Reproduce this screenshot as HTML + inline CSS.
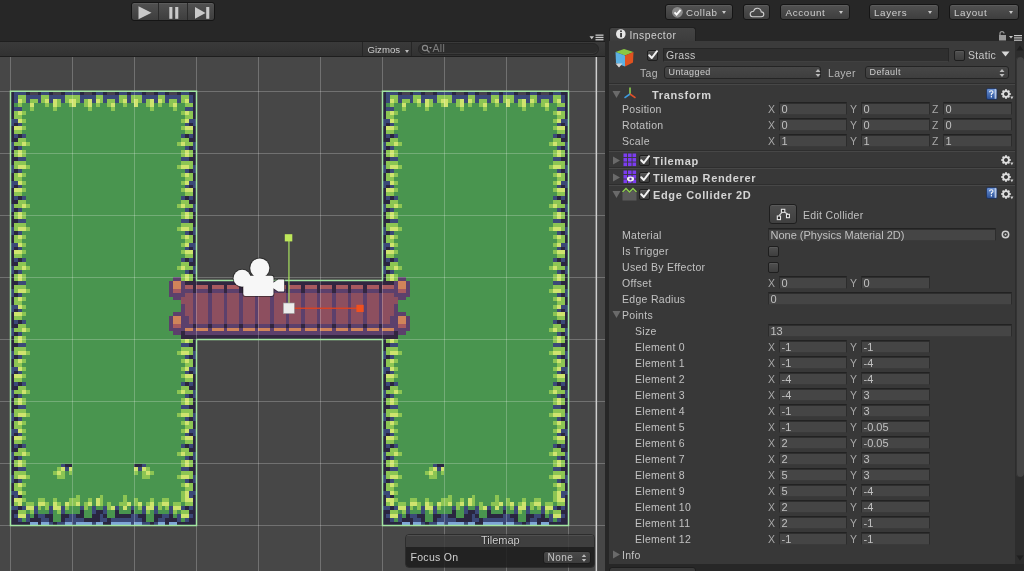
<!DOCTYPE html>
<html><head><meta charset="utf-8">
<style>
*{margin:0;padding:0;box-sizing:border-box}
html,body{-webkit-font-smoothing:antialiased;width:1024px;height:571px;overflow:hidden;background:#272727;font-family:"Liberation Sans",sans-serif;font-size:11px;color:#b4b4b4;position:relative}
.a{position:absolute}
.btn{position:absolute;height:16px;border-radius:3px;background:linear-gradient(#515151,#3e3e3e);border:1px solid #151515;box-shadow:inset 0 1px 0 #5c5c5c}
.btn span{position:absolute;top:1px;font-size:9.8px;letter-spacing:0.65px;line-height:13px;color:#cfcfcf;white-space:nowrap}
.dd{position:absolute;width:0;height:0;border-left:2.5px solid transparent;border-right:2.5px solid transparent;border-top:3px solid #c8c8c8}
.l{position:absolute;font-size:10.5px;letter-spacing:0.3px;color:#c2c2c2;white-space:nowrap;line-height:13px}
.f{position:absolute;height:13px;background:#454545;border-top:1px solid #222;border-left:1px solid #2c2c2c;border-right:1px solid #2c2c2c;border-bottom:1px solid #3a3a3a;box-shadow:inset 0 1px 0 #2e2e2e}
.f span{position:absolute;left:1.5px;top:-0.4px;font-size:11px;color:#c0c0c0;line-height:13px}
.sep{position:absolute;left:609px;width:406px;height:2px;border-top:1px solid #2b2b2b;border-bottom:1px solid #474747}
.h{position:absolute;font-weight:bold;font-size:11px;color:#d4d4d4;letter-spacing:0.65px;line-height:13px;white-space:nowrap}
.cb{position:absolute;width:11px;height:11px;border-radius:2px;background:linear-gradient(#505050,#3e3e3e);border:1px solid #1e1e1e;box-shadow:inset 0 1px 0 #5a5a5a}
.tri{position:absolute;width:0;height:0}
</style></head><body><div id="root" style="position:absolute;left:0;top:0;width:1024px;height:571px;will-change:transform">

<!-- ============ scene svg ============ -->
<svg class="a" style="left:0;top:0" width="1024" height="571" viewBox="0 0 1024 571" shape-rendering="crispEdges">
<defs><filter id="bl" x="-2%" y="-2%" width="104%" height="104%"><feGaussianBlur stdDeviation="0.7"/></filter></defs>
<rect x="0" y="57" width="605" height="514" fill="#474747"/>
<g filter="url(#bl)"><rect x="10.40" y="91.5" width="186" height="434" fill="#4a9550"/>
<rect x="382.40" y="91.5" width="186" height="434" fill="#4a9550"/>
<rect x="10.40" y="91.50" width="3.90" height="3.90" fill="#2b2540"/>
<rect x="14.28" y="91.50" width="11.64" height="3.90" fill="#3a4a78"/>
<rect x="25.90" y="91.50" width="3.90" height="3.90" fill="#2b2540"/>
<rect x="29.77" y="91.50" width="7.77" height="3.90" fill="#47434f"/>
<rect x="37.52" y="91.50" width="3.90" height="3.90" fill="#2b2540"/>
<rect x="41.40" y="91.50" width="7.77" height="3.90" fill="#3a4a78"/>
<rect x="49.15" y="91.50" width="3.90" height="3.90" fill="#2b2540"/>
<rect x="53.02" y="91.50" width="7.77" height="3.90" fill="#47434f"/>
<rect x="60.77" y="91.50" width="3.90" height="3.90" fill="#2b2540"/>
<rect x="64.65" y="91.50" width="15.52" height="3.90" fill="#3a4a78"/>
<rect x="80.15" y="91.50" width="3.90" height="3.90" fill="#2b2540"/>
<rect x="84.03" y="91.50" width="7.77" height="3.90" fill="#47434f"/>
<rect x="91.78" y="91.50" width="3.90" height="3.90" fill="#2b2540"/>
<rect x="95.65" y="91.50" width="7.77" height="3.90" fill="#3a4a78"/>
<rect x="103.40" y="91.50" width="3.90" height="3.90" fill="#2b2540"/>
<rect x="107.28" y="91.50" width="7.77" height="3.90" fill="#47434f"/>
<rect x="115.03" y="91.50" width="3.90" height="3.90" fill="#2b2540"/>
<rect x="118.90" y="91.50" width="7.77" height="3.90" fill="#3a4a78"/>
<rect x="126.65" y="91.50" width="3.90" height="3.90" fill="#2b2540"/>
<rect x="130.53" y="91.50" width="11.64" height="3.90" fill="#3a4a78"/>
<rect x="142.15" y="91.50" width="3.90" height="3.90" fill="#2b2540"/>
<rect x="146.03" y="91.50" width="7.77" height="3.90" fill="#47434f"/>
<rect x="153.78" y="91.50" width="3.90" height="3.90" fill="#2b2540"/>
<rect x="157.65" y="91.50" width="7.77" height="3.90" fill="#3a4a78"/>
<rect x="165.40" y="91.50" width="3.90" height="3.90" fill="#2b2540"/>
<rect x="169.28" y="91.50" width="7.77" height="3.90" fill="#47434f"/>
<rect x="177.03" y="91.50" width="3.90" height="3.90" fill="#2b2540"/>
<rect x="180.90" y="91.50" width="7.77" height="3.90" fill="#3a4a78"/>
<rect x="188.65" y="91.50" width="7.77" height="3.90" fill="#2b2540"/>
<rect x="10.40" y="95.38" width="3.90" height="3.90" fill="#2b2540"/>
<rect x="14.28" y="95.38" width="3.90" height="3.90" fill="#3a4a78"/>
<rect x="18.15" y="95.38" width="7.77" height="3.90" fill="#8cc552"/>
<rect x="25.90" y="95.38" width="15.52" height="3.90" fill="#3a4a78"/>
<rect x="41.40" y="95.38" width="7.77" height="3.90" fill="#8cc552"/>
<rect x="49.15" y="95.38" width="15.52" height="3.90" fill="#3a4a78"/>
<rect x="64.65" y="95.38" width="15.52" height="3.90" fill="#8cc552"/>
<rect x="80.15" y="95.38" width="15.52" height="3.90" fill="#3a4a78"/>
<rect x="95.65" y="95.38" width="7.77" height="3.90" fill="#8cc552"/>
<rect x="103.40" y="95.38" width="15.52" height="3.90" fill="#3a4a78"/>
<rect x="118.90" y="95.38" width="7.77" height="3.90" fill="#8cc552"/>
<rect x="126.65" y="95.38" width="3.90" height="3.90" fill="#3a4a78"/>
<rect x="130.53" y="95.38" width="11.64" height="3.90" fill="#8cc552"/>
<rect x="142.15" y="95.38" width="15.52" height="3.90" fill="#3a4a78"/>
<rect x="157.65" y="95.38" width="7.77" height="3.90" fill="#8cc552"/>
<rect x="165.40" y="95.38" width="15.52" height="3.90" fill="#3a4a78"/>
<rect x="180.90" y="95.38" width="7.77" height="3.90" fill="#8cc552"/>
<rect x="188.65" y="95.38" width="3.90" height="3.90" fill="#3a4a78"/>
<rect x="192.53" y="95.38" width="3.90" height="3.90" fill="#2b2540"/>
<rect x="10.40" y="99.25" width="3.90" height="3.90" fill="#2b2540"/>
<rect x="14.28" y="99.25" width="3.90" height="3.90" fill="#3a4a78"/>
<rect x="18.15" y="99.25" width="3.90" height="3.90" fill="#cfe46e"/>
<rect x="22.02" y="99.25" width="3.90" height="3.90" fill="#8cc552"/>
<rect x="25.90" y="99.25" width="3.90" height="3.90" fill="#3a4a78"/>
<rect x="29.77" y="99.25" width="7.77" height="3.90" fill="#8cc552"/>
<rect x="37.52" y="99.25" width="3.90" height="3.90" fill="#3a4a78"/>
<rect x="41.40" y="99.25" width="3.90" height="3.90" fill="#8cc552"/>
<rect x="45.27" y="99.25" width="3.90" height="3.90" fill="#cfe46e"/>
<rect x="49.15" y="99.25" width="3.90" height="3.90" fill="#3a4a78"/>
<rect x="53.02" y="99.25" width="3.90" height="3.90" fill="#cfe46e"/>
<rect x="56.90" y="99.25" width="3.90" height="3.90" fill="#8cc552"/>
<rect x="60.77" y="99.25" width="3.90" height="3.90" fill="#3a4a78"/>
<rect x="64.65" y="99.25" width="3.90" height="3.90" fill="#8cc552"/>
<rect x="68.53" y="99.25" width="7.77" height="3.90" fill="#cfe46e"/>
<rect x="76.28" y="99.25" width="3.90" height="3.90" fill="#8cc552"/>
<rect x="80.15" y="99.25" width="3.90" height="3.90" fill="#3a4a78"/>
<rect x="84.03" y="99.25" width="3.90" height="3.90" fill="#8cc552"/>
<rect x="87.90" y="99.25" width="3.90" height="3.90" fill="#cfe46e"/>
<rect x="91.78" y="99.25" width="3.90" height="3.90" fill="#3a4a78"/>
<rect x="95.65" y="99.25" width="3.90" height="3.90" fill="#cfe46e"/>
<rect x="99.53" y="99.25" width="3.90" height="3.90" fill="#8cc552"/>
<rect x="103.40" y="99.25" width="3.90" height="3.90" fill="#3a4a78"/>
<rect x="107.28" y="99.25" width="7.77" height="3.90" fill="#8cc552"/>
<rect x="115.03" y="99.25" width="3.90" height="3.90" fill="#3a4a78"/>
<rect x="118.90" y="99.25" width="3.90" height="3.90" fill="#8cc552"/>
<rect x="122.78" y="99.25" width="3.90" height="3.90" fill="#cfe46e"/>
<rect x="126.65" y="99.25" width="3.90" height="3.90" fill="#3a4a78"/>
<rect x="130.53" y="99.25" width="3.90" height="3.90" fill="#8cc552"/>
<rect x="134.40" y="99.25" width="3.90" height="3.90" fill="#cfe46e"/>
<rect x="138.28" y="99.25" width="3.90" height="3.90" fill="#8cc552"/>
<rect x="142.15" y="99.25" width="3.90" height="3.90" fill="#3a4a78"/>
<rect x="146.03" y="99.25" width="3.90" height="3.90" fill="#8cc552"/>
<rect x="149.90" y="99.25" width="3.90" height="3.90" fill="#cfe46e"/>
<rect x="153.78" y="99.25" width="3.90" height="3.90" fill="#3a4a78"/>
<rect x="157.65" y="99.25" width="3.90" height="3.90" fill="#cfe46e"/>
<rect x="161.53" y="99.25" width="3.90" height="3.90" fill="#8cc552"/>
<rect x="165.40" y="99.25" width="3.90" height="3.90" fill="#3a4a78"/>
<rect x="169.28" y="99.25" width="7.77" height="3.90" fill="#8cc552"/>
<rect x="177.03" y="99.25" width="3.90" height="3.90" fill="#3a4a78"/>
<rect x="180.90" y="99.25" width="3.90" height="3.90" fill="#8cc552"/>
<rect x="184.78" y="99.25" width="3.90" height="3.90" fill="#cfe46e"/>
<rect x="188.65" y="99.25" width="3.90" height="3.90" fill="#3a4a78"/>
<rect x="192.53" y="99.25" width="3.90" height="3.90" fill="#2b2540"/>
<rect x="10.40" y="103.12" width="3.90" height="3.90" fill="#2b2540"/>
<rect x="18.15" y="103.12" width="3.90" height="3.90" fill="#8cc552"/>
<rect x="29.77" y="103.12" width="3.90" height="3.90" fill="#cfe46e"/>
<rect x="45.27" y="103.12" width="3.90" height="3.90" fill="#8cc552"/>
<rect x="53.02" y="103.12" width="3.90" height="3.90" fill="#cfe46e"/>
<rect x="56.90" y="103.12" width="3.90" height="3.90" fill="#8cc552"/>
<rect x="68.53" y="103.12" width="3.90" height="3.90" fill="#8cc552"/>
<rect x="72.40" y="103.12" width="3.90" height="3.90" fill="#cfe46e"/>
<rect x="84.03" y="103.12" width="3.90" height="3.90" fill="#8cc552"/>
<rect x="87.90" y="103.12" width="3.90" height="3.90" fill="#cfe46e"/>
<rect x="95.65" y="103.12" width="3.90" height="3.90" fill="#8cc552"/>
<rect x="107.28" y="103.12" width="3.90" height="3.90" fill="#8cc552"/>
<rect x="111.15" y="103.12" width="3.90" height="3.90" fill="#cfe46e"/>
<rect x="122.78" y="103.12" width="3.90" height="3.90" fill="#8cc552"/>
<rect x="134.40" y="103.12" width="3.90" height="3.90" fill="#cfe46e"/>
<rect x="146.03" y="103.12" width="3.90" height="3.90" fill="#8cc552"/>
<rect x="149.90" y="103.12" width="3.90" height="3.90" fill="#cfe46e"/>
<rect x="157.65" y="103.12" width="3.90" height="3.90" fill="#8cc552"/>
<rect x="169.28" y="103.12" width="3.90" height="3.90" fill="#8cc552"/>
<rect x="173.15" y="103.12" width="3.90" height="3.90" fill="#cfe46e"/>
<rect x="184.78" y="103.12" width="7.77" height="3.90" fill="#8cc552"/>
<rect x="192.53" y="103.12" width="3.90" height="3.90" fill="#2b2540"/>
<rect x="10.40" y="107.00" width="3.90" height="3.90" fill="#2b2540"/>
<rect x="14.28" y="107.00" width="7.77" height="3.90" fill="#3a4a78"/>
<rect x="29.77" y="107.00" width="3.90" height="3.90" fill="#8cc552"/>
<rect x="53.02" y="107.00" width="3.90" height="3.90" fill="#8cc552"/>
<rect x="87.90" y="107.00" width="3.90" height="3.90" fill="#8cc552"/>
<rect x="111.15" y="107.00" width="3.90" height="3.90" fill="#8cc552"/>
<rect x="149.90" y="107.00" width="3.90" height="3.90" fill="#8cc552"/>
<rect x="173.15" y="107.00" width="3.90" height="3.90" fill="#8cc552"/>
<rect x="184.78" y="107.00" width="7.77" height="3.90" fill="#3a4a78"/>
<rect x="192.53" y="107.00" width="3.90" height="3.90" fill="#2b2540"/>
<rect x="10.40" y="110.88" width="3.90" height="3.90" fill="#2b2540"/>
<rect x="14.28" y="110.88" width="3.90" height="3.90" fill="#8cc552"/>
<rect x="18.15" y="110.88" width="3.90" height="3.90" fill="#cfe46e"/>
<rect x="22.02" y="110.88" width="3.90" height="3.90" fill="#8cc552"/>
<rect x="180.90" y="110.88" width="3.90" height="3.90" fill="#8cc552"/>
<rect x="184.78" y="110.88" width="3.90" height="3.90" fill="#cfe46e"/>
<rect x="188.65" y="110.88" width="3.90" height="3.90" fill="#8cc552"/>
<rect x="192.53" y="110.88" width="3.90" height="3.90" fill="#2b2540"/>
<rect x="10.40" y="114.75" width="3.90" height="3.90" fill="#2b2540"/>
<rect x="14.28" y="114.75" width="7.77" height="3.90" fill="#8cc552"/>
<rect x="184.78" y="114.75" width="7.77" height="3.90" fill="#8cc552"/>
<rect x="192.53" y="114.75" width="3.90" height="3.90" fill="#2b2540"/>
<rect x="10.40" y="118.62" width="7.77" height="3.90" fill="#3a4a78"/>
<rect x="18.15" y="118.62" width="3.90" height="3.90" fill="#cfe46e"/>
<rect x="22.02" y="118.62" width="3.90" height="3.90" fill="#8cc552"/>
<rect x="180.90" y="118.62" width="3.90" height="3.90" fill="#8cc552"/>
<rect x="184.78" y="118.62" width="3.90" height="3.90" fill="#cfe46e"/>
<rect x="188.65" y="118.62" width="7.77" height="3.90" fill="#3a4a78"/>
<rect x="10.40" y="122.50" width="3.90" height="3.90" fill="#3a4a78"/>
<rect x="14.28" y="122.50" width="3.90" height="3.90" fill="#2b2540"/>
<rect x="18.15" y="122.50" width="3.90" height="3.90" fill="#3a4a78"/>
<rect x="184.78" y="122.50" width="3.90" height="3.90" fill="#3a4a78"/>
<rect x="188.65" y="122.50" width="3.90" height="3.90" fill="#2b2540"/>
<rect x="192.53" y="122.50" width="3.90" height="3.90" fill="#3a4a78"/>
<rect x="10.40" y="126.38" width="3.90" height="3.90" fill="#2b2540"/>
<rect x="14.28" y="126.38" width="7.77" height="3.90" fill="#cfe46e"/>
<rect x="22.02" y="126.38" width="3.90" height="3.90" fill="#8cc552"/>
<rect x="180.90" y="126.38" width="3.90" height="3.90" fill="#8cc552"/>
<rect x="184.78" y="126.38" width="7.77" height="3.90" fill="#cfe46e"/>
<rect x="192.53" y="126.38" width="3.90" height="3.90" fill="#2b2540"/>
<rect x="10.40" y="130.25" width="3.90" height="3.90" fill="#2b2540"/>
<rect x="14.28" y="130.25" width="7.77" height="3.90" fill="#8cc552"/>
<rect x="184.78" y="130.25" width="7.77" height="3.90" fill="#8cc552"/>
<rect x="192.53" y="130.25" width="3.90" height="3.90" fill="#2b2540"/>
<rect x="10.40" y="134.12" width="3.90" height="3.90" fill="#2b2540"/>
<rect x="14.28" y="134.12" width="3.90" height="3.90" fill="#3a4a78"/>
<rect x="18.15" y="134.12" width="3.90" height="3.90" fill="#2b2540"/>
<rect x="22.02" y="134.12" width="3.90" height="3.90" fill="#3a4a78"/>
<rect x="180.90" y="134.12" width="3.90" height="3.90" fill="#3a4a78"/>
<rect x="184.78" y="134.12" width="3.90" height="3.90" fill="#2b2540"/>
<rect x="188.65" y="134.12" width="3.90" height="3.90" fill="#3a4a78"/>
<rect x="192.53" y="134.12" width="3.90" height="3.90" fill="#2b2540"/>
<rect x="10.40" y="138.00" width="7.77" height="3.90" fill="#2b2540"/>
<rect x="18.15" y="138.00" width="7.77" height="3.90" fill="#8cc552"/>
<rect x="180.90" y="138.00" width="7.77" height="3.90" fill="#8cc552"/>
<rect x="188.65" y="138.00" width="7.77" height="3.90" fill="#2b2540"/>
<rect x="10.40" y="141.88" width="3.90" height="3.90" fill="#3a4a78"/>
<rect x="14.28" y="141.88" width="7.77" height="3.90" fill="#8cc552"/>
<rect x="22.02" y="141.88" width="3.90" height="3.90" fill="#cfe46e"/>
<rect x="25.90" y="141.88" width="3.90" height="3.90" fill="#8cc552"/>
<rect x="177.03" y="141.88" width="3.90" height="3.90" fill="#8cc552"/>
<rect x="180.90" y="141.88" width="3.90" height="3.90" fill="#cfe46e"/>
<rect x="184.78" y="141.88" width="7.77" height="3.90" fill="#8cc552"/>
<rect x="192.53" y="141.88" width="3.90" height="3.90" fill="#3a4a78"/>
<rect x="10.40" y="145.75" width="3.90" height="3.90" fill="#3a4a78"/>
<rect x="14.28" y="145.75" width="3.90" height="3.90" fill="#2b2540"/>
<rect x="18.15" y="145.75" width="3.90" height="3.90" fill="#3a4a78"/>
<rect x="184.78" y="145.75" width="3.90" height="3.90" fill="#3a4a78"/>
<rect x="188.65" y="145.75" width="3.90" height="3.90" fill="#2b2540"/>
<rect x="192.53" y="145.75" width="3.90" height="3.90" fill="#3a4a78"/>
<rect x="10.40" y="149.62" width="3.90" height="3.90" fill="#2b2540"/>
<rect x="14.28" y="149.62" width="3.90" height="3.90" fill="#8cc552"/>
<rect x="18.15" y="149.62" width="3.90" height="3.90" fill="#cfe46e"/>
<rect x="22.02" y="149.62" width="3.90" height="3.90" fill="#8cc552"/>
<rect x="180.90" y="149.62" width="3.90" height="3.90" fill="#8cc552"/>
<rect x="184.78" y="149.62" width="3.90" height="3.90" fill="#cfe46e"/>
<rect x="188.65" y="149.62" width="3.90" height="3.90" fill="#8cc552"/>
<rect x="192.53" y="149.62" width="3.90" height="3.90" fill="#2b2540"/>
<rect x="10.40" y="153.50" width="3.90" height="3.90" fill="#2b2540"/>
<rect x="14.28" y="153.50" width="3.90" height="3.90" fill="#8cc552"/>
<rect x="18.15" y="153.50" width="3.90" height="3.90" fill="#cfe46e"/>
<rect x="22.02" y="153.50" width="3.90" height="3.90" fill="#8cc552"/>
<rect x="180.90" y="153.50" width="3.90" height="3.90" fill="#8cc552"/>
<rect x="184.78" y="153.50" width="3.90" height="3.90" fill="#cfe46e"/>
<rect x="188.65" y="153.50" width="3.90" height="3.90" fill="#8cc552"/>
<rect x="192.53" y="153.50" width="3.90" height="3.90" fill="#2b2540"/>
<rect x="10.40" y="157.38" width="7.77" height="3.90" fill="#2b2540"/>
<rect x="18.15" y="157.38" width="7.77" height="3.90" fill="#3a4a78"/>
<rect x="180.90" y="157.38" width="7.77" height="3.90" fill="#3a4a78"/>
<rect x="188.65" y="157.38" width="7.77" height="3.90" fill="#2b2540"/>
<rect x="10.40" y="161.25" width="3.90" height="3.90" fill="#2b2540"/>
<rect x="14.28" y="161.25" width="11.64" height="3.90" fill="#8cc552"/>
<rect x="180.90" y="161.25" width="11.64" height="3.90" fill="#8cc552"/>
<rect x="192.53" y="161.25" width="3.90" height="3.90" fill="#2b2540"/>
<rect x="10.40" y="165.12" width="3.90" height="3.90" fill="#3a4a78"/>
<rect x="14.28" y="165.12" width="3.90" height="3.90" fill="#8cc552"/>
<rect x="18.15" y="165.12" width="7.77" height="3.90" fill="#cfe46e"/>
<rect x="25.90" y="165.12" width="3.90" height="3.90" fill="#8cc552"/>
<rect x="177.03" y="165.12" width="3.90" height="3.90" fill="#8cc552"/>
<rect x="180.90" y="165.12" width="7.77" height="3.90" fill="#cfe46e"/>
<rect x="188.65" y="165.12" width="3.90" height="3.90" fill="#8cc552"/>
<rect x="192.53" y="165.12" width="3.90" height="3.90" fill="#3a4a78"/>
<rect x="10.40" y="169.00" width="3.90" height="3.90" fill="#3a4a78"/>
<rect x="14.28" y="169.00" width="3.90" height="3.90" fill="#2b2540"/>
<rect x="18.15" y="169.00" width="3.90" height="3.90" fill="#3a4a78"/>
<rect x="184.78" y="169.00" width="3.90" height="3.90" fill="#3a4a78"/>
<rect x="188.65" y="169.00" width="3.90" height="3.90" fill="#2b2540"/>
<rect x="192.53" y="169.00" width="3.90" height="3.90" fill="#3a4a78"/>
<rect x="10.40" y="172.88" width="3.90" height="3.90" fill="#2b2540"/>
<rect x="14.28" y="172.88" width="3.90" height="3.90" fill="#8cc552"/>
<rect x="18.15" y="172.88" width="3.90" height="3.90" fill="#cfe46e"/>
<rect x="22.02" y="172.88" width="3.90" height="3.90" fill="#8cc552"/>
<rect x="180.90" y="172.88" width="3.90" height="3.90" fill="#8cc552"/>
<rect x="184.78" y="172.88" width="3.90" height="3.90" fill="#cfe46e"/>
<rect x="188.65" y="172.88" width="3.90" height="3.90" fill="#8cc552"/>
<rect x="192.53" y="172.88" width="3.90" height="3.90" fill="#2b2540"/>
<rect x="10.40" y="176.75" width="3.90" height="3.90" fill="#2b2540"/>
<rect x="14.28" y="176.75" width="7.77" height="3.90" fill="#8cc552"/>
<rect x="184.78" y="176.75" width="7.77" height="3.90" fill="#8cc552"/>
<rect x="192.53" y="176.75" width="3.90" height="3.90" fill="#2b2540"/>
<rect x="10.40" y="180.62" width="7.77" height="3.90" fill="#3a4a78"/>
<rect x="18.15" y="180.62" width="3.90" height="3.90" fill="#cfe46e"/>
<rect x="22.02" y="180.62" width="3.90" height="3.90" fill="#8cc552"/>
<rect x="180.90" y="180.62" width="3.90" height="3.90" fill="#8cc552"/>
<rect x="184.78" y="180.62" width="3.90" height="3.90" fill="#cfe46e"/>
<rect x="188.65" y="180.62" width="7.77" height="3.90" fill="#3a4a78"/>
<rect x="10.40" y="184.50" width="3.90" height="3.90" fill="#3a4a78"/>
<rect x="14.28" y="184.50" width="3.90" height="3.90" fill="#2b2540"/>
<rect x="18.15" y="184.50" width="3.90" height="3.90" fill="#3a4a78"/>
<rect x="184.78" y="184.50" width="3.90" height="3.90" fill="#3a4a78"/>
<rect x="188.65" y="184.50" width="3.90" height="3.90" fill="#2b2540"/>
<rect x="192.53" y="184.50" width="3.90" height="3.90" fill="#3a4a78"/>
<rect x="10.40" y="188.38" width="3.90" height="3.90" fill="#2b2540"/>
<rect x="14.28" y="188.38" width="7.77" height="3.90" fill="#cfe46e"/>
<rect x="22.02" y="188.38" width="3.90" height="3.90" fill="#8cc552"/>
<rect x="180.90" y="188.38" width="3.90" height="3.90" fill="#8cc552"/>
<rect x="184.78" y="188.38" width="7.77" height="3.90" fill="#cfe46e"/>
<rect x="192.53" y="188.38" width="3.90" height="3.90" fill="#2b2540"/>
<rect x="10.40" y="192.25" width="3.90" height="3.90" fill="#2b2540"/>
<rect x="14.28" y="192.25" width="7.77" height="3.90" fill="#8cc552"/>
<rect x="184.78" y="192.25" width="7.77" height="3.90" fill="#8cc552"/>
<rect x="192.53" y="192.25" width="3.90" height="3.90" fill="#2b2540"/>
<rect x="10.40" y="196.12" width="3.90" height="3.90" fill="#2b2540"/>
<rect x="14.28" y="196.12" width="3.90" height="3.90" fill="#3a4a78"/>
<rect x="18.15" y="196.12" width="3.90" height="3.90" fill="#2b2540"/>
<rect x="22.02" y="196.12" width="3.90" height="3.90" fill="#3a4a78"/>
<rect x="180.90" y="196.12" width="3.90" height="3.90" fill="#3a4a78"/>
<rect x="184.78" y="196.12" width="3.90" height="3.90" fill="#2b2540"/>
<rect x="188.65" y="196.12" width="3.90" height="3.90" fill="#3a4a78"/>
<rect x="192.53" y="196.12" width="3.90" height="3.90" fill="#2b2540"/>
<rect x="10.40" y="200.00" width="7.77" height="3.90" fill="#2b2540"/>
<rect x="18.15" y="200.00" width="7.77" height="3.90" fill="#8cc552"/>
<rect x="180.90" y="200.00" width="7.77" height="3.90" fill="#8cc552"/>
<rect x="188.65" y="200.00" width="7.77" height="3.90" fill="#2b2540"/>
<rect x="10.40" y="203.88" width="3.90" height="3.90" fill="#3a4a78"/>
<rect x="14.28" y="203.88" width="7.77" height="3.90" fill="#8cc552"/>
<rect x="22.02" y="203.88" width="3.90" height="3.90" fill="#cfe46e"/>
<rect x="25.90" y="203.88" width="3.90" height="3.90" fill="#8cc552"/>
<rect x="177.03" y="203.88" width="3.90" height="3.90" fill="#8cc552"/>
<rect x="180.90" y="203.88" width="3.90" height="3.90" fill="#cfe46e"/>
<rect x="184.78" y="203.88" width="7.77" height="3.90" fill="#8cc552"/>
<rect x="192.53" y="203.88" width="3.90" height="3.90" fill="#3a4a78"/>
<rect x="10.40" y="207.75" width="3.90" height="3.90" fill="#3a4a78"/>
<rect x="14.28" y="207.75" width="3.90" height="3.90" fill="#2b2540"/>
<rect x="18.15" y="207.75" width="3.90" height="3.90" fill="#3a4a78"/>
<rect x="184.78" y="207.75" width="3.90" height="3.90" fill="#3a4a78"/>
<rect x="188.65" y="207.75" width="3.90" height="3.90" fill="#2b2540"/>
<rect x="192.53" y="207.75" width="3.90" height="3.90" fill="#3a4a78"/>
<rect x="10.40" y="211.62" width="3.90" height="3.90" fill="#2b2540"/>
<rect x="14.28" y="211.62" width="3.90" height="3.90" fill="#8cc552"/>
<rect x="18.15" y="211.62" width="3.90" height="3.90" fill="#cfe46e"/>
<rect x="22.02" y="211.62" width="3.90" height="3.90" fill="#8cc552"/>
<rect x="180.90" y="211.62" width="3.90" height="3.90" fill="#8cc552"/>
<rect x="184.78" y="211.62" width="3.90" height="3.90" fill="#cfe46e"/>
<rect x="188.65" y="211.62" width="3.90" height="3.90" fill="#8cc552"/>
<rect x="192.53" y="211.62" width="3.90" height="3.90" fill="#2b2540"/>
<rect x="10.40" y="215.50" width="3.90" height="3.90" fill="#2b2540"/>
<rect x="14.28" y="215.50" width="3.90" height="3.90" fill="#8cc552"/>
<rect x="18.15" y="215.50" width="3.90" height="3.90" fill="#cfe46e"/>
<rect x="22.02" y="215.50" width="3.90" height="3.90" fill="#8cc552"/>
<rect x="180.90" y="215.50" width="3.90" height="3.90" fill="#8cc552"/>
<rect x="184.78" y="215.50" width="3.90" height="3.90" fill="#cfe46e"/>
<rect x="188.65" y="215.50" width="3.90" height="3.90" fill="#8cc552"/>
<rect x="192.53" y="215.50" width="3.90" height="3.90" fill="#2b2540"/>
<rect x="10.40" y="219.38" width="7.77" height="3.90" fill="#2b2540"/>
<rect x="18.15" y="219.38" width="7.77" height="3.90" fill="#3a4a78"/>
<rect x="180.90" y="219.38" width="7.77" height="3.90" fill="#3a4a78"/>
<rect x="188.65" y="219.38" width="7.77" height="3.90" fill="#2b2540"/>
<rect x="10.40" y="223.25" width="3.90" height="3.90" fill="#2b2540"/>
<rect x="14.28" y="223.25" width="11.64" height="3.90" fill="#8cc552"/>
<rect x="180.90" y="223.25" width="11.64" height="3.90" fill="#8cc552"/>
<rect x="192.53" y="223.25" width="3.90" height="3.90" fill="#2b2540"/>
<rect x="10.40" y="227.12" width="3.90" height="3.90" fill="#3a4a78"/>
<rect x="14.28" y="227.12" width="3.90" height="3.90" fill="#8cc552"/>
<rect x="18.15" y="227.12" width="7.77" height="3.90" fill="#cfe46e"/>
<rect x="25.90" y="227.12" width="3.90" height="3.90" fill="#8cc552"/>
<rect x="177.03" y="227.12" width="3.90" height="3.90" fill="#8cc552"/>
<rect x="180.90" y="227.12" width="7.77" height="3.90" fill="#cfe46e"/>
<rect x="188.65" y="227.12" width="3.90" height="3.90" fill="#8cc552"/>
<rect x="192.53" y="227.12" width="3.90" height="3.90" fill="#3a4a78"/>
<rect x="10.40" y="231.00" width="3.90" height="3.90" fill="#3a4a78"/>
<rect x="14.28" y="231.00" width="3.90" height="3.90" fill="#2b2540"/>
<rect x="18.15" y="231.00" width="3.90" height="3.90" fill="#3a4a78"/>
<rect x="184.78" y="231.00" width="3.90" height="3.90" fill="#3a4a78"/>
<rect x="188.65" y="231.00" width="3.90" height="3.90" fill="#2b2540"/>
<rect x="192.53" y="231.00" width="3.90" height="3.90" fill="#3a4a78"/>
<rect x="10.40" y="234.88" width="3.90" height="3.90" fill="#2b2540"/>
<rect x="14.28" y="234.88" width="3.90" height="3.90" fill="#8cc552"/>
<rect x="18.15" y="234.88" width="3.90" height="3.90" fill="#cfe46e"/>
<rect x="22.02" y="234.88" width="3.90" height="3.90" fill="#8cc552"/>
<rect x="180.90" y="234.88" width="3.90" height="3.90" fill="#8cc552"/>
<rect x="184.78" y="234.88" width="3.90" height="3.90" fill="#cfe46e"/>
<rect x="188.65" y="234.88" width="3.90" height="3.90" fill="#8cc552"/>
<rect x="192.53" y="234.88" width="3.90" height="3.90" fill="#2b2540"/>
<rect x="10.40" y="238.75" width="3.90" height="3.90" fill="#2b2540"/>
<rect x="14.28" y="238.75" width="7.77" height="3.90" fill="#8cc552"/>
<rect x="184.78" y="238.75" width="7.77" height="3.90" fill="#8cc552"/>
<rect x="192.53" y="238.75" width="3.90" height="3.90" fill="#2b2540"/>
<rect x="10.40" y="242.62" width="7.77" height="3.90" fill="#3a4a78"/>
<rect x="18.15" y="242.62" width="3.90" height="3.90" fill="#cfe46e"/>
<rect x="22.02" y="242.62" width="3.90" height="3.90" fill="#8cc552"/>
<rect x="180.90" y="242.62" width="3.90" height="3.90" fill="#8cc552"/>
<rect x="184.78" y="242.62" width="3.90" height="3.90" fill="#cfe46e"/>
<rect x="188.65" y="242.62" width="7.77" height="3.90" fill="#3a4a78"/>
<rect x="10.40" y="246.50" width="3.90" height="3.90" fill="#3a4a78"/>
<rect x="14.28" y="246.50" width="3.90" height="3.90" fill="#2b2540"/>
<rect x="18.15" y="246.50" width="3.90" height="3.90" fill="#3a4a78"/>
<rect x="184.78" y="246.50" width="3.90" height="3.90" fill="#3a4a78"/>
<rect x="188.65" y="246.50" width="3.90" height="3.90" fill="#2b2540"/>
<rect x="192.53" y="246.50" width="3.90" height="3.90" fill="#3a4a78"/>
<rect x="10.40" y="250.38" width="3.90" height="3.90" fill="#2b2540"/>
<rect x="14.28" y="250.38" width="7.77" height="3.90" fill="#cfe46e"/>
<rect x="22.02" y="250.38" width="3.90" height="3.90" fill="#8cc552"/>
<rect x="180.90" y="250.38" width="3.90" height="3.90" fill="#8cc552"/>
<rect x="184.78" y="250.38" width="7.77" height="3.90" fill="#cfe46e"/>
<rect x="192.53" y="250.38" width="3.90" height="3.90" fill="#2b2540"/>
<rect x="10.40" y="254.25" width="3.90" height="3.90" fill="#2b2540"/>
<rect x="14.28" y="254.25" width="7.77" height="3.90" fill="#8cc552"/>
<rect x="184.78" y="254.25" width="7.77" height="3.90" fill="#8cc552"/>
<rect x="192.53" y="254.25" width="3.90" height="3.90" fill="#2b2540"/>
<rect x="10.40" y="258.12" width="3.90" height="3.90" fill="#2b2540"/>
<rect x="14.28" y="258.12" width="3.90" height="3.90" fill="#3a4a78"/>
<rect x="18.15" y="258.12" width="3.90" height="3.90" fill="#2b2540"/>
<rect x="22.02" y="258.12" width="3.90" height="3.90" fill="#3a4a78"/>
<rect x="180.90" y="258.12" width="3.90" height="3.90" fill="#3a4a78"/>
<rect x="184.78" y="258.12" width="3.90" height="3.90" fill="#2b2540"/>
<rect x="188.65" y="258.12" width="3.90" height="3.90" fill="#3a4a78"/>
<rect x="192.53" y="258.12" width="3.90" height="3.90" fill="#2b2540"/>
<rect x="10.40" y="262.00" width="7.77" height="3.90" fill="#2b2540"/>
<rect x="18.15" y="262.00" width="7.77" height="3.90" fill="#8cc552"/>
<rect x="180.90" y="262.00" width="7.77" height="3.90" fill="#8cc552"/>
<rect x="188.65" y="262.00" width="7.77" height="3.90" fill="#2b2540"/>
<rect x="10.40" y="265.88" width="3.90" height="3.90" fill="#3a4a78"/>
<rect x="14.28" y="265.88" width="7.77" height="3.90" fill="#8cc552"/>
<rect x="22.02" y="265.88" width="3.90" height="3.90" fill="#cfe46e"/>
<rect x="25.90" y="265.88" width="3.90" height="3.90" fill="#8cc552"/>
<rect x="177.03" y="265.88" width="3.90" height="3.90" fill="#8cc552"/>
<rect x="180.90" y="265.88" width="3.90" height="3.90" fill="#cfe46e"/>
<rect x="184.78" y="265.88" width="7.77" height="3.90" fill="#8cc552"/>
<rect x="192.53" y="265.88" width="3.90" height="3.90" fill="#3a4a78"/>
<rect x="10.40" y="269.75" width="3.90" height="3.90" fill="#3a4a78"/>
<rect x="14.28" y="269.75" width="3.90" height="3.90" fill="#2b2540"/>
<rect x="18.15" y="269.75" width="3.90" height="3.90" fill="#3a4a78"/>
<rect x="184.78" y="269.75" width="3.90" height="3.90" fill="#3a4a78"/>
<rect x="188.65" y="269.75" width="3.90" height="3.90" fill="#2b2540"/>
<rect x="192.53" y="269.75" width="3.90" height="3.90" fill="#3a4a78"/>
<rect x="10.40" y="273.62" width="3.90" height="3.90" fill="#2b2540"/>
<rect x="14.28" y="273.62" width="3.90" height="3.90" fill="#8cc552"/>
<rect x="18.15" y="273.62" width="3.90" height="3.90" fill="#cfe46e"/>
<rect x="22.02" y="273.62" width="3.90" height="3.90" fill="#8cc552"/>
<rect x="180.90" y="273.62" width="3.90" height="3.90" fill="#8cc552"/>
<rect x="184.78" y="273.62" width="3.90" height="3.90" fill="#cfe46e"/>
<rect x="188.65" y="273.62" width="3.90" height="3.90" fill="#8cc552"/>
<rect x="192.53" y="273.62" width="3.90" height="3.90" fill="#2b2540"/>
<rect x="10.40" y="277.50" width="3.90" height="3.90" fill="#2b2540"/>
<rect x="14.28" y="277.50" width="3.90" height="3.90" fill="#8cc552"/>
<rect x="18.15" y="277.50" width="3.90" height="3.90" fill="#cfe46e"/>
<rect x="22.02" y="277.50" width="3.90" height="3.90" fill="#8cc552"/>
<rect x="180.90" y="277.50" width="3.90" height="3.90" fill="#8cc552"/>
<rect x="184.78" y="277.50" width="3.90" height="3.90" fill="#cfe46e"/>
<rect x="188.65" y="277.50" width="3.90" height="3.90" fill="#8cc552"/>
<rect x="192.53" y="277.50" width="3.90" height="3.90" fill="#2b2540"/>
<rect x="10.40" y="281.38" width="7.77" height="3.90" fill="#2b2540"/>
<rect x="18.15" y="281.38" width="7.77" height="3.90" fill="#3a4a78"/>
<rect x="180.90" y="281.38" width="7.77" height="3.90" fill="#3a4a78"/>
<rect x="188.65" y="281.38" width="7.77" height="3.90" fill="#2b2540"/>
<rect x="10.40" y="285.25" width="3.90" height="3.90" fill="#2b2540"/>
<rect x="14.28" y="285.25" width="11.64" height="3.90" fill="#8cc552"/>
<rect x="180.90" y="285.25" width="11.64" height="3.90" fill="#8cc552"/>
<rect x="192.53" y="285.25" width="3.90" height="3.90" fill="#2b2540"/>
<rect x="10.40" y="289.12" width="3.90" height="3.90" fill="#3a4a78"/>
<rect x="14.28" y="289.12" width="3.90" height="3.90" fill="#8cc552"/>
<rect x="18.15" y="289.12" width="7.77" height="3.90" fill="#cfe46e"/>
<rect x="25.90" y="289.12" width="3.90" height="3.90" fill="#8cc552"/>
<rect x="177.03" y="289.12" width="3.90" height="3.90" fill="#8cc552"/>
<rect x="180.90" y="289.12" width="7.77" height="3.90" fill="#cfe46e"/>
<rect x="188.65" y="289.12" width="3.90" height="3.90" fill="#8cc552"/>
<rect x="192.53" y="289.12" width="3.90" height="3.90" fill="#3a4a78"/>
<rect x="10.40" y="293.00" width="3.90" height="3.90" fill="#3a4a78"/>
<rect x="14.28" y="293.00" width="3.90" height="3.90" fill="#2b2540"/>
<rect x="18.15" y="293.00" width="3.90" height="3.90" fill="#3a4a78"/>
<rect x="184.78" y="293.00" width="3.90" height="3.90" fill="#3a4a78"/>
<rect x="188.65" y="293.00" width="3.90" height="3.90" fill="#2b2540"/>
<rect x="192.53" y="293.00" width="3.90" height="3.90" fill="#3a4a78"/>
<rect x="10.40" y="296.88" width="3.90" height="3.90" fill="#2b2540"/>
<rect x="14.28" y="296.88" width="3.90" height="3.90" fill="#8cc552"/>
<rect x="18.15" y="296.88" width="3.90" height="3.90" fill="#cfe46e"/>
<rect x="22.02" y="296.88" width="3.90" height="3.90" fill="#8cc552"/>
<rect x="180.90" y="296.88" width="3.90" height="3.90" fill="#8cc552"/>
<rect x="184.78" y="296.88" width="3.90" height="3.90" fill="#cfe46e"/>
<rect x="188.65" y="296.88" width="3.90" height="3.90" fill="#8cc552"/>
<rect x="192.53" y="296.88" width="3.90" height="3.90" fill="#2b2540"/>
<rect x="10.40" y="300.75" width="3.90" height="3.90" fill="#2b2540"/>
<rect x="14.28" y="300.75" width="7.77" height="3.90" fill="#8cc552"/>
<rect x="184.78" y="300.75" width="7.77" height="3.90" fill="#8cc552"/>
<rect x="192.53" y="300.75" width="3.90" height="3.90" fill="#2b2540"/>
<rect x="10.40" y="304.62" width="7.77" height="3.90" fill="#3a4a78"/>
<rect x="18.15" y="304.62" width="3.90" height="3.90" fill="#cfe46e"/>
<rect x="22.02" y="304.62" width="3.90" height="3.90" fill="#8cc552"/>
<rect x="180.90" y="304.62" width="3.90" height="3.90" fill="#8cc552"/>
<rect x="184.78" y="304.62" width="3.90" height="3.90" fill="#cfe46e"/>
<rect x="188.65" y="304.62" width="7.77" height="3.90" fill="#3a4a78"/>
<rect x="10.40" y="308.50" width="3.90" height="3.90" fill="#3a4a78"/>
<rect x="14.28" y="308.50" width="3.90" height="3.90" fill="#2b2540"/>
<rect x="18.15" y="308.50" width="3.90" height="3.90" fill="#3a4a78"/>
<rect x="184.78" y="308.50" width="3.90" height="3.90" fill="#3a4a78"/>
<rect x="188.65" y="308.50" width="3.90" height="3.90" fill="#2b2540"/>
<rect x="192.53" y="308.50" width="3.90" height="3.90" fill="#3a4a78"/>
<rect x="10.40" y="312.38" width="3.90" height="3.90" fill="#2b2540"/>
<rect x="14.28" y="312.38" width="7.77" height="3.90" fill="#cfe46e"/>
<rect x="22.02" y="312.38" width="3.90" height="3.90" fill="#8cc552"/>
<rect x="180.90" y="312.38" width="3.90" height="3.90" fill="#8cc552"/>
<rect x="184.78" y="312.38" width="7.77" height="3.90" fill="#cfe46e"/>
<rect x="192.53" y="312.38" width="3.90" height="3.90" fill="#2b2540"/>
<rect x="10.40" y="316.25" width="3.90" height="3.90" fill="#2b2540"/>
<rect x="14.28" y="316.25" width="7.77" height="3.90" fill="#8cc552"/>
<rect x="184.78" y="316.25" width="7.77" height="3.90" fill="#8cc552"/>
<rect x="192.53" y="316.25" width="3.90" height="3.90" fill="#2b2540"/>
<rect x="10.40" y="320.12" width="3.90" height="3.90" fill="#2b2540"/>
<rect x="14.28" y="320.12" width="3.90" height="3.90" fill="#3a4a78"/>
<rect x="18.15" y="320.12" width="3.90" height="3.90" fill="#2b2540"/>
<rect x="22.02" y="320.12" width="3.90" height="3.90" fill="#3a4a78"/>
<rect x="180.90" y="320.12" width="3.90" height="3.90" fill="#3a4a78"/>
<rect x="184.78" y="320.12" width="3.90" height="3.90" fill="#2b2540"/>
<rect x="188.65" y="320.12" width="3.90" height="3.90" fill="#3a4a78"/>
<rect x="192.53" y="320.12" width="3.90" height="3.90" fill="#2b2540"/>
<rect x="10.40" y="324.00" width="7.77" height="3.90" fill="#2b2540"/>
<rect x="18.15" y="324.00" width="7.77" height="3.90" fill="#8cc552"/>
<rect x="180.90" y="324.00" width="7.77" height="3.90" fill="#8cc552"/>
<rect x="188.65" y="324.00" width="7.77" height="3.90" fill="#2b2540"/>
<rect x="10.40" y="327.88" width="3.90" height="3.90" fill="#3a4a78"/>
<rect x="14.28" y="327.88" width="7.77" height="3.90" fill="#8cc552"/>
<rect x="22.02" y="327.88" width="3.90" height="3.90" fill="#cfe46e"/>
<rect x="25.90" y="327.88" width="3.90" height="3.90" fill="#8cc552"/>
<rect x="177.03" y="327.88" width="3.90" height="3.90" fill="#8cc552"/>
<rect x="180.90" y="327.88" width="3.90" height="3.90" fill="#cfe46e"/>
<rect x="184.78" y="327.88" width="7.77" height="3.90" fill="#8cc552"/>
<rect x="192.53" y="327.88" width="3.90" height="3.90" fill="#3a4a78"/>
<rect x="10.40" y="331.75" width="3.90" height="3.90" fill="#3a4a78"/>
<rect x="14.28" y="331.75" width="3.90" height="3.90" fill="#2b2540"/>
<rect x="18.15" y="331.75" width="3.90" height="3.90" fill="#3a4a78"/>
<rect x="184.78" y="331.75" width="3.90" height="3.90" fill="#3a4a78"/>
<rect x="188.65" y="331.75" width="3.90" height="3.90" fill="#2b2540"/>
<rect x="192.53" y="331.75" width="3.90" height="3.90" fill="#3a4a78"/>
<rect x="10.40" y="335.62" width="3.90" height="3.90" fill="#2b2540"/>
<rect x="14.28" y="335.62" width="3.90" height="3.90" fill="#8cc552"/>
<rect x="18.15" y="335.62" width="3.90" height="3.90" fill="#cfe46e"/>
<rect x="22.02" y="335.62" width="3.90" height="3.90" fill="#8cc552"/>
<rect x="180.90" y="335.62" width="3.90" height="3.90" fill="#8cc552"/>
<rect x="184.78" y="335.62" width="3.90" height="3.90" fill="#cfe46e"/>
<rect x="188.65" y="335.62" width="3.90" height="3.90" fill="#8cc552"/>
<rect x="192.53" y="335.62" width="3.90" height="3.90" fill="#2b2540"/>
<rect x="10.40" y="339.50" width="3.90" height="3.90" fill="#2b2540"/>
<rect x="14.28" y="339.50" width="3.90" height="3.90" fill="#8cc552"/>
<rect x="18.15" y="339.50" width="3.90" height="3.90" fill="#cfe46e"/>
<rect x="22.02" y="339.50" width="3.90" height="3.90" fill="#8cc552"/>
<rect x="180.90" y="339.50" width="3.90" height="3.90" fill="#8cc552"/>
<rect x="184.78" y="339.50" width="3.90" height="3.90" fill="#cfe46e"/>
<rect x="188.65" y="339.50" width="3.90" height="3.90" fill="#8cc552"/>
<rect x="192.53" y="339.50" width="3.90" height="3.90" fill="#2b2540"/>
<rect x="10.40" y="343.38" width="7.77" height="3.90" fill="#2b2540"/>
<rect x="18.15" y="343.38" width="7.77" height="3.90" fill="#3a4a78"/>
<rect x="180.90" y="343.38" width="7.77" height="3.90" fill="#3a4a78"/>
<rect x="188.65" y="343.38" width="7.77" height="3.90" fill="#2b2540"/>
<rect x="10.40" y="347.25" width="3.90" height="3.90" fill="#2b2540"/>
<rect x="14.28" y="347.25" width="11.64" height="3.90" fill="#8cc552"/>
<rect x="180.90" y="347.25" width="11.64" height="3.90" fill="#8cc552"/>
<rect x="192.53" y="347.25" width="3.90" height="3.90" fill="#2b2540"/>
<rect x="10.40" y="351.12" width="3.90" height="3.90" fill="#3a4a78"/>
<rect x="14.28" y="351.12" width="3.90" height="3.90" fill="#8cc552"/>
<rect x="18.15" y="351.12" width="7.77" height="3.90" fill="#cfe46e"/>
<rect x="25.90" y="351.12" width="3.90" height="3.90" fill="#8cc552"/>
<rect x="177.03" y="351.12" width="3.90" height="3.90" fill="#8cc552"/>
<rect x="180.90" y="351.12" width="7.77" height="3.90" fill="#cfe46e"/>
<rect x="188.65" y="351.12" width="3.90" height="3.90" fill="#8cc552"/>
<rect x="192.53" y="351.12" width="3.90" height="3.90" fill="#3a4a78"/>
<rect x="10.40" y="355.00" width="3.90" height="3.90" fill="#3a4a78"/>
<rect x="14.28" y="355.00" width="3.90" height="3.90" fill="#2b2540"/>
<rect x="18.15" y="355.00" width="3.90" height="3.90" fill="#3a4a78"/>
<rect x="184.78" y="355.00" width="3.90" height="3.90" fill="#3a4a78"/>
<rect x="188.65" y="355.00" width="3.90" height="3.90" fill="#2b2540"/>
<rect x="192.53" y="355.00" width="3.90" height="3.90" fill="#3a4a78"/>
<rect x="10.40" y="358.88" width="3.90" height="3.90" fill="#2b2540"/>
<rect x="14.28" y="358.88" width="3.90" height="3.90" fill="#8cc552"/>
<rect x="18.15" y="358.88" width="3.90" height="3.90" fill="#cfe46e"/>
<rect x="22.02" y="358.88" width="3.90" height="3.90" fill="#8cc552"/>
<rect x="180.90" y="358.88" width="3.90" height="3.90" fill="#8cc552"/>
<rect x="184.78" y="358.88" width="3.90" height="3.90" fill="#cfe46e"/>
<rect x="188.65" y="358.88" width="3.90" height="3.90" fill="#8cc552"/>
<rect x="192.53" y="358.88" width="3.90" height="3.90" fill="#2b2540"/>
<rect x="10.40" y="362.75" width="3.90" height="3.90" fill="#2b2540"/>
<rect x="14.28" y="362.75" width="7.77" height="3.90" fill="#8cc552"/>
<rect x="184.78" y="362.75" width="7.77" height="3.90" fill="#8cc552"/>
<rect x="192.53" y="362.75" width="3.90" height="3.90" fill="#2b2540"/>
<rect x="10.40" y="366.62" width="7.77" height="3.90" fill="#3a4a78"/>
<rect x="18.15" y="366.62" width="3.90" height="3.90" fill="#cfe46e"/>
<rect x="22.02" y="366.62" width="3.90" height="3.90" fill="#8cc552"/>
<rect x="180.90" y="366.62" width="3.90" height="3.90" fill="#8cc552"/>
<rect x="184.78" y="366.62" width="3.90" height="3.90" fill="#cfe46e"/>
<rect x="188.65" y="366.62" width="7.77" height="3.90" fill="#3a4a78"/>
<rect x="10.40" y="370.50" width="3.90" height="3.90" fill="#3a4a78"/>
<rect x="14.28" y="370.50" width="3.90" height="3.90" fill="#2b2540"/>
<rect x="18.15" y="370.50" width="3.90" height="3.90" fill="#3a4a78"/>
<rect x="184.78" y="370.50" width="3.90" height="3.90" fill="#3a4a78"/>
<rect x="188.65" y="370.50" width="3.90" height="3.90" fill="#2b2540"/>
<rect x="192.53" y="370.50" width="3.90" height="3.90" fill="#3a4a78"/>
<rect x="10.40" y="374.38" width="3.90" height="3.90" fill="#2b2540"/>
<rect x="14.28" y="374.38" width="7.77" height="3.90" fill="#cfe46e"/>
<rect x="22.02" y="374.38" width="3.90" height="3.90" fill="#8cc552"/>
<rect x="180.90" y="374.38" width="3.90" height="3.90" fill="#8cc552"/>
<rect x="184.78" y="374.38" width="7.77" height="3.90" fill="#cfe46e"/>
<rect x="192.53" y="374.38" width="3.90" height="3.90" fill="#2b2540"/>
<rect x="10.40" y="378.25" width="3.90" height="3.90" fill="#2b2540"/>
<rect x="14.28" y="378.25" width="7.77" height="3.90" fill="#8cc552"/>
<rect x="184.78" y="378.25" width="7.77" height="3.90" fill="#8cc552"/>
<rect x="192.53" y="378.25" width="3.90" height="3.90" fill="#2b2540"/>
<rect x="10.40" y="382.12" width="3.90" height="3.90" fill="#2b2540"/>
<rect x="14.28" y="382.12" width="3.90" height="3.90" fill="#3a4a78"/>
<rect x="18.15" y="382.12" width="3.90" height="3.90" fill="#2b2540"/>
<rect x="22.02" y="382.12" width="3.90" height="3.90" fill="#3a4a78"/>
<rect x="180.90" y="382.12" width="3.90" height="3.90" fill="#3a4a78"/>
<rect x="184.78" y="382.12" width="3.90" height="3.90" fill="#2b2540"/>
<rect x="188.65" y="382.12" width="3.90" height="3.90" fill="#3a4a78"/>
<rect x="192.53" y="382.12" width="3.90" height="3.90" fill="#2b2540"/>
<rect x="10.40" y="386.00" width="7.77" height="3.90" fill="#2b2540"/>
<rect x="18.15" y="386.00" width="7.77" height="3.90" fill="#8cc552"/>
<rect x="180.90" y="386.00" width="7.77" height="3.90" fill="#8cc552"/>
<rect x="188.65" y="386.00" width="7.77" height="3.90" fill="#2b2540"/>
<rect x="10.40" y="389.88" width="3.90" height="3.90" fill="#3a4a78"/>
<rect x="14.28" y="389.88" width="7.77" height="3.90" fill="#8cc552"/>
<rect x="22.02" y="389.88" width="3.90" height="3.90" fill="#cfe46e"/>
<rect x="25.90" y="389.88" width="3.90" height="3.90" fill="#8cc552"/>
<rect x="177.03" y="389.88" width="3.90" height="3.90" fill="#8cc552"/>
<rect x="180.90" y="389.88" width="3.90" height="3.90" fill="#cfe46e"/>
<rect x="184.78" y="389.88" width="7.77" height="3.90" fill="#8cc552"/>
<rect x="192.53" y="389.88" width="3.90" height="3.90" fill="#3a4a78"/>
<rect x="10.40" y="393.75" width="3.90" height="3.90" fill="#3a4a78"/>
<rect x="14.28" y="393.75" width="3.90" height="3.90" fill="#2b2540"/>
<rect x="18.15" y="393.75" width="3.90" height="3.90" fill="#3a4a78"/>
<rect x="184.78" y="393.75" width="3.90" height="3.90" fill="#3a4a78"/>
<rect x="188.65" y="393.75" width="3.90" height="3.90" fill="#2b2540"/>
<rect x="192.53" y="393.75" width="3.90" height="3.90" fill="#3a4a78"/>
<rect x="10.40" y="397.62" width="3.90" height="3.90" fill="#2b2540"/>
<rect x="14.28" y="397.62" width="3.90" height="3.90" fill="#8cc552"/>
<rect x="18.15" y="397.62" width="3.90" height="3.90" fill="#cfe46e"/>
<rect x="22.02" y="397.62" width="3.90" height="3.90" fill="#8cc552"/>
<rect x="180.90" y="397.62" width="3.90" height="3.90" fill="#8cc552"/>
<rect x="184.78" y="397.62" width="3.90" height="3.90" fill="#cfe46e"/>
<rect x="188.65" y="397.62" width="3.90" height="3.90" fill="#8cc552"/>
<rect x="192.53" y="397.62" width="3.90" height="3.90" fill="#2b2540"/>
<rect x="10.40" y="401.50" width="3.90" height="3.90" fill="#2b2540"/>
<rect x="14.28" y="401.50" width="3.90" height="3.90" fill="#8cc552"/>
<rect x="18.15" y="401.50" width="3.90" height="3.90" fill="#cfe46e"/>
<rect x="22.02" y="401.50" width="3.90" height="3.90" fill="#8cc552"/>
<rect x="180.90" y="401.50" width="3.90" height="3.90" fill="#8cc552"/>
<rect x="184.78" y="401.50" width="3.90" height="3.90" fill="#cfe46e"/>
<rect x="188.65" y="401.50" width="3.90" height="3.90" fill="#8cc552"/>
<rect x="192.53" y="401.50" width="3.90" height="3.90" fill="#2b2540"/>
<rect x="10.40" y="405.38" width="7.77" height="3.90" fill="#2b2540"/>
<rect x="18.15" y="405.38" width="7.77" height="3.90" fill="#3a4a78"/>
<rect x="180.90" y="405.38" width="7.77" height="3.90" fill="#3a4a78"/>
<rect x="188.65" y="405.38" width="7.77" height="3.90" fill="#2b2540"/>
<rect x="10.40" y="409.25" width="3.90" height="3.90" fill="#2b2540"/>
<rect x="14.28" y="409.25" width="11.64" height="3.90" fill="#8cc552"/>
<rect x="180.90" y="409.25" width="11.64" height="3.90" fill="#8cc552"/>
<rect x="192.53" y="409.25" width="3.90" height="3.90" fill="#2b2540"/>
<rect x="10.40" y="413.12" width="3.90" height="3.90" fill="#3a4a78"/>
<rect x="14.28" y="413.12" width="3.90" height="3.90" fill="#8cc552"/>
<rect x="18.15" y="413.12" width="7.77" height="3.90" fill="#cfe46e"/>
<rect x="25.90" y="413.12" width="3.90" height="3.90" fill="#8cc552"/>
<rect x="177.03" y="413.12" width="3.90" height="3.90" fill="#8cc552"/>
<rect x="180.90" y="413.12" width="7.77" height="3.90" fill="#cfe46e"/>
<rect x="188.65" y="413.12" width="3.90" height="3.90" fill="#8cc552"/>
<rect x="192.53" y="413.12" width="3.90" height="3.90" fill="#3a4a78"/>
<rect x="10.40" y="417.00" width="3.90" height="3.90" fill="#3a4a78"/>
<rect x="14.28" y="417.00" width="3.90" height="3.90" fill="#2b2540"/>
<rect x="18.15" y="417.00" width="3.90" height="3.90" fill="#3a4a78"/>
<rect x="184.78" y="417.00" width="3.90" height="3.90" fill="#3a4a78"/>
<rect x="188.65" y="417.00" width="3.90" height="3.90" fill="#2b2540"/>
<rect x="192.53" y="417.00" width="3.90" height="3.90" fill="#3a4a78"/>
<rect x="10.40" y="420.88" width="3.90" height="3.90" fill="#2b2540"/>
<rect x="14.28" y="420.88" width="3.90" height="3.90" fill="#8cc552"/>
<rect x="18.15" y="420.88" width="3.90" height="3.90" fill="#cfe46e"/>
<rect x="22.02" y="420.88" width="3.90" height="3.90" fill="#8cc552"/>
<rect x="180.90" y="420.88" width="3.90" height="3.90" fill="#8cc552"/>
<rect x="184.78" y="420.88" width="3.90" height="3.90" fill="#cfe46e"/>
<rect x="188.65" y="420.88" width="3.90" height="3.90" fill="#8cc552"/>
<rect x="192.53" y="420.88" width="3.90" height="3.90" fill="#2b2540"/>
<rect x="10.40" y="424.75" width="3.90" height="3.90" fill="#2b2540"/>
<rect x="14.28" y="424.75" width="7.77" height="3.90" fill="#8cc552"/>
<rect x="184.78" y="424.75" width="7.77" height="3.90" fill="#8cc552"/>
<rect x="192.53" y="424.75" width="3.90" height="3.90" fill="#2b2540"/>
<rect x="10.40" y="428.62" width="7.77" height="3.90" fill="#3a4a78"/>
<rect x="18.15" y="428.62" width="3.90" height="3.90" fill="#cfe46e"/>
<rect x="22.02" y="428.62" width="3.90" height="3.90" fill="#8cc552"/>
<rect x="180.90" y="428.62" width="3.90" height="3.90" fill="#8cc552"/>
<rect x="184.78" y="428.62" width="3.90" height="3.90" fill="#cfe46e"/>
<rect x="188.65" y="428.62" width="7.77" height="3.90" fill="#3a4a78"/>
<rect x="10.40" y="432.50" width="3.90" height="3.90" fill="#3a4a78"/>
<rect x="14.28" y="432.50" width="3.90" height="3.90" fill="#2b2540"/>
<rect x="18.15" y="432.50" width="3.90" height="3.90" fill="#3a4a78"/>
<rect x="184.78" y="432.50" width="3.90" height="3.90" fill="#3a4a78"/>
<rect x="188.65" y="432.50" width="3.90" height="3.90" fill="#2b2540"/>
<rect x="192.53" y="432.50" width="3.90" height="3.90" fill="#3a4a78"/>
<rect x="10.40" y="436.38" width="3.90" height="3.90" fill="#2b2540"/>
<rect x="14.28" y="436.38" width="7.77" height="3.90" fill="#cfe46e"/>
<rect x="22.02" y="436.38" width="3.90" height="3.90" fill="#8cc552"/>
<rect x="180.90" y="436.38" width="3.90" height="3.90" fill="#8cc552"/>
<rect x="184.78" y="436.38" width="7.77" height="3.90" fill="#cfe46e"/>
<rect x="192.53" y="436.38" width="3.90" height="3.90" fill="#2b2540"/>
<rect x="10.40" y="440.25" width="3.90" height="3.90" fill="#2b2540"/>
<rect x="14.28" y="440.25" width="7.77" height="3.90" fill="#8cc552"/>
<rect x="184.78" y="440.25" width="7.77" height="3.90" fill="#8cc552"/>
<rect x="192.53" y="440.25" width="3.90" height="3.90" fill="#2b2540"/>
<rect x="10.40" y="444.12" width="3.90" height="3.90" fill="#2b2540"/>
<rect x="14.28" y="444.12" width="3.90" height="3.90" fill="#3a4a78"/>
<rect x="18.15" y="444.12" width="3.90" height="3.90" fill="#2b2540"/>
<rect x="22.02" y="444.12" width="3.90" height="3.90" fill="#3a4a78"/>
<rect x="180.90" y="444.12" width="3.90" height="3.90" fill="#3a4a78"/>
<rect x="184.78" y="444.12" width="3.90" height="3.90" fill="#2b2540"/>
<rect x="188.65" y="444.12" width="3.90" height="3.90" fill="#3a4a78"/>
<rect x="192.53" y="444.12" width="3.90" height="3.90" fill="#2b2540"/>
<rect x="10.40" y="448.00" width="7.77" height="3.90" fill="#2b2540"/>
<rect x="18.15" y="448.00" width="7.77" height="3.90" fill="#8cc552"/>
<rect x="180.90" y="448.00" width="7.77" height="3.90" fill="#8cc552"/>
<rect x="188.65" y="448.00" width="7.77" height="3.90" fill="#2b2540"/>
<rect x="10.40" y="451.88" width="3.90" height="3.90" fill="#3a4a78"/>
<rect x="14.28" y="451.88" width="7.77" height="3.90" fill="#8cc552"/>
<rect x="22.02" y="451.88" width="3.90" height="3.90" fill="#cfe46e"/>
<rect x="25.90" y="451.88" width="3.90" height="3.90" fill="#8cc552"/>
<rect x="177.03" y="451.88" width="3.90" height="3.90" fill="#8cc552"/>
<rect x="180.90" y="451.88" width="3.90" height="3.90" fill="#cfe46e"/>
<rect x="184.78" y="451.88" width="7.77" height="3.90" fill="#8cc552"/>
<rect x="192.53" y="451.88" width="3.90" height="3.90" fill="#3a4a78"/>
<rect x="10.40" y="455.75" width="3.90" height="3.90" fill="#3a4a78"/>
<rect x="14.28" y="455.75" width="3.90" height="3.90" fill="#2b2540"/>
<rect x="18.15" y="455.75" width="3.90" height="3.90" fill="#3a4a78"/>
<rect x="184.78" y="455.75" width="3.90" height="3.90" fill="#3a4a78"/>
<rect x="188.65" y="455.75" width="3.90" height="3.90" fill="#2b2540"/>
<rect x="192.53" y="455.75" width="3.90" height="3.90" fill="#3a4a78"/>
<rect x="10.40" y="459.62" width="3.90" height="3.90" fill="#2b2540"/>
<rect x="14.28" y="459.62" width="3.90" height="3.90" fill="#8cc552"/>
<rect x="18.15" y="459.62" width="3.90" height="3.90" fill="#cfe46e"/>
<rect x="22.02" y="459.62" width="3.90" height="3.90" fill="#8cc552"/>
<rect x="180.90" y="459.62" width="3.90" height="3.90" fill="#8cc552"/>
<rect x="184.78" y="459.62" width="3.90" height="3.90" fill="#cfe46e"/>
<rect x="188.65" y="459.62" width="3.90" height="3.90" fill="#8cc552"/>
<rect x="192.53" y="459.62" width="3.90" height="3.90" fill="#2b2540"/>
<rect x="10.40" y="463.50" width="3.90" height="3.90" fill="#2b2540"/>
<rect x="14.28" y="463.50" width="3.90" height="3.90" fill="#8cc552"/>
<rect x="18.15" y="463.50" width="3.90" height="3.90" fill="#cfe46e"/>
<rect x="22.02" y="463.50" width="3.90" height="3.90" fill="#8cc552"/>
<rect x="60.77" y="463.50" width="3.90" height="3.90" fill="#3a4a78"/>
<rect x="64.65" y="463.50" width="7.77" height="3.90" fill="#2b2540"/>
<rect x="134.40" y="463.50" width="7.77" height="3.90" fill="#2b2540"/>
<rect x="142.15" y="463.50" width="3.90" height="3.90" fill="#3a4a78"/>
<rect x="180.90" y="463.50" width="3.90" height="3.90" fill="#8cc552"/>
<rect x="184.78" y="463.50" width="3.90" height="3.90" fill="#cfe46e"/>
<rect x="188.65" y="463.50" width="3.90" height="3.90" fill="#8cc552"/>
<rect x="192.53" y="463.50" width="3.90" height="3.90" fill="#2b2540"/>
<rect x="10.40" y="467.38" width="7.77" height="3.90" fill="#2b2540"/>
<rect x="18.15" y="467.38" width="7.77" height="3.90" fill="#3a4a78"/>
<rect x="56.90" y="467.38" width="3.90" height="3.90" fill="#8cc552"/>
<rect x="60.77" y="467.38" width="3.90" height="3.90" fill="#cfe46e"/>
<rect x="64.65" y="467.38" width="3.90" height="3.90" fill="#3a4a78"/>
<rect x="68.53" y="467.38" width="3.90" height="3.90" fill="#cfe46e"/>
<rect x="134.40" y="467.38" width="3.90" height="3.90" fill="#cfe46e"/>
<rect x="138.28" y="467.38" width="3.90" height="3.90" fill="#3a4a78"/>
<rect x="142.15" y="467.38" width="3.90" height="3.90" fill="#cfe46e"/>
<rect x="146.03" y="467.38" width="3.90" height="3.90" fill="#8cc552"/>
<rect x="180.90" y="467.38" width="7.77" height="3.90" fill="#3a4a78"/>
<rect x="188.65" y="467.38" width="7.77" height="3.90" fill="#2b2540"/>
<rect x="10.40" y="471.25" width="3.90" height="3.90" fill="#2b2540"/>
<rect x="14.28" y="471.25" width="11.64" height="3.90" fill="#8cc552"/>
<rect x="53.02" y="471.25" width="3.90" height="3.90" fill="#8cc552"/>
<rect x="56.90" y="471.25" width="3.90" height="3.90" fill="#cfe46e"/>
<rect x="60.77" y="471.25" width="3.90" height="3.90" fill="#8cc552"/>
<rect x="68.53" y="471.25" width="3.90" height="3.90" fill="#8cc552"/>
<rect x="134.40" y="471.25" width="3.90" height="3.90" fill="#8cc552"/>
<rect x="142.15" y="471.25" width="3.90" height="3.90" fill="#8cc552"/>
<rect x="146.03" y="471.25" width="3.90" height="3.90" fill="#cfe46e"/>
<rect x="149.90" y="471.25" width="3.90" height="3.90" fill="#8cc552"/>
<rect x="180.90" y="471.25" width="11.64" height="3.90" fill="#8cc552"/>
<rect x="192.53" y="471.25" width="3.90" height="3.90" fill="#2b2540"/>
<rect x="10.40" y="475.12" width="3.90" height="3.90" fill="#3a4a78"/>
<rect x="14.28" y="475.12" width="3.90" height="3.90" fill="#8cc552"/>
<rect x="18.15" y="475.12" width="7.77" height="3.90" fill="#cfe46e"/>
<rect x="25.90" y="475.12" width="3.90" height="3.90" fill="#8cc552"/>
<rect x="56.90" y="475.12" width="7.77" height="3.90" fill="#8cc552"/>
<rect x="142.15" y="475.12" width="7.77" height="3.90" fill="#8cc552"/>
<rect x="177.03" y="475.12" width="3.90" height="3.90" fill="#8cc552"/>
<rect x="180.90" y="475.12" width="7.77" height="3.90" fill="#cfe46e"/>
<rect x="188.65" y="475.12" width="3.90" height="3.90" fill="#8cc552"/>
<rect x="192.53" y="475.12" width="3.90" height="3.90" fill="#3a4a78"/>
<rect x="10.40" y="479.00" width="3.90" height="3.90" fill="#3a4a78"/>
<rect x="14.28" y="479.00" width="3.90" height="3.90" fill="#2b2540"/>
<rect x="18.15" y="479.00" width="3.90" height="3.90" fill="#3a4a78"/>
<rect x="184.78" y="479.00" width="3.90" height="3.90" fill="#3a4a78"/>
<rect x="188.65" y="479.00" width="3.90" height="3.90" fill="#2b2540"/>
<rect x="192.53" y="479.00" width="3.90" height="3.90" fill="#3a4a78"/>
<rect x="10.40" y="482.88" width="3.90" height="3.90" fill="#2b2540"/>
<rect x="14.28" y="482.88" width="3.90" height="3.90" fill="#8cc552"/>
<rect x="18.15" y="482.88" width="3.90" height="3.90" fill="#cfe46e"/>
<rect x="22.02" y="482.88" width="3.90" height="3.90" fill="#8cc552"/>
<rect x="180.90" y="482.88" width="3.90" height="3.90" fill="#8cc552"/>
<rect x="184.78" y="482.88" width="3.90" height="3.90" fill="#cfe46e"/>
<rect x="188.65" y="482.88" width="3.90" height="3.90" fill="#8cc552"/>
<rect x="192.53" y="482.88" width="3.90" height="3.90" fill="#2b2540"/>
<rect x="10.40" y="486.75" width="3.90" height="3.90" fill="#2b2540"/>
<rect x="14.28" y="486.75" width="7.77" height="3.90" fill="#8cc552"/>
<rect x="184.78" y="486.75" width="7.77" height="3.90" fill="#8cc552"/>
<rect x="192.53" y="486.75" width="3.90" height="3.90" fill="#2b2540"/>
<rect x="10.40" y="490.62" width="7.77" height="3.90" fill="#3a4a78"/>
<rect x="18.15" y="490.62" width="3.90" height="3.90" fill="#cfe46e"/>
<rect x="22.02" y="490.62" width="3.90" height="3.90" fill="#8cc552"/>
<rect x="180.90" y="490.62" width="3.90" height="3.90" fill="#8cc552"/>
<rect x="184.78" y="490.62" width="3.90" height="3.90" fill="#cfe46e"/>
<rect x="188.65" y="490.62" width="7.77" height="3.90" fill="#3a4a78"/>
<rect x="10.40" y="494.50" width="3.90" height="3.90" fill="#2b2540"/>
<rect x="14.28" y="494.50" width="3.90" height="3.90" fill="#3a4a78"/>
<rect x="18.15" y="494.50" width="3.90" height="3.90" fill="#2b2540"/>
<rect x="76.28" y="494.50" width="3.90" height="3.90" fill="#8cc552"/>
<rect x="99.53" y="494.50" width="3.90" height="3.90" fill="#8cc552"/>
<rect x="122.78" y="494.50" width="3.90" height="3.90" fill="#8cc552"/>
<rect x="180.90" y="494.50" width="3.90" height="3.90" fill="#8cc552"/>
<rect x="184.78" y="494.50" width="3.90" height="3.90" fill="#cfe46e"/>
<rect x="188.65" y="494.50" width="3.90" height="3.90" fill="#3a4a78"/>
<rect x="192.53" y="494.50" width="3.90" height="3.90" fill="#2b2540"/>
<rect x="10.40" y="498.38" width="3.90" height="3.90" fill="#2b2540"/>
<rect x="14.28" y="498.38" width="7.77" height="3.90" fill="#cfe46e"/>
<rect x="22.02" y="498.38" width="3.90" height="3.90" fill="#8cc552"/>
<rect x="37.52" y="498.38" width="7.77" height="3.90" fill="#8cc552"/>
<rect x="53.02" y="498.38" width="3.90" height="3.90" fill="#8cc552"/>
<rect x="68.53" y="498.38" width="11.64" height="3.90" fill="#8cc552"/>
<rect x="87.90" y="498.38" width="3.90" height="3.90" fill="#8cc552"/>
<rect x="95.65" y="498.38" width="3.90" height="3.90" fill="#cfe46e"/>
<rect x="99.53" y="498.38" width="3.90" height="3.90" fill="#8cc552"/>
<rect x="122.78" y="498.38" width="3.90" height="3.90" fill="#8cc552"/>
<rect x="134.40" y="498.38" width="3.90" height="3.90" fill="#8cc552"/>
<rect x="149.90" y="498.38" width="3.90" height="3.90" fill="#8cc552"/>
<rect x="161.53" y="498.38" width="7.77" height="3.90" fill="#8cc552"/>
<rect x="180.90" y="498.38" width="3.90" height="3.90" fill="#8cc552"/>
<rect x="184.78" y="498.38" width="7.77" height="3.90" fill="#cfe46e"/>
<rect x="192.53" y="498.38" width="3.90" height="3.90" fill="#2b2540"/>
<rect x="10.40" y="502.25" width="3.90" height="3.90" fill="#2b2540"/>
<rect x="14.28" y="502.25" width="3.90" height="3.90" fill="#8cc552"/>
<rect x="18.15" y="502.25" width="3.90" height="3.90" fill="#cfe46e"/>
<rect x="25.90" y="502.25" width="7.77" height="3.90" fill="#8cc552"/>
<rect x="37.52" y="502.25" width="7.77" height="3.90" fill="#cfe46e"/>
<rect x="45.27" y="502.25" width="3.90" height="3.90" fill="#8cc552"/>
<rect x="53.02" y="502.25" width="3.90" height="3.90" fill="#cfe46e"/>
<rect x="56.90" y="502.25" width="3.90" height="3.90" fill="#8cc552"/>
<rect x="64.65" y="502.25" width="3.90" height="3.90" fill="#cfe46e"/>
<rect x="68.53" y="502.25" width="7.77" height="3.90" fill="#8cc552"/>
<rect x="76.28" y="502.25" width="3.90" height="3.90" fill="#cfe46e"/>
<rect x="84.03" y="502.25" width="3.90" height="3.90" fill="#8cc552"/>
<rect x="87.90" y="502.25" width="3.90" height="3.90" fill="#cfe46e"/>
<rect x="95.65" y="502.25" width="3.90" height="3.90" fill="#cfe46e"/>
<rect x="99.53" y="502.25" width="3.90" height="3.90" fill="#8cc552"/>
<rect x="107.28" y="502.25" width="3.90" height="3.90" fill="#8cc552"/>
<rect x="118.90" y="502.25" width="7.77" height="3.90" fill="#8cc552"/>
<rect x="126.65" y="502.25" width="3.90" height="3.90" fill="#cfe46e"/>
<rect x="134.40" y="502.25" width="3.90" height="3.90" fill="#8cc552"/>
<rect x="138.28" y="502.25" width="3.90" height="3.90" fill="#cfe46e"/>
<rect x="146.03" y="502.25" width="3.90" height="3.90" fill="#8cc552"/>
<rect x="149.90" y="502.25" width="3.90" height="3.90" fill="#cfe46e"/>
<rect x="157.65" y="502.25" width="3.90" height="3.90" fill="#8cc552"/>
<rect x="161.53" y="502.25" width="7.77" height="3.90" fill="#cfe46e"/>
<rect x="173.15" y="502.25" width="7.77" height="3.90" fill="#8cc552"/>
<rect x="184.78" y="502.25" width="7.77" height="3.90" fill="#8cc552"/>
<rect x="192.53" y="502.25" width="3.90" height="3.90" fill="#2b2540"/>
<rect x="10.40" y="506.12" width="7.77" height="3.90" fill="#3a4a78"/>
<rect x="18.15" y="506.12" width="3.90" height="3.90" fill="#2b2540"/>
<rect x="22.02" y="506.12" width="3.90" height="3.90" fill="#3a4a78"/>
<rect x="25.90" y="506.12" width="7.77" height="3.90" fill="#cfe46e"/>
<rect x="33.65" y="506.12" width="3.90" height="3.90" fill="#3a4a78"/>
<rect x="37.52" y="506.12" width="3.90" height="3.90" fill="#8cc552"/>
<rect x="45.27" y="506.12" width="3.90" height="3.90" fill="#8cc552"/>
<rect x="49.15" y="506.12" width="3.90" height="3.90" fill="#3a4a78"/>
<rect x="53.02" y="506.12" width="7.77" height="3.90" fill="#cfe46e"/>
<rect x="60.77" y="506.12" width="3.90" height="3.90" fill="#3a4a78"/>
<rect x="64.65" y="506.12" width="3.90" height="3.90" fill="#8cc552"/>
<rect x="80.15" y="506.12" width="3.90" height="3.90" fill="#3a4a78"/>
<rect x="84.03" y="506.12" width="3.90" height="3.90" fill="#8cc552"/>
<rect x="91.78" y="506.12" width="3.90" height="3.90" fill="#3a4a78"/>
<rect x="103.40" y="506.12" width="3.90" height="3.90" fill="#3a4a78"/>
<rect x="107.28" y="506.12" width="3.90" height="3.90" fill="#8cc552"/>
<rect x="111.15" y="506.12" width="3.90" height="3.90" fill="#cfe46e"/>
<rect x="115.03" y="506.12" width="3.90" height="3.90" fill="#3a4a78"/>
<rect x="122.78" y="506.12" width="3.90" height="3.90" fill="#cfe46e"/>
<rect x="130.53" y="506.12" width="3.90" height="3.90" fill="#3a4a78"/>
<rect x="138.28" y="506.12" width="3.90" height="3.90" fill="#8cc552"/>
<rect x="142.15" y="506.12" width="3.90" height="3.90" fill="#3a4a78"/>
<rect x="146.03" y="506.12" width="7.77" height="3.90" fill="#cfe46e"/>
<rect x="153.78" y="506.12" width="3.90" height="3.90" fill="#3a4a78"/>
<rect x="157.65" y="506.12" width="3.90" height="3.90" fill="#8cc552"/>
<rect x="165.40" y="506.12" width="3.90" height="3.90" fill="#8cc552"/>
<rect x="169.28" y="506.12" width="3.90" height="3.90" fill="#3a4a78"/>
<rect x="173.15" y="506.12" width="7.77" height="3.90" fill="#cfe46e"/>
<rect x="180.90" y="506.12" width="3.90" height="3.90" fill="#3a4a78"/>
<rect x="184.78" y="506.12" width="3.90" height="3.90" fill="#2b2540"/>
<rect x="188.65" y="506.12" width="3.90" height="3.90" fill="#3a4a78"/>
<rect x="192.53" y="506.12" width="3.90" height="3.90" fill="#2b2540"/>
<rect x="10.40" y="510.00" width="7.77" height="3.90" fill="#2b2540"/>
<rect x="18.15" y="510.00" width="7.77" height="3.90" fill="#8cc552"/>
<rect x="29.77" y="510.00" width="3.90" height="3.90" fill="#8cc552"/>
<rect x="33.65" y="510.00" width="3.90" height="3.90" fill="#3a4a78"/>
<rect x="49.15" y="510.00" width="3.90" height="3.90" fill="#3a4a78"/>
<rect x="56.90" y="510.00" width="3.90" height="3.90" fill="#8cc552"/>
<rect x="60.77" y="510.00" width="3.90" height="3.90" fill="#3a4a78"/>
<rect x="80.15" y="510.00" width="3.90" height="3.90" fill="#2b2540"/>
<rect x="91.78" y="510.00" width="3.90" height="3.90" fill="#3a4a78"/>
<rect x="95.65" y="510.00" width="7.77" height="3.90" fill="#2b2540"/>
<rect x="103.40" y="510.00" width="3.90" height="3.90" fill="#3a4a78"/>
<rect x="115.03" y="510.00" width="3.90" height="3.90" fill="#2b2540"/>
<rect x="130.53" y="510.00" width="3.90" height="3.90" fill="#2b2540"/>
<rect x="142.15" y="510.00" width="3.90" height="3.90" fill="#3a4a78"/>
<rect x="146.03" y="510.00" width="3.90" height="3.90" fill="#8cc552"/>
<rect x="153.78" y="510.00" width="3.90" height="3.90" fill="#3a4a78"/>
<rect x="169.28" y="510.00" width="3.90" height="3.90" fill="#3a4a78"/>
<rect x="173.15" y="510.00" width="3.90" height="3.90" fill="#8cc552"/>
<rect x="180.90" y="510.00" width="7.77" height="3.90" fill="#8cc552"/>
<rect x="188.65" y="510.00" width="7.77" height="3.90" fill="#2b2540"/>
<rect x="10.40" y="513.88" width="3.90" height="3.90" fill="#2b2540"/>
<rect x="14.28" y="513.88" width="3.90" height="3.90" fill="#3a4a78"/>
<rect x="18.15" y="513.88" width="7.77" height="3.90" fill="#cfe46e"/>
<rect x="25.90" y="513.88" width="3.90" height="3.90" fill="#3a4a78"/>
<rect x="33.65" y="513.88" width="3.90" height="3.90" fill="#2b2540"/>
<rect x="37.52" y="513.88" width="7.77" height="3.90" fill="#3a4a78"/>
<rect x="45.27" y="513.88" width="7.77" height="3.90" fill="#2b2540"/>
<rect x="60.77" y="513.88" width="7.77" height="3.90" fill="#2b2540"/>
<rect x="68.53" y="513.88" width="7.77" height="3.90" fill="#3a4a78"/>
<rect x="76.28" y="513.88" width="7.77" height="3.90" fill="#2b2540"/>
<rect x="91.78" y="513.88" width="7.77" height="3.90" fill="#2b2540"/>
<rect x="99.53" y="513.88" width="3.90" height="3.90" fill="#3a4a78"/>
<rect x="103.40" y="513.88" width="3.90" height="3.90" fill="#2b2540"/>
<rect x="115.03" y="513.88" width="15.52" height="3.90" fill="#2b2540"/>
<rect x="130.53" y="513.88" width="7.77" height="3.90" fill="#3a4a78"/>
<rect x="138.28" y="513.88" width="7.77" height="3.90" fill="#2b2540"/>
<rect x="153.78" y="513.88" width="7.77" height="3.90" fill="#2b2540"/>
<rect x="161.53" y="513.88" width="7.77" height="3.90" fill="#3a4a78"/>
<rect x="169.28" y="513.88" width="3.90" height="3.90" fill="#2b2540"/>
<rect x="177.03" y="513.88" width="3.90" height="3.90" fill="#3a4a78"/>
<rect x="180.90" y="513.88" width="7.77" height="3.90" fill="#cfe46e"/>
<rect x="188.65" y="513.88" width="3.90" height="3.90" fill="#3a4a78"/>
<rect x="192.53" y="513.88" width="3.90" height="3.90" fill="#2b2540"/>
<rect x="10.40" y="517.75" width="7.77" height="3.90" fill="#2b2540"/>
<rect x="18.15" y="517.75" width="3.90" height="3.90" fill="#3a4a78"/>
<rect x="25.90" y="517.75" width="3.90" height="3.90" fill="#3a4a78"/>
<rect x="29.77" y="517.75" width="11.64" height="3.90" fill="#2b2540"/>
<rect x="41.40" y="517.75" width="7.77" height="3.90" fill="#3a4a78"/>
<rect x="49.15" y="517.75" width="3.90" height="3.90" fill="#2b2540"/>
<rect x="60.77" y="517.75" width="3.90" height="3.90" fill="#2b2540"/>
<rect x="64.65" y="517.75" width="19.39" height="3.90" fill="#3a4a78"/>
<rect x="84.03" y="517.75" width="15.52" height="3.90" fill="#2b2540"/>
<rect x="99.53" y="517.75" width="7.77" height="3.90" fill="#3a4a78"/>
<rect x="107.28" y="517.75" width="3.90" height="3.90" fill="#2b2540"/>
<rect x="111.15" y="517.75" width="31.02" height="3.90" fill="#3a4a78"/>
<rect x="142.15" y="517.75" width="3.90" height="3.90" fill="#2b2540"/>
<rect x="153.78" y="517.75" width="3.90" height="3.90" fill="#2b2540"/>
<rect x="157.65" y="517.75" width="7.77" height="3.90" fill="#3a4a78"/>
<rect x="165.40" y="517.75" width="11.64" height="3.90" fill="#2b2540"/>
<rect x="177.03" y="517.75" width="3.90" height="3.90" fill="#3a4a78"/>
<rect x="184.78" y="517.75" width="3.90" height="3.90" fill="#3a4a78"/>
<rect x="188.65" y="517.75" width="7.77" height="3.90" fill="#2b2540"/>
<rect x="10.40" y="521.62" width="19.39" height="3.90" fill="#2b2540"/>
<rect x="29.77" y="521.62" width="7.77" height="3.90" fill="#7ea6d6"/>
<rect x="37.52" y="521.62" width="3.90" height="3.90" fill="#2b2540"/>
<rect x="41.40" y="521.62" width="7.77" height="3.90" fill="#7ea6d6"/>
<rect x="49.15" y="521.62" width="3.90" height="3.90" fill="#3a4a78"/>
<rect x="53.02" y="521.62" width="3.90" height="3.90" fill="#2b2540"/>
<rect x="56.90" y="521.62" width="7.77" height="3.90" fill="#3a4a78"/>
<rect x="64.65" y="521.62" width="7.77" height="3.90" fill="#7ea6d6"/>
<rect x="72.40" y="521.62" width="3.90" height="3.90" fill="#3a4a78"/>
<rect x="76.28" y="521.62" width="15.52" height="3.90" fill="#7ea6d6"/>
<rect x="91.78" y="521.62" width="3.90" height="3.90" fill="#3a4a78"/>
<rect x="95.65" y="521.62" width="7.77" height="3.90" fill="#7ea6d6"/>
<rect x="103.40" y="521.62" width="7.77" height="3.90" fill="#2b2540"/>
<rect x="111.15" y="521.62" width="19.39" height="3.90" fill="#7ea6d6"/>
<rect x="130.53" y="521.62" width="3.90" height="3.90" fill="#3a4a78"/>
<rect x="134.40" y="521.62" width="7.77" height="3.90" fill="#7ea6d6"/>
<rect x="142.15" y="521.62" width="7.77" height="3.90" fill="#3a4a78"/>
<rect x="149.90" y="521.62" width="3.90" height="3.90" fill="#2b2540"/>
<rect x="153.78" y="521.62" width="3.90" height="3.90" fill="#3a4a78"/>
<rect x="157.65" y="521.62" width="7.77" height="3.90" fill="#7ea6d6"/>
<rect x="165.40" y="521.62" width="3.90" height="3.90" fill="#2b2540"/>
<rect x="169.28" y="521.62" width="7.77" height="3.90" fill="#7ea6d6"/>
<rect x="177.03" y="521.62" width="19.39" height="3.90" fill="#2b2540"/>
<rect x="382.40" y="91.50" width="3.90" height="3.90" fill="#2b2540"/>
<rect x="386.27" y="91.50" width="11.64" height="3.90" fill="#3a4a78"/>
<rect x="397.90" y="91.50" width="3.90" height="3.90" fill="#2b2540"/>
<rect x="401.77" y="91.50" width="7.77" height="3.90" fill="#47434f"/>
<rect x="409.52" y="91.50" width="3.90" height="3.90" fill="#2b2540"/>
<rect x="413.40" y="91.50" width="7.77" height="3.90" fill="#3a4a78"/>
<rect x="421.15" y="91.50" width="3.90" height="3.90" fill="#2b2540"/>
<rect x="425.02" y="91.50" width="7.77" height="3.90" fill="#47434f"/>
<rect x="432.77" y="91.50" width="3.90" height="3.90" fill="#2b2540"/>
<rect x="436.65" y="91.50" width="15.52" height="3.90" fill="#3a4a78"/>
<rect x="452.15" y="91.50" width="3.90" height="3.90" fill="#2b2540"/>
<rect x="456.02" y="91.50" width="7.77" height="3.90" fill="#47434f"/>
<rect x="463.77" y="91.50" width="3.90" height="3.90" fill="#2b2540"/>
<rect x="467.65" y="91.50" width="7.77" height="3.90" fill="#3a4a78"/>
<rect x="475.40" y="91.50" width="3.90" height="3.90" fill="#2b2540"/>
<rect x="479.27" y="91.50" width="7.77" height="3.90" fill="#47434f"/>
<rect x="487.02" y="91.50" width="3.90" height="3.90" fill="#2b2540"/>
<rect x="490.90" y="91.50" width="7.77" height="3.90" fill="#3a4a78"/>
<rect x="498.65" y="91.50" width="3.90" height="3.90" fill="#2b2540"/>
<rect x="502.52" y="91.50" width="11.64" height="3.90" fill="#3a4a78"/>
<rect x="514.15" y="91.50" width="3.90" height="3.90" fill="#2b2540"/>
<rect x="518.02" y="91.50" width="7.77" height="3.90" fill="#47434f"/>
<rect x="525.77" y="91.50" width="3.90" height="3.90" fill="#2b2540"/>
<rect x="529.65" y="91.50" width="7.77" height="3.90" fill="#3a4a78"/>
<rect x="537.40" y="91.50" width="3.90" height="3.90" fill="#2b2540"/>
<rect x="541.27" y="91.50" width="7.77" height="3.90" fill="#47434f"/>
<rect x="549.02" y="91.50" width="3.90" height="3.90" fill="#2b2540"/>
<rect x="552.90" y="91.50" width="7.77" height="3.90" fill="#3a4a78"/>
<rect x="560.65" y="91.50" width="7.77" height="3.90" fill="#2b2540"/>
<rect x="382.40" y="95.38" width="3.90" height="3.90" fill="#2b2540"/>
<rect x="386.27" y="95.38" width="3.90" height="3.90" fill="#3a4a78"/>
<rect x="390.15" y="95.38" width="7.77" height="3.90" fill="#8cc552"/>
<rect x="397.90" y="95.38" width="15.52" height="3.90" fill="#3a4a78"/>
<rect x="413.40" y="95.38" width="7.77" height="3.90" fill="#8cc552"/>
<rect x="421.15" y="95.38" width="15.52" height="3.90" fill="#3a4a78"/>
<rect x="436.65" y="95.38" width="15.52" height="3.90" fill="#8cc552"/>
<rect x="452.15" y="95.38" width="15.52" height="3.90" fill="#3a4a78"/>
<rect x="467.65" y="95.38" width="7.77" height="3.90" fill="#8cc552"/>
<rect x="475.40" y="95.38" width="15.52" height="3.90" fill="#3a4a78"/>
<rect x="490.90" y="95.38" width="7.77" height="3.90" fill="#8cc552"/>
<rect x="498.65" y="95.38" width="3.90" height="3.90" fill="#3a4a78"/>
<rect x="502.52" y="95.38" width="11.64" height="3.90" fill="#8cc552"/>
<rect x="514.15" y="95.38" width="15.52" height="3.90" fill="#3a4a78"/>
<rect x="529.65" y="95.38" width="7.77" height="3.90" fill="#8cc552"/>
<rect x="537.40" y="95.38" width="15.52" height="3.90" fill="#3a4a78"/>
<rect x="552.90" y="95.38" width="7.77" height="3.90" fill="#8cc552"/>
<rect x="560.65" y="95.38" width="3.90" height="3.90" fill="#3a4a78"/>
<rect x="564.52" y="95.38" width="3.90" height="3.90" fill="#2b2540"/>
<rect x="382.40" y="99.25" width="3.90" height="3.90" fill="#2b2540"/>
<rect x="386.27" y="99.25" width="3.90" height="3.90" fill="#3a4a78"/>
<rect x="390.15" y="99.25" width="3.90" height="3.90" fill="#cfe46e"/>
<rect x="394.02" y="99.25" width="3.90" height="3.90" fill="#8cc552"/>
<rect x="397.90" y="99.25" width="3.90" height="3.90" fill="#3a4a78"/>
<rect x="401.77" y="99.25" width="7.77" height="3.90" fill="#8cc552"/>
<rect x="409.52" y="99.25" width="3.90" height="3.90" fill="#3a4a78"/>
<rect x="413.40" y="99.25" width="3.90" height="3.90" fill="#8cc552"/>
<rect x="417.27" y="99.25" width="3.90" height="3.90" fill="#cfe46e"/>
<rect x="421.15" y="99.25" width="3.90" height="3.90" fill="#3a4a78"/>
<rect x="425.02" y="99.25" width="3.90" height="3.90" fill="#cfe46e"/>
<rect x="428.90" y="99.25" width="3.90" height="3.90" fill="#8cc552"/>
<rect x="432.77" y="99.25" width="3.90" height="3.90" fill="#3a4a78"/>
<rect x="436.65" y="99.25" width="3.90" height="3.90" fill="#8cc552"/>
<rect x="440.52" y="99.25" width="7.77" height="3.90" fill="#cfe46e"/>
<rect x="448.27" y="99.25" width="3.90" height="3.90" fill="#8cc552"/>
<rect x="452.15" y="99.25" width="3.90" height="3.90" fill="#3a4a78"/>
<rect x="456.02" y="99.25" width="3.90" height="3.90" fill="#8cc552"/>
<rect x="459.90" y="99.25" width="3.90" height="3.90" fill="#cfe46e"/>
<rect x="463.77" y="99.25" width="3.90" height="3.90" fill="#3a4a78"/>
<rect x="467.65" y="99.25" width="3.90" height="3.90" fill="#cfe46e"/>
<rect x="471.52" y="99.25" width="3.90" height="3.90" fill="#8cc552"/>
<rect x="475.40" y="99.25" width="3.90" height="3.90" fill="#3a4a78"/>
<rect x="479.27" y="99.25" width="7.77" height="3.90" fill="#8cc552"/>
<rect x="487.02" y="99.25" width="3.90" height="3.90" fill="#3a4a78"/>
<rect x="490.90" y="99.25" width="3.90" height="3.90" fill="#8cc552"/>
<rect x="494.77" y="99.25" width="3.90" height="3.90" fill="#cfe46e"/>
<rect x="498.65" y="99.25" width="3.90" height="3.90" fill="#3a4a78"/>
<rect x="502.52" y="99.25" width="3.90" height="3.90" fill="#8cc552"/>
<rect x="506.40" y="99.25" width="3.90" height="3.90" fill="#cfe46e"/>
<rect x="510.27" y="99.25" width="3.90" height="3.90" fill="#8cc552"/>
<rect x="514.15" y="99.25" width="3.90" height="3.90" fill="#3a4a78"/>
<rect x="518.02" y="99.25" width="3.90" height="3.90" fill="#8cc552"/>
<rect x="521.90" y="99.25" width="3.90" height="3.90" fill="#cfe46e"/>
<rect x="525.77" y="99.25" width="3.90" height="3.90" fill="#3a4a78"/>
<rect x="529.65" y="99.25" width="3.90" height="3.90" fill="#cfe46e"/>
<rect x="533.52" y="99.25" width="3.90" height="3.90" fill="#8cc552"/>
<rect x="537.40" y="99.25" width="3.90" height="3.90" fill="#3a4a78"/>
<rect x="541.27" y="99.25" width="7.77" height="3.90" fill="#8cc552"/>
<rect x="549.02" y="99.25" width="3.90" height="3.90" fill="#3a4a78"/>
<rect x="552.90" y="99.25" width="3.90" height="3.90" fill="#8cc552"/>
<rect x="556.77" y="99.25" width="3.90" height="3.90" fill="#cfe46e"/>
<rect x="560.65" y="99.25" width="3.90" height="3.90" fill="#3a4a78"/>
<rect x="564.52" y="99.25" width="3.90" height="3.90" fill="#2b2540"/>
<rect x="382.40" y="103.12" width="3.90" height="3.90" fill="#2b2540"/>
<rect x="390.15" y="103.12" width="3.90" height="3.90" fill="#8cc552"/>
<rect x="401.77" y="103.12" width="3.90" height="3.90" fill="#cfe46e"/>
<rect x="417.27" y="103.12" width="3.90" height="3.90" fill="#8cc552"/>
<rect x="425.02" y="103.12" width="3.90" height="3.90" fill="#cfe46e"/>
<rect x="428.90" y="103.12" width="3.90" height="3.90" fill="#8cc552"/>
<rect x="440.52" y="103.12" width="3.90" height="3.90" fill="#8cc552"/>
<rect x="444.40" y="103.12" width="3.90" height="3.90" fill="#cfe46e"/>
<rect x="456.02" y="103.12" width="3.90" height="3.90" fill="#8cc552"/>
<rect x="459.90" y="103.12" width="3.90" height="3.90" fill="#cfe46e"/>
<rect x="467.65" y="103.12" width="3.90" height="3.90" fill="#8cc552"/>
<rect x="479.27" y="103.12" width="3.90" height="3.90" fill="#8cc552"/>
<rect x="483.15" y="103.12" width="3.90" height="3.90" fill="#cfe46e"/>
<rect x="494.77" y="103.12" width="3.90" height="3.90" fill="#8cc552"/>
<rect x="506.40" y="103.12" width="3.90" height="3.90" fill="#cfe46e"/>
<rect x="518.02" y="103.12" width="3.90" height="3.90" fill="#8cc552"/>
<rect x="521.90" y="103.12" width="3.90" height="3.90" fill="#cfe46e"/>
<rect x="529.65" y="103.12" width="3.90" height="3.90" fill="#8cc552"/>
<rect x="541.27" y="103.12" width="3.90" height="3.90" fill="#8cc552"/>
<rect x="545.15" y="103.12" width="3.90" height="3.90" fill="#cfe46e"/>
<rect x="556.77" y="103.12" width="7.77" height="3.90" fill="#8cc552"/>
<rect x="564.52" y="103.12" width="3.90" height="3.90" fill="#2b2540"/>
<rect x="382.40" y="107.00" width="3.90" height="3.90" fill="#2b2540"/>
<rect x="386.27" y="107.00" width="7.77" height="3.90" fill="#3a4a78"/>
<rect x="401.77" y="107.00" width="3.90" height="3.90" fill="#8cc552"/>
<rect x="425.02" y="107.00" width="3.90" height="3.90" fill="#8cc552"/>
<rect x="459.90" y="107.00" width="3.90" height="3.90" fill="#8cc552"/>
<rect x="483.15" y="107.00" width="3.90" height="3.90" fill="#8cc552"/>
<rect x="521.90" y="107.00" width="3.90" height="3.90" fill="#8cc552"/>
<rect x="545.15" y="107.00" width="3.90" height="3.90" fill="#8cc552"/>
<rect x="556.77" y="107.00" width="7.77" height="3.90" fill="#3a4a78"/>
<rect x="564.52" y="107.00" width="3.90" height="3.90" fill="#2b2540"/>
<rect x="382.40" y="110.88" width="3.90" height="3.90" fill="#2b2540"/>
<rect x="386.27" y="110.88" width="3.90" height="3.90" fill="#8cc552"/>
<rect x="390.15" y="110.88" width="3.90" height="3.90" fill="#cfe46e"/>
<rect x="394.02" y="110.88" width="3.90" height="3.90" fill="#8cc552"/>
<rect x="552.90" y="110.88" width="3.90" height="3.90" fill="#8cc552"/>
<rect x="556.77" y="110.88" width="3.90" height="3.90" fill="#cfe46e"/>
<rect x="560.65" y="110.88" width="3.90" height="3.90" fill="#8cc552"/>
<rect x="564.52" y="110.88" width="3.90" height="3.90" fill="#2b2540"/>
<rect x="382.40" y="114.75" width="3.90" height="3.90" fill="#2b2540"/>
<rect x="386.27" y="114.75" width="7.77" height="3.90" fill="#8cc552"/>
<rect x="556.77" y="114.75" width="7.77" height="3.90" fill="#8cc552"/>
<rect x="564.52" y="114.75" width="3.90" height="3.90" fill="#2b2540"/>
<rect x="382.40" y="118.62" width="7.77" height="3.90" fill="#3a4a78"/>
<rect x="390.15" y="118.62" width="3.90" height="3.90" fill="#cfe46e"/>
<rect x="394.02" y="118.62" width="3.90" height="3.90" fill="#8cc552"/>
<rect x="552.90" y="118.62" width="3.90" height="3.90" fill="#8cc552"/>
<rect x="556.77" y="118.62" width="3.90" height="3.90" fill="#cfe46e"/>
<rect x="560.65" y="118.62" width="7.77" height="3.90" fill="#3a4a78"/>
<rect x="382.40" y="122.50" width="3.90" height="3.90" fill="#3a4a78"/>
<rect x="386.27" y="122.50" width="3.90" height="3.90" fill="#2b2540"/>
<rect x="390.15" y="122.50" width="3.90" height="3.90" fill="#3a4a78"/>
<rect x="556.77" y="122.50" width="3.90" height="3.90" fill="#3a4a78"/>
<rect x="560.65" y="122.50" width="3.90" height="3.90" fill="#2b2540"/>
<rect x="564.52" y="122.50" width="3.90" height="3.90" fill="#3a4a78"/>
<rect x="382.40" y="126.38" width="3.90" height="3.90" fill="#2b2540"/>
<rect x="386.27" y="126.38" width="7.77" height="3.90" fill="#cfe46e"/>
<rect x="394.02" y="126.38" width="3.90" height="3.90" fill="#8cc552"/>
<rect x="552.90" y="126.38" width="3.90" height="3.90" fill="#8cc552"/>
<rect x="556.77" y="126.38" width="7.77" height="3.90" fill="#cfe46e"/>
<rect x="564.52" y="126.38" width="3.90" height="3.90" fill="#2b2540"/>
<rect x="382.40" y="130.25" width="3.90" height="3.90" fill="#2b2540"/>
<rect x="386.27" y="130.25" width="7.77" height="3.90" fill="#8cc552"/>
<rect x="556.77" y="130.25" width="7.77" height="3.90" fill="#8cc552"/>
<rect x="564.52" y="130.25" width="3.90" height="3.90" fill="#2b2540"/>
<rect x="382.40" y="134.12" width="3.90" height="3.90" fill="#2b2540"/>
<rect x="386.27" y="134.12" width="3.90" height="3.90" fill="#3a4a78"/>
<rect x="390.15" y="134.12" width="3.90" height="3.90" fill="#2b2540"/>
<rect x="394.02" y="134.12" width="3.90" height="3.90" fill="#3a4a78"/>
<rect x="552.90" y="134.12" width="3.90" height="3.90" fill="#3a4a78"/>
<rect x="556.77" y="134.12" width="3.90" height="3.90" fill="#2b2540"/>
<rect x="560.65" y="134.12" width="3.90" height="3.90" fill="#3a4a78"/>
<rect x="564.52" y="134.12" width="3.90" height="3.90" fill="#2b2540"/>
<rect x="382.40" y="138.00" width="7.77" height="3.90" fill="#2b2540"/>
<rect x="390.15" y="138.00" width="7.77" height="3.90" fill="#8cc552"/>
<rect x="552.90" y="138.00" width="7.77" height="3.90" fill="#8cc552"/>
<rect x="560.65" y="138.00" width="7.77" height="3.90" fill="#2b2540"/>
<rect x="382.40" y="141.88" width="3.90" height="3.90" fill="#3a4a78"/>
<rect x="386.27" y="141.88" width="7.77" height="3.90" fill="#8cc552"/>
<rect x="394.02" y="141.88" width="3.90" height="3.90" fill="#cfe46e"/>
<rect x="397.90" y="141.88" width="3.90" height="3.90" fill="#8cc552"/>
<rect x="549.02" y="141.88" width="3.90" height="3.90" fill="#8cc552"/>
<rect x="552.90" y="141.88" width="3.90" height="3.90" fill="#cfe46e"/>
<rect x="556.77" y="141.88" width="7.77" height="3.90" fill="#8cc552"/>
<rect x="564.52" y="141.88" width="3.90" height="3.90" fill="#3a4a78"/>
<rect x="382.40" y="145.75" width="3.90" height="3.90" fill="#3a4a78"/>
<rect x="386.27" y="145.75" width="3.90" height="3.90" fill="#2b2540"/>
<rect x="390.15" y="145.75" width="3.90" height="3.90" fill="#3a4a78"/>
<rect x="556.77" y="145.75" width="3.90" height="3.90" fill="#3a4a78"/>
<rect x="560.65" y="145.75" width="3.90" height="3.90" fill="#2b2540"/>
<rect x="564.52" y="145.75" width="3.90" height="3.90" fill="#3a4a78"/>
<rect x="382.40" y="149.62" width="3.90" height="3.90" fill="#2b2540"/>
<rect x="386.27" y="149.62" width="3.90" height="3.90" fill="#8cc552"/>
<rect x="390.15" y="149.62" width="3.90" height="3.90" fill="#cfe46e"/>
<rect x="394.02" y="149.62" width="3.90" height="3.90" fill="#8cc552"/>
<rect x="552.90" y="149.62" width="3.90" height="3.90" fill="#8cc552"/>
<rect x="556.77" y="149.62" width="3.90" height="3.90" fill="#cfe46e"/>
<rect x="560.65" y="149.62" width="3.90" height="3.90" fill="#8cc552"/>
<rect x="564.52" y="149.62" width="3.90" height="3.90" fill="#2b2540"/>
<rect x="382.40" y="153.50" width="3.90" height="3.90" fill="#2b2540"/>
<rect x="386.27" y="153.50" width="3.90" height="3.90" fill="#8cc552"/>
<rect x="390.15" y="153.50" width="3.90" height="3.90" fill="#cfe46e"/>
<rect x="394.02" y="153.50" width="3.90" height="3.90" fill="#8cc552"/>
<rect x="552.90" y="153.50" width="3.90" height="3.90" fill="#8cc552"/>
<rect x="556.77" y="153.50" width="3.90" height="3.90" fill="#cfe46e"/>
<rect x="560.65" y="153.50" width="3.90" height="3.90" fill="#8cc552"/>
<rect x="564.52" y="153.50" width="3.90" height="3.90" fill="#2b2540"/>
<rect x="382.40" y="157.38" width="7.77" height="3.90" fill="#2b2540"/>
<rect x="390.15" y="157.38" width="7.77" height="3.90" fill="#3a4a78"/>
<rect x="552.90" y="157.38" width="7.77" height="3.90" fill="#3a4a78"/>
<rect x="560.65" y="157.38" width="7.77" height="3.90" fill="#2b2540"/>
<rect x="382.40" y="161.25" width="3.90" height="3.90" fill="#2b2540"/>
<rect x="386.27" y="161.25" width="11.64" height="3.90" fill="#8cc552"/>
<rect x="552.90" y="161.25" width="11.64" height="3.90" fill="#8cc552"/>
<rect x="564.52" y="161.25" width="3.90" height="3.90" fill="#2b2540"/>
<rect x="382.40" y="165.12" width="3.90" height="3.90" fill="#3a4a78"/>
<rect x="386.27" y="165.12" width="3.90" height="3.90" fill="#8cc552"/>
<rect x="390.15" y="165.12" width="7.77" height="3.90" fill="#cfe46e"/>
<rect x="397.90" y="165.12" width="3.90" height="3.90" fill="#8cc552"/>
<rect x="549.02" y="165.12" width="3.90" height="3.90" fill="#8cc552"/>
<rect x="552.90" y="165.12" width="7.77" height="3.90" fill="#cfe46e"/>
<rect x="560.65" y="165.12" width="3.90" height="3.90" fill="#8cc552"/>
<rect x="564.52" y="165.12" width="3.90" height="3.90" fill="#3a4a78"/>
<rect x="382.40" y="169.00" width="3.90" height="3.90" fill="#3a4a78"/>
<rect x="386.27" y="169.00" width="3.90" height="3.90" fill="#2b2540"/>
<rect x="390.15" y="169.00" width="3.90" height="3.90" fill="#3a4a78"/>
<rect x="556.77" y="169.00" width="3.90" height="3.90" fill="#3a4a78"/>
<rect x="560.65" y="169.00" width="3.90" height="3.90" fill="#2b2540"/>
<rect x="564.52" y="169.00" width="3.90" height="3.90" fill="#3a4a78"/>
<rect x="382.40" y="172.88" width="3.90" height="3.90" fill="#2b2540"/>
<rect x="386.27" y="172.88" width="3.90" height="3.90" fill="#8cc552"/>
<rect x="390.15" y="172.88" width="3.90" height="3.90" fill="#cfe46e"/>
<rect x="394.02" y="172.88" width="3.90" height="3.90" fill="#8cc552"/>
<rect x="552.90" y="172.88" width="3.90" height="3.90" fill="#8cc552"/>
<rect x="556.77" y="172.88" width="3.90" height="3.90" fill="#cfe46e"/>
<rect x="560.65" y="172.88" width="3.90" height="3.90" fill="#8cc552"/>
<rect x="564.52" y="172.88" width="3.90" height="3.90" fill="#2b2540"/>
<rect x="382.40" y="176.75" width="3.90" height="3.90" fill="#2b2540"/>
<rect x="386.27" y="176.75" width="7.77" height="3.90" fill="#8cc552"/>
<rect x="556.77" y="176.75" width="7.77" height="3.90" fill="#8cc552"/>
<rect x="564.52" y="176.75" width="3.90" height="3.90" fill="#2b2540"/>
<rect x="382.40" y="180.62" width="7.77" height="3.90" fill="#3a4a78"/>
<rect x="390.15" y="180.62" width="3.90" height="3.90" fill="#cfe46e"/>
<rect x="394.02" y="180.62" width="3.90" height="3.90" fill="#8cc552"/>
<rect x="552.90" y="180.62" width="3.90" height="3.90" fill="#8cc552"/>
<rect x="556.77" y="180.62" width="3.90" height="3.90" fill="#cfe46e"/>
<rect x="560.65" y="180.62" width="7.77" height="3.90" fill="#3a4a78"/>
<rect x="382.40" y="184.50" width="3.90" height="3.90" fill="#3a4a78"/>
<rect x="386.27" y="184.50" width="3.90" height="3.90" fill="#2b2540"/>
<rect x="390.15" y="184.50" width="3.90" height="3.90" fill="#3a4a78"/>
<rect x="556.77" y="184.50" width="3.90" height="3.90" fill="#3a4a78"/>
<rect x="560.65" y="184.50" width="3.90" height="3.90" fill="#2b2540"/>
<rect x="564.52" y="184.50" width="3.90" height="3.90" fill="#3a4a78"/>
<rect x="382.40" y="188.38" width="3.90" height="3.90" fill="#2b2540"/>
<rect x="386.27" y="188.38" width="7.77" height="3.90" fill="#cfe46e"/>
<rect x="394.02" y="188.38" width="3.90" height="3.90" fill="#8cc552"/>
<rect x="552.90" y="188.38" width="3.90" height="3.90" fill="#8cc552"/>
<rect x="556.77" y="188.38" width="7.77" height="3.90" fill="#cfe46e"/>
<rect x="564.52" y="188.38" width="3.90" height="3.90" fill="#2b2540"/>
<rect x="382.40" y="192.25" width="3.90" height="3.90" fill="#2b2540"/>
<rect x="386.27" y="192.25" width="7.77" height="3.90" fill="#8cc552"/>
<rect x="556.77" y="192.25" width="7.77" height="3.90" fill="#8cc552"/>
<rect x="564.52" y="192.25" width="3.90" height="3.90" fill="#2b2540"/>
<rect x="382.40" y="196.12" width="3.90" height="3.90" fill="#2b2540"/>
<rect x="386.27" y="196.12" width="3.90" height="3.90" fill="#3a4a78"/>
<rect x="390.15" y="196.12" width="3.90" height="3.90" fill="#2b2540"/>
<rect x="394.02" y="196.12" width="3.90" height="3.90" fill="#3a4a78"/>
<rect x="552.90" y="196.12" width="3.90" height="3.90" fill="#3a4a78"/>
<rect x="556.77" y="196.12" width="3.90" height="3.90" fill="#2b2540"/>
<rect x="560.65" y="196.12" width="3.90" height="3.90" fill="#3a4a78"/>
<rect x="564.52" y="196.12" width="3.90" height="3.90" fill="#2b2540"/>
<rect x="382.40" y="200.00" width="7.77" height="3.90" fill="#2b2540"/>
<rect x="390.15" y="200.00" width="7.77" height="3.90" fill="#8cc552"/>
<rect x="552.90" y="200.00" width="7.77" height="3.90" fill="#8cc552"/>
<rect x="560.65" y="200.00" width="7.77" height="3.90" fill="#2b2540"/>
<rect x="382.40" y="203.88" width="3.90" height="3.90" fill="#3a4a78"/>
<rect x="386.27" y="203.88" width="7.77" height="3.90" fill="#8cc552"/>
<rect x="394.02" y="203.88" width="3.90" height="3.90" fill="#cfe46e"/>
<rect x="397.90" y="203.88" width="3.90" height="3.90" fill="#8cc552"/>
<rect x="549.02" y="203.88" width="3.90" height="3.90" fill="#8cc552"/>
<rect x="552.90" y="203.88" width="3.90" height="3.90" fill="#cfe46e"/>
<rect x="556.77" y="203.88" width="7.77" height="3.90" fill="#8cc552"/>
<rect x="564.52" y="203.88" width="3.90" height="3.90" fill="#3a4a78"/>
<rect x="382.40" y="207.75" width="3.90" height="3.90" fill="#3a4a78"/>
<rect x="386.27" y="207.75" width="3.90" height="3.90" fill="#2b2540"/>
<rect x="390.15" y="207.75" width="3.90" height="3.90" fill="#3a4a78"/>
<rect x="556.77" y="207.75" width="3.90" height="3.90" fill="#3a4a78"/>
<rect x="560.65" y="207.75" width="3.90" height="3.90" fill="#2b2540"/>
<rect x="564.52" y="207.75" width="3.90" height="3.90" fill="#3a4a78"/>
<rect x="382.40" y="211.62" width="3.90" height="3.90" fill="#2b2540"/>
<rect x="386.27" y="211.62" width="3.90" height="3.90" fill="#8cc552"/>
<rect x="390.15" y="211.62" width="3.90" height="3.90" fill="#cfe46e"/>
<rect x="394.02" y="211.62" width="3.90" height="3.90" fill="#8cc552"/>
<rect x="552.90" y="211.62" width="3.90" height="3.90" fill="#8cc552"/>
<rect x="556.77" y="211.62" width="3.90" height="3.90" fill="#cfe46e"/>
<rect x="560.65" y="211.62" width="3.90" height="3.90" fill="#8cc552"/>
<rect x="564.52" y="211.62" width="3.90" height="3.90" fill="#2b2540"/>
<rect x="382.40" y="215.50" width="3.90" height="3.90" fill="#2b2540"/>
<rect x="386.27" y="215.50" width="3.90" height="3.90" fill="#8cc552"/>
<rect x="390.15" y="215.50" width="3.90" height="3.90" fill="#cfe46e"/>
<rect x="394.02" y="215.50" width="3.90" height="3.90" fill="#8cc552"/>
<rect x="552.90" y="215.50" width="3.90" height="3.90" fill="#8cc552"/>
<rect x="556.77" y="215.50" width="3.90" height="3.90" fill="#cfe46e"/>
<rect x="560.65" y="215.50" width="3.90" height="3.90" fill="#8cc552"/>
<rect x="564.52" y="215.50" width="3.90" height="3.90" fill="#2b2540"/>
<rect x="382.40" y="219.38" width="7.77" height="3.90" fill="#2b2540"/>
<rect x="390.15" y="219.38" width="7.77" height="3.90" fill="#3a4a78"/>
<rect x="552.90" y="219.38" width="7.77" height="3.90" fill="#3a4a78"/>
<rect x="560.65" y="219.38" width="7.77" height="3.90" fill="#2b2540"/>
<rect x="382.40" y="223.25" width="3.90" height="3.90" fill="#2b2540"/>
<rect x="386.27" y="223.25" width="11.64" height="3.90" fill="#8cc552"/>
<rect x="552.90" y="223.25" width="11.64" height="3.90" fill="#8cc552"/>
<rect x="564.52" y="223.25" width="3.90" height="3.90" fill="#2b2540"/>
<rect x="382.40" y="227.12" width="3.90" height="3.90" fill="#3a4a78"/>
<rect x="386.27" y="227.12" width="3.90" height="3.90" fill="#8cc552"/>
<rect x="390.15" y="227.12" width="7.77" height="3.90" fill="#cfe46e"/>
<rect x="397.90" y="227.12" width="3.90" height="3.90" fill="#8cc552"/>
<rect x="549.02" y="227.12" width="3.90" height="3.90" fill="#8cc552"/>
<rect x="552.90" y="227.12" width="7.77" height="3.90" fill="#cfe46e"/>
<rect x="560.65" y="227.12" width="3.90" height="3.90" fill="#8cc552"/>
<rect x="564.52" y="227.12" width="3.90" height="3.90" fill="#3a4a78"/>
<rect x="382.40" y="231.00" width="3.90" height="3.90" fill="#3a4a78"/>
<rect x="386.27" y="231.00" width="3.90" height="3.90" fill="#2b2540"/>
<rect x="390.15" y="231.00" width="3.90" height="3.90" fill="#3a4a78"/>
<rect x="556.77" y="231.00" width="3.90" height="3.90" fill="#3a4a78"/>
<rect x="560.65" y="231.00" width="3.90" height="3.90" fill="#2b2540"/>
<rect x="564.52" y="231.00" width="3.90" height="3.90" fill="#3a4a78"/>
<rect x="382.40" y="234.88" width="3.90" height="3.90" fill="#2b2540"/>
<rect x="386.27" y="234.88" width="3.90" height="3.90" fill="#8cc552"/>
<rect x="390.15" y="234.88" width="3.90" height="3.90" fill="#cfe46e"/>
<rect x="394.02" y="234.88" width="3.90" height="3.90" fill="#8cc552"/>
<rect x="552.90" y="234.88" width="3.90" height="3.90" fill="#8cc552"/>
<rect x="556.77" y="234.88" width="3.90" height="3.90" fill="#cfe46e"/>
<rect x="560.65" y="234.88" width="3.90" height="3.90" fill="#8cc552"/>
<rect x="564.52" y="234.88" width="3.90" height="3.90" fill="#2b2540"/>
<rect x="382.40" y="238.75" width="3.90" height="3.90" fill="#2b2540"/>
<rect x="386.27" y="238.75" width="7.77" height="3.90" fill="#8cc552"/>
<rect x="556.77" y="238.75" width="7.77" height="3.90" fill="#8cc552"/>
<rect x="564.52" y="238.75" width="3.90" height="3.90" fill="#2b2540"/>
<rect x="382.40" y="242.62" width="7.77" height="3.90" fill="#3a4a78"/>
<rect x="390.15" y="242.62" width="3.90" height="3.90" fill="#cfe46e"/>
<rect x="394.02" y="242.62" width="3.90" height="3.90" fill="#8cc552"/>
<rect x="552.90" y="242.62" width="3.90" height="3.90" fill="#8cc552"/>
<rect x="556.77" y="242.62" width="3.90" height="3.90" fill="#cfe46e"/>
<rect x="560.65" y="242.62" width="7.77" height="3.90" fill="#3a4a78"/>
<rect x="382.40" y="246.50" width="3.90" height="3.90" fill="#3a4a78"/>
<rect x="386.27" y="246.50" width="3.90" height="3.90" fill="#2b2540"/>
<rect x="390.15" y="246.50" width="3.90" height="3.90" fill="#3a4a78"/>
<rect x="556.77" y="246.50" width="3.90" height="3.90" fill="#3a4a78"/>
<rect x="560.65" y="246.50" width="3.90" height="3.90" fill="#2b2540"/>
<rect x="564.52" y="246.50" width="3.90" height="3.90" fill="#3a4a78"/>
<rect x="382.40" y="250.38" width="3.90" height="3.90" fill="#2b2540"/>
<rect x="386.27" y="250.38" width="7.77" height="3.90" fill="#cfe46e"/>
<rect x="394.02" y="250.38" width="3.90" height="3.90" fill="#8cc552"/>
<rect x="552.90" y="250.38" width="3.90" height="3.90" fill="#8cc552"/>
<rect x="556.77" y="250.38" width="7.77" height="3.90" fill="#cfe46e"/>
<rect x="564.52" y="250.38" width="3.90" height="3.90" fill="#2b2540"/>
<rect x="382.40" y="254.25" width="3.90" height="3.90" fill="#2b2540"/>
<rect x="386.27" y="254.25" width="7.77" height="3.90" fill="#8cc552"/>
<rect x="556.77" y="254.25" width="7.77" height="3.90" fill="#8cc552"/>
<rect x="564.52" y="254.25" width="3.90" height="3.90" fill="#2b2540"/>
<rect x="382.40" y="258.12" width="3.90" height="3.90" fill="#2b2540"/>
<rect x="386.27" y="258.12" width="3.90" height="3.90" fill="#3a4a78"/>
<rect x="390.15" y="258.12" width="3.90" height="3.90" fill="#2b2540"/>
<rect x="394.02" y="258.12" width="3.90" height="3.90" fill="#3a4a78"/>
<rect x="552.90" y="258.12" width="3.90" height="3.90" fill="#3a4a78"/>
<rect x="556.77" y="258.12" width="3.90" height="3.90" fill="#2b2540"/>
<rect x="560.65" y="258.12" width="3.90" height="3.90" fill="#3a4a78"/>
<rect x="564.52" y="258.12" width="3.90" height="3.90" fill="#2b2540"/>
<rect x="382.40" y="262.00" width="7.77" height="3.90" fill="#2b2540"/>
<rect x="390.15" y="262.00" width="7.77" height="3.90" fill="#8cc552"/>
<rect x="552.90" y="262.00" width="7.77" height="3.90" fill="#8cc552"/>
<rect x="560.65" y="262.00" width="7.77" height="3.90" fill="#2b2540"/>
<rect x="382.40" y="265.88" width="3.90" height="3.90" fill="#3a4a78"/>
<rect x="386.27" y="265.88" width="7.77" height="3.90" fill="#8cc552"/>
<rect x="394.02" y="265.88" width="3.90" height="3.90" fill="#cfe46e"/>
<rect x="397.90" y="265.88" width="3.90" height="3.90" fill="#8cc552"/>
<rect x="549.02" y="265.88" width="3.90" height="3.90" fill="#8cc552"/>
<rect x="552.90" y="265.88" width="3.90" height="3.90" fill="#cfe46e"/>
<rect x="556.77" y="265.88" width="7.77" height="3.90" fill="#8cc552"/>
<rect x="564.52" y="265.88" width="3.90" height="3.90" fill="#3a4a78"/>
<rect x="382.40" y="269.75" width="3.90" height="3.90" fill="#3a4a78"/>
<rect x="386.27" y="269.75" width="3.90" height="3.90" fill="#2b2540"/>
<rect x="390.15" y="269.75" width="3.90" height="3.90" fill="#3a4a78"/>
<rect x="556.77" y="269.75" width="3.90" height="3.90" fill="#3a4a78"/>
<rect x="560.65" y="269.75" width="3.90" height="3.90" fill="#2b2540"/>
<rect x="564.52" y="269.75" width="3.90" height="3.90" fill="#3a4a78"/>
<rect x="382.40" y="273.62" width="3.90" height="3.90" fill="#2b2540"/>
<rect x="386.27" y="273.62" width="3.90" height="3.90" fill="#8cc552"/>
<rect x="390.15" y="273.62" width="3.90" height="3.90" fill="#cfe46e"/>
<rect x="394.02" y="273.62" width="3.90" height="3.90" fill="#8cc552"/>
<rect x="552.90" y="273.62" width="3.90" height="3.90" fill="#8cc552"/>
<rect x="556.77" y="273.62" width="3.90" height="3.90" fill="#cfe46e"/>
<rect x="560.65" y="273.62" width="3.90" height="3.90" fill="#8cc552"/>
<rect x="564.52" y="273.62" width="3.90" height="3.90" fill="#2b2540"/>
<rect x="382.40" y="277.50" width="3.90" height="3.90" fill="#2b2540"/>
<rect x="386.27" y="277.50" width="3.90" height="3.90" fill="#8cc552"/>
<rect x="390.15" y="277.50" width="3.90" height="3.90" fill="#cfe46e"/>
<rect x="394.02" y="277.50" width="3.90" height="3.90" fill="#8cc552"/>
<rect x="552.90" y="277.50" width="3.90" height="3.90" fill="#8cc552"/>
<rect x="556.77" y="277.50" width="3.90" height="3.90" fill="#cfe46e"/>
<rect x="560.65" y="277.50" width="3.90" height="3.90" fill="#8cc552"/>
<rect x="564.52" y="277.50" width="3.90" height="3.90" fill="#2b2540"/>
<rect x="382.40" y="281.38" width="7.77" height="3.90" fill="#2b2540"/>
<rect x="390.15" y="281.38" width="7.77" height="3.90" fill="#3a4a78"/>
<rect x="552.90" y="281.38" width="7.77" height="3.90" fill="#3a4a78"/>
<rect x="560.65" y="281.38" width="7.77" height="3.90" fill="#2b2540"/>
<rect x="382.40" y="285.25" width="3.90" height="3.90" fill="#2b2540"/>
<rect x="386.27" y="285.25" width="11.64" height="3.90" fill="#8cc552"/>
<rect x="552.90" y="285.25" width="11.64" height="3.90" fill="#8cc552"/>
<rect x="564.52" y="285.25" width="3.90" height="3.90" fill="#2b2540"/>
<rect x="382.40" y="289.12" width="3.90" height="3.90" fill="#3a4a78"/>
<rect x="386.27" y="289.12" width="3.90" height="3.90" fill="#8cc552"/>
<rect x="390.15" y="289.12" width="7.77" height="3.90" fill="#cfe46e"/>
<rect x="397.90" y="289.12" width="3.90" height="3.90" fill="#8cc552"/>
<rect x="549.02" y="289.12" width="3.90" height="3.90" fill="#8cc552"/>
<rect x="552.90" y="289.12" width="7.77" height="3.90" fill="#cfe46e"/>
<rect x="560.65" y="289.12" width="3.90" height="3.90" fill="#8cc552"/>
<rect x="564.52" y="289.12" width="3.90" height="3.90" fill="#3a4a78"/>
<rect x="382.40" y="293.00" width="3.90" height="3.90" fill="#3a4a78"/>
<rect x="386.27" y="293.00" width="3.90" height="3.90" fill="#2b2540"/>
<rect x="390.15" y="293.00" width="3.90" height="3.90" fill="#3a4a78"/>
<rect x="556.77" y="293.00" width="3.90" height="3.90" fill="#3a4a78"/>
<rect x="560.65" y="293.00" width="3.90" height="3.90" fill="#2b2540"/>
<rect x="564.52" y="293.00" width="3.90" height="3.90" fill="#3a4a78"/>
<rect x="382.40" y="296.88" width="3.90" height="3.90" fill="#2b2540"/>
<rect x="386.27" y="296.88" width="3.90" height="3.90" fill="#8cc552"/>
<rect x="390.15" y="296.88" width="3.90" height="3.90" fill="#cfe46e"/>
<rect x="394.02" y="296.88" width="3.90" height="3.90" fill="#8cc552"/>
<rect x="552.90" y="296.88" width="3.90" height="3.90" fill="#8cc552"/>
<rect x="556.77" y="296.88" width="3.90" height="3.90" fill="#cfe46e"/>
<rect x="560.65" y="296.88" width="3.90" height="3.90" fill="#8cc552"/>
<rect x="564.52" y="296.88" width="3.90" height="3.90" fill="#2b2540"/>
<rect x="382.40" y="300.75" width="3.90" height="3.90" fill="#2b2540"/>
<rect x="386.27" y="300.75" width="7.77" height="3.90" fill="#8cc552"/>
<rect x="556.77" y="300.75" width="7.77" height="3.90" fill="#8cc552"/>
<rect x="564.52" y="300.75" width="3.90" height="3.90" fill="#2b2540"/>
<rect x="382.40" y="304.62" width="7.77" height="3.90" fill="#3a4a78"/>
<rect x="390.15" y="304.62" width="3.90" height="3.90" fill="#cfe46e"/>
<rect x="394.02" y="304.62" width="3.90" height="3.90" fill="#8cc552"/>
<rect x="552.90" y="304.62" width="3.90" height="3.90" fill="#8cc552"/>
<rect x="556.77" y="304.62" width="3.90" height="3.90" fill="#cfe46e"/>
<rect x="560.65" y="304.62" width="7.77" height="3.90" fill="#3a4a78"/>
<rect x="382.40" y="308.50" width="3.90" height="3.90" fill="#3a4a78"/>
<rect x="386.27" y="308.50" width="3.90" height="3.90" fill="#2b2540"/>
<rect x="390.15" y="308.50" width="3.90" height="3.90" fill="#3a4a78"/>
<rect x="556.77" y="308.50" width="3.90" height="3.90" fill="#3a4a78"/>
<rect x="560.65" y="308.50" width="3.90" height="3.90" fill="#2b2540"/>
<rect x="564.52" y="308.50" width="3.90" height="3.90" fill="#3a4a78"/>
<rect x="382.40" y="312.38" width="3.90" height="3.90" fill="#2b2540"/>
<rect x="386.27" y="312.38" width="7.77" height="3.90" fill="#cfe46e"/>
<rect x="394.02" y="312.38" width="3.90" height="3.90" fill="#8cc552"/>
<rect x="552.90" y="312.38" width="3.90" height="3.90" fill="#8cc552"/>
<rect x="556.77" y="312.38" width="7.77" height="3.90" fill="#cfe46e"/>
<rect x="564.52" y="312.38" width="3.90" height="3.90" fill="#2b2540"/>
<rect x="382.40" y="316.25" width="3.90" height="3.90" fill="#2b2540"/>
<rect x="386.27" y="316.25" width="7.77" height="3.90" fill="#8cc552"/>
<rect x="556.77" y="316.25" width="7.77" height="3.90" fill="#8cc552"/>
<rect x="564.52" y="316.25" width="3.90" height="3.90" fill="#2b2540"/>
<rect x="382.40" y="320.12" width="3.90" height="3.90" fill="#2b2540"/>
<rect x="386.27" y="320.12" width="3.90" height="3.90" fill="#3a4a78"/>
<rect x="390.15" y="320.12" width="3.90" height="3.90" fill="#2b2540"/>
<rect x="394.02" y="320.12" width="3.90" height="3.90" fill="#3a4a78"/>
<rect x="552.90" y="320.12" width="3.90" height="3.90" fill="#3a4a78"/>
<rect x="556.77" y="320.12" width="3.90" height="3.90" fill="#2b2540"/>
<rect x="560.65" y="320.12" width="3.90" height="3.90" fill="#3a4a78"/>
<rect x="564.52" y="320.12" width="3.90" height="3.90" fill="#2b2540"/>
<rect x="382.40" y="324.00" width="7.77" height="3.90" fill="#2b2540"/>
<rect x="390.15" y="324.00" width="7.77" height="3.90" fill="#8cc552"/>
<rect x="552.90" y="324.00" width="7.77" height="3.90" fill="#8cc552"/>
<rect x="560.65" y="324.00" width="7.77" height="3.90" fill="#2b2540"/>
<rect x="382.40" y="327.88" width="3.90" height="3.90" fill="#3a4a78"/>
<rect x="386.27" y="327.88" width="7.77" height="3.90" fill="#8cc552"/>
<rect x="394.02" y="327.88" width="3.90" height="3.90" fill="#cfe46e"/>
<rect x="397.90" y="327.88" width="3.90" height="3.90" fill="#8cc552"/>
<rect x="549.02" y="327.88" width="3.90" height="3.90" fill="#8cc552"/>
<rect x="552.90" y="327.88" width="3.90" height="3.90" fill="#cfe46e"/>
<rect x="556.77" y="327.88" width="7.77" height="3.90" fill="#8cc552"/>
<rect x="564.52" y="327.88" width="3.90" height="3.90" fill="#3a4a78"/>
<rect x="382.40" y="331.75" width="3.90" height="3.90" fill="#3a4a78"/>
<rect x="386.27" y="331.75" width="3.90" height="3.90" fill="#2b2540"/>
<rect x="390.15" y="331.75" width="3.90" height="3.90" fill="#3a4a78"/>
<rect x="556.77" y="331.75" width="3.90" height="3.90" fill="#3a4a78"/>
<rect x="560.65" y="331.75" width="3.90" height="3.90" fill="#2b2540"/>
<rect x="564.52" y="331.75" width="3.90" height="3.90" fill="#3a4a78"/>
<rect x="382.40" y="335.62" width="3.90" height="3.90" fill="#2b2540"/>
<rect x="386.27" y="335.62" width="3.90" height="3.90" fill="#8cc552"/>
<rect x="390.15" y="335.62" width="3.90" height="3.90" fill="#cfe46e"/>
<rect x="394.02" y="335.62" width="3.90" height="3.90" fill="#8cc552"/>
<rect x="552.90" y="335.62" width="3.90" height="3.90" fill="#8cc552"/>
<rect x="556.77" y="335.62" width="3.90" height="3.90" fill="#cfe46e"/>
<rect x="560.65" y="335.62" width="3.90" height="3.90" fill="#8cc552"/>
<rect x="564.52" y="335.62" width="3.90" height="3.90" fill="#2b2540"/>
<rect x="382.40" y="339.50" width="3.90" height="3.90" fill="#2b2540"/>
<rect x="386.27" y="339.50" width="3.90" height="3.90" fill="#8cc552"/>
<rect x="390.15" y="339.50" width="3.90" height="3.90" fill="#cfe46e"/>
<rect x="394.02" y="339.50" width="3.90" height="3.90" fill="#8cc552"/>
<rect x="552.90" y="339.50" width="3.90" height="3.90" fill="#8cc552"/>
<rect x="556.77" y="339.50" width="3.90" height="3.90" fill="#cfe46e"/>
<rect x="560.65" y="339.50" width="3.90" height="3.90" fill="#8cc552"/>
<rect x="564.52" y="339.50" width="3.90" height="3.90" fill="#2b2540"/>
<rect x="382.40" y="343.38" width="7.77" height="3.90" fill="#2b2540"/>
<rect x="390.15" y="343.38" width="7.77" height="3.90" fill="#3a4a78"/>
<rect x="552.90" y="343.38" width="7.77" height="3.90" fill="#3a4a78"/>
<rect x="560.65" y="343.38" width="7.77" height="3.90" fill="#2b2540"/>
<rect x="382.40" y="347.25" width="3.90" height="3.90" fill="#2b2540"/>
<rect x="386.27" y="347.25" width="11.64" height="3.90" fill="#8cc552"/>
<rect x="552.90" y="347.25" width="11.64" height="3.90" fill="#8cc552"/>
<rect x="564.52" y="347.25" width="3.90" height="3.90" fill="#2b2540"/>
<rect x="382.40" y="351.12" width="3.90" height="3.90" fill="#3a4a78"/>
<rect x="386.27" y="351.12" width="3.90" height="3.90" fill="#8cc552"/>
<rect x="390.15" y="351.12" width="7.77" height="3.90" fill="#cfe46e"/>
<rect x="397.90" y="351.12" width="3.90" height="3.90" fill="#8cc552"/>
<rect x="549.02" y="351.12" width="3.90" height="3.90" fill="#8cc552"/>
<rect x="552.90" y="351.12" width="7.77" height="3.90" fill="#cfe46e"/>
<rect x="560.65" y="351.12" width="3.90" height="3.90" fill="#8cc552"/>
<rect x="564.52" y="351.12" width="3.90" height="3.90" fill="#3a4a78"/>
<rect x="382.40" y="355.00" width="3.90" height="3.90" fill="#3a4a78"/>
<rect x="386.27" y="355.00" width="3.90" height="3.90" fill="#2b2540"/>
<rect x="390.15" y="355.00" width="3.90" height="3.90" fill="#3a4a78"/>
<rect x="556.77" y="355.00" width="3.90" height="3.90" fill="#3a4a78"/>
<rect x="560.65" y="355.00" width="3.90" height="3.90" fill="#2b2540"/>
<rect x="564.52" y="355.00" width="3.90" height="3.90" fill="#3a4a78"/>
<rect x="382.40" y="358.88" width="3.90" height="3.90" fill="#2b2540"/>
<rect x="386.27" y="358.88" width="3.90" height="3.90" fill="#8cc552"/>
<rect x="390.15" y="358.88" width="3.90" height="3.90" fill="#cfe46e"/>
<rect x="394.02" y="358.88" width="3.90" height="3.90" fill="#8cc552"/>
<rect x="552.90" y="358.88" width="3.90" height="3.90" fill="#8cc552"/>
<rect x="556.77" y="358.88" width="3.90" height="3.90" fill="#cfe46e"/>
<rect x="560.65" y="358.88" width="3.90" height="3.90" fill="#8cc552"/>
<rect x="564.52" y="358.88" width="3.90" height="3.90" fill="#2b2540"/>
<rect x="382.40" y="362.75" width="3.90" height="3.90" fill="#2b2540"/>
<rect x="386.27" y="362.75" width="7.77" height="3.90" fill="#8cc552"/>
<rect x="556.77" y="362.75" width="7.77" height="3.90" fill="#8cc552"/>
<rect x="564.52" y="362.75" width="3.90" height="3.90" fill="#2b2540"/>
<rect x="382.40" y="366.62" width="7.77" height="3.90" fill="#3a4a78"/>
<rect x="390.15" y="366.62" width="3.90" height="3.90" fill="#cfe46e"/>
<rect x="394.02" y="366.62" width="3.90" height="3.90" fill="#8cc552"/>
<rect x="552.90" y="366.62" width="3.90" height="3.90" fill="#8cc552"/>
<rect x="556.77" y="366.62" width="3.90" height="3.90" fill="#cfe46e"/>
<rect x="560.65" y="366.62" width="7.77" height="3.90" fill="#3a4a78"/>
<rect x="382.40" y="370.50" width="3.90" height="3.90" fill="#3a4a78"/>
<rect x="386.27" y="370.50" width="3.90" height="3.90" fill="#2b2540"/>
<rect x="390.15" y="370.50" width="3.90" height="3.90" fill="#3a4a78"/>
<rect x="556.77" y="370.50" width="3.90" height="3.90" fill="#3a4a78"/>
<rect x="560.65" y="370.50" width="3.90" height="3.90" fill="#2b2540"/>
<rect x="564.52" y="370.50" width="3.90" height="3.90" fill="#3a4a78"/>
<rect x="382.40" y="374.38" width="3.90" height="3.90" fill="#2b2540"/>
<rect x="386.27" y="374.38" width="7.77" height="3.90" fill="#cfe46e"/>
<rect x="394.02" y="374.38" width="3.90" height="3.90" fill="#8cc552"/>
<rect x="552.90" y="374.38" width="3.90" height="3.90" fill="#8cc552"/>
<rect x="556.77" y="374.38" width="7.77" height="3.90" fill="#cfe46e"/>
<rect x="564.52" y="374.38" width="3.90" height="3.90" fill="#2b2540"/>
<rect x="382.40" y="378.25" width="3.90" height="3.90" fill="#2b2540"/>
<rect x="386.27" y="378.25" width="7.77" height="3.90" fill="#8cc552"/>
<rect x="556.77" y="378.25" width="7.77" height="3.90" fill="#8cc552"/>
<rect x="564.52" y="378.25" width="3.90" height="3.90" fill="#2b2540"/>
<rect x="382.40" y="382.12" width="3.90" height="3.90" fill="#2b2540"/>
<rect x="386.27" y="382.12" width="3.90" height="3.90" fill="#3a4a78"/>
<rect x="390.15" y="382.12" width="3.90" height="3.90" fill="#2b2540"/>
<rect x="394.02" y="382.12" width="3.90" height="3.90" fill="#3a4a78"/>
<rect x="552.90" y="382.12" width="3.90" height="3.90" fill="#3a4a78"/>
<rect x="556.77" y="382.12" width="3.90" height="3.90" fill="#2b2540"/>
<rect x="560.65" y="382.12" width="3.90" height="3.90" fill="#3a4a78"/>
<rect x="564.52" y="382.12" width="3.90" height="3.90" fill="#2b2540"/>
<rect x="382.40" y="386.00" width="7.77" height="3.90" fill="#2b2540"/>
<rect x="390.15" y="386.00" width="7.77" height="3.90" fill="#8cc552"/>
<rect x="552.90" y="386.00" width="7.77" height="3.90" fill="#8cc552"/>
<rect x="560.65" y="386.00" width="7.77" height="3.90" fill="#2b2540"/>
<rect x="382.40" y="389.88" width="3.90" height="3.90" fill="#3a4a78"/>
<rect x="386.27" y="389.88" width="7.77" height="3.90" fill="#8cc552"/>
<rect x="394.02" y="389.88" width="3.90" height="3.90" fill="#cfe46e"/>
<rect x="397.90" y="389.88" width="3.90" height="3.90" fill="#8cc552"/>
<rect x="549.02" y="389.88" width="3.90" height="3.90" fill="#8cc552"/>
<rect x="552.90" y="389.88" width="3.90" height="3.90" fill="#cfe46e"/>
<rect x="556.77" y="389.88" width="7.77" height="3.90" fill="#8cc552"/>
<rect x="564.52" y="389.88" width="3.90" height="3.90" fill="#3a4a78"/>
<rect x="382.40" y="393.75" width="3.90" height="3.90" fill="#3a4a78"/>
<rect x="386.27" y="393.75" width="3.90" height="3.90" fill="#2b2540"/>
<rect x="390.15" y="393.75" width="3.90" height="3.90" fill="#3a4a78"/>
<rect x="556.77" y="393.75" width="3.90" height="3.90" fill="#3a4a78"/>
<rect x="560.65" y="393.75" width="3.90" height="3.90" fill="#2b2540"/>
<rect x="564.52" y="393.75" width="3.90" height="3.90" fill="#3a4a78"/>
<rect x="382.40" y="397.62" width="3.90" height="3.90" fill="#2b2540"/>
<rect x="386.27" y="397.62" width="3.90" height="3.90" fill="#8cc552"/>
<rect x="390.15" y="397.62" width="3.90" height="3.90" fill="#cfe46e"/>
<rect x="394.02" y="397.62" width="3.90" height="3.90" fill="#8cc552"/>
<rect x="552.90" y="397.62" width="3.90" height="3.90" fill="#8cc552"/>
<rect x="556.77" y="397.62" width="3.90" height="3.90" fill="#cfe46e"/>
<rect x="560.65" y="397.62" width="3.90" height="3.90" fill="#8cc552"/>
<rect x="564.52" y="397.62" width="3.90" height="3.90" fill="#2b2540"/>
<rect x="382.40" y="401.50" width="3.90" height="3.90" fill="#2b2540"/>
<rect x="386.27" y="401.50" width="3.90" height="3.90" fill="#8cc552"/>
<rect x="390.15" y="401.50" width="3.90" height="3.90" fill="#cfe46e"/>
<rect x="394.02" y="401.50" width="3.90" height="3.90" fill="#8cc552"/>
<rect x="552.90" y="401.50" width="3.90" height="3.90" fill="#8cc552"/>
<rect x="556.77" y="401.50" width="3.90" height="3.90" fill="#cfe46e"/>
<rect x="560.65" y="401.50" width="3.90" height="3.90" fill="#8cc552"/>
<rect x="564.52" y="401.50" width="3.90" height="3.90" fill="#2b2540"/>
<rect x="382.40" y="405.38" width="7.77" height="3.90" fill="#2b2540"/>
<rect x="390.15" y="405.38" width="7.77" height="3.90" fill="#3a4a78"/>
<rect x="552.90" y="405.38" width="7.77" height="3.90" fill="#3a4a78"/>
<rect x="560.65" y="405.38" width="7.77" height="3.90" fill="#2b2540"/>
<rect x="382.40" y="409.25" width="3.90" height="3.90" fill="#2b2540"/>
<rect x="386.27" y="409.25" width="11.64" height="3.90" fill="#8cc552"/>
<rect x="552.90" y="409.25" width="11.64" height="3.90" fill="#8cc552"/>
<rect x="564.52" y="409.25" width="3.90" height="3.90" fill="#2b2540"/>
<rect x="382.40" y="413.12" width="3.90" height="3.90" fill="#3a4a78"/>
<rect x="386.27" y="413.12" width="3.90" height="3.90" fill="#8cc552"/>
<rect x="390.15" y="413.12" width="7.77" height="3.90" fill="#cfe46e"/>
<rect x="397.90" y="413.12" width="3.90" height="3.90" fill="#8cc552"/>
<rect x="549.02" y="413.12" width="3.90" height="3.90" fill="#8cc552"/>
<rect x="552.90" y="413.12" width="7.77" height="3.90" fill="#cfe46e"/>
<rect x="560.65" y="413.12" width="3.90" height="3.90" fill="#8cc552"/>
<rect x="564.52" y="413.12" width="3.90" height="3.90" fill="#3a4a78"/>
<rect x="382.40" y="417.00" width="3.90" height="3.90" fill="#3a4a78"/>
<rect x="386.27" y="417.00" width="3.90" height="3.90" fill="#2b2540"/>
<rect x="390.15" y="417.00" width="3.90" height="3.90" fill="#3a4a78"/>
<rect x="556.77" y="417.00" width="3.90" height="3.90" fill="#3a4a78"/>
<rect x="560.65" y="417.00" width="3.90" height="3.90" fill="#2b2540"/>
<rect x="564.52" y="417.00" width="3.90" height="3.90" fill="#3a4a78"/>
<rect x="382.40" y="420.88" width="3.90" height="3.90" fill="#2b2540"/>
<rect x="386.27" y="420.88" width="3.90" height="3.90" fill="#8cc552"/>
<rect x="390.15" y="420.88" width="3.90" height="3.90" fill="#cfe46e"/>
<rect x="394.02" y="420.88" width="3.90" height="3.90" fill="#8cc552"/>
<rect x="552.90" y="420.88" width="3.90" height="3.90" fill="#8cc552"/>
<rect x="556.77" y="420.88" width="3.90" height="3.90" fill="#cfe46e"/>
<rect x="560.65" y="420.88" width="3.90" height="3.90" fill="#8cc552"/>
<rect x="564.52" y="420.88" width="3.90" height="3.90" fill="#2b2540"/>
<rect x="382.40" y="424.75" width="3.90" height="3.90" fill="#2b2540"/>
<rect x="386.27" y="424.75" width="7.77" height="3.90" fill="#8cc552"/>
<rect x="556.77" y="424.75" width="7.77" height="3.90" fill="#8cc552"/>
<rect x="564.52" y="424.75" width="3.90" height="3.90" fill="#2b2540"/>
<rect x="382.40" y="428.62" width="7.77" height="3.90" fill="#3a4a78"/>
<rect x="390.15" y="428.62" width="3.90" height="3.90" fill="#cfe46e"/>
<rect x="394.02" y="428.62" width="3.90" height="3.90" fill="#8cc552"/>
<rect x="552.90" y="428.62" width="3.90" height="3.90" fill="#8cc552"/>
<rect x="556.77" y="428.62" width="3.90" height="3.90" fill="#cfe46e"/>
<rect x="560.65" y="428.62" width="7.77" height="3.90" fill="#3a4a78"/>
<rect x="382.40" y="432.50" width="3.90" height="3.90" fill="#3a4a78"/>
<rect x="386.27" y="432.50" width="3.90" height="3.90" fill="#2b2540"/>
<rect x="390.15" y="432.50" width="3.90" height="3.90" fill="#3a4a78"/>
<rect x="556.77" y="432.50" width="3.90" height="3.90" fill="#3a4a78"/>
<rect x="560.65" y="432.50" width="3.90" height="3.90" fill="#2b2540"/>
<rect x="564.52" y="432.50" width="3.90" height="3.90" fill="#3a4a78"/>
<rect x="382.40" y="436.38" width="3.90" height="3.90" fill="#2b2540"/>
<rect x="386.27" y="436.38" width="7.77" height="3.90" fill="#cfe46e"/>
<rect x="394.02" y="436.38" width="3.90" height="3.90" fill="#8cc552"/>
<rect x="552.90" y="436.38" width="3.90" height="3.90" fill="#8cc552"/>
<rect x="556.77" y="436.38" width="7.77" height="3.90" fill="#cfe46e"/>
<rect x="564.52" y="436.38" width="3.90" height="3.90" fill="#2b2540"/>
<rect x="382.40" y="440.25" width="3.90" height="3.90" fill="#2b2540"/>
<rect x="386.27" y="440.25" width="7.77" height="3.90" fill="#8cc552"/>
<rect x="556.77" y="440.25" width="7.77" height="3.90" fill="#8cc552"/>
<rect x="564.52" y="440.25" width="3.90" height="3.90" fill="#2b2540"/>
<rect x="382.40" y="444.12" width="3.90" height="3.90" fill="#2b2540"/>
<rect x="386.27" y="444.12" width="3.90" height="3.90" fill="#3a4a78"/>
<rect x="390.15" y="444.12" width="3.90" height="3.90" fill="#2b2540"/>
<rect x="394.02" y="444.12" width="3.90" height="3.90" fill="#3a4a78"/>
<rect x="552.90" y="444.12" width="3.90" height="3.90" fill="#3a4a78"/>
<rect x="556.77" y="444.12" width="3.90" height="3.90" fill="#2b2540"/>
<rect x="560.65" y="444.12" width="3.90" height="3.90" fill="#3a4a78"/>
<rect x="564.52" y="444.12" width="3.90" height="3.90" fill="#2b2540"/>
<rect x="382.40" y="448.00" width="7.77" height="3.90" fill="#2b2540"/>
<rect x="390.15" y="448.00" width="7.77" height="3.90" fill="#8cc552"/>
<rect x="552.90" y="448.00" width="7.77" height="3.90" fill="#8cc552"/>
<rect x="560.65" y="448.00" width="7.77" height="3.90" fill="#2b2540"/>
<rect x="382.40" y="451.88" width="3.90" height="3.90" fill="#3a4a78"/>
<rect x="386.27" y="451.88" width="7.77" height="3.90" fill="#8cc552"/>
<rect x="394.02" y="451.88" width="3.90" height="3.90" fill="#cfe46e"/>
<rect x="397.90" y="451.88" width="3.90" height="3.90" fill="#8cc552"/>
<rect x="549.02" y="451.88" width="3.90" height="3.90" fill="#8cc552"/>
<rect x="552.90" y="451.88" width="3.90" height="3.90" fill="#cfe46e"/>
<rect x="556.77" y="451.88" width="7.77" height="3.90" fill="#8cc552"/>
<rect x="564.52" y="451.88" width="3.90" height="3.90" fill="#3a4a78"/>
<rect x="382.40" y="455.75" width="3.90" height="3.90" fill="#3a4a78"/>
<rect x="386.27" y="455.75" width="3.90" height="3.90" fill="#2b2540"/>
<rect x="390.15" y="455.75" width="3.90" height="3.90" fill="#3a4a78"/>
<rect x="556.77" y="455.75" width="3.90" height="3.90" fill="#3a4a78"/>
<rect x="560.65" y="455.75" width="3.90" height="3.90" fill="#2b2540"/>
<rect x="564.52" y="455.75" width="3.90" height="3.90" fill="#3a4a78"/>
<rect x="382.40" y="459.62" width="3.90" height="3.90" fill="#2b2540"/>
<rect x="386.27" y="459.62" width="3.90" height="3.90" fill="#8cc552"/>
<rect x="390.15" y="459.62" width="3.90" height="3.90" fill="#cfe46e"/>
<rect x="394.02" y="459.62" width="3.90" height="3.90" fill="#8cc552"/>
<rect x="552.90" y="459.62" width="3.90" height="3.90" fill="#8cc552"/>
<rect x="556.77" y="459.62" width="3.90" height="3.90" fill="#cfe46e"/>
<rect x="560.65" y="459.62" width="3.90" height="3.90" fill="#8cc552"/>
<rect x="564.52" y="459.62" width="3.90" height="3.90" fill="#2b2540"/>
<rect x="382.40" y="463.50" width="3.90" height="3.90" fill="#2b2540"/>
<rect x="386.27" y="463.50" width="3.90" height="3.90" fill="#8cc552"/>
<rect x="390.15" y="463.50" width="3.90" height="3.90" fill="#cfe46e"/>
<rect x="394.02" y="463.50" width="3.90" height="3.90" fill="#8cc552"/>
<rect x="432.77" y="463.50" width="3.90" height="3.90" fill="#3a4a78"/>
<rect x="436.65" y="463.50" width="7.77" height="3.90" fill="#2b2540"/>
<rect x="552.90" y="463.50" width="3.90" height="3.90" fill="#8cc552"/>
<rect x="556.77" y="463.50" width="3.90" height="3.90" fill="#cfe46e"/>
<rect x="560.65" y="463.50" width="3.90" height="3.90" fill="#8cc552"/>
<rect x="564.52" y="463.50" width="3.90" height="3.90" fill="#2b2540"/>
<rect x="382.40" y="467.38" width="7.77" height="3.90" fill="#2b2540"/>
<rect x="390.15" y="467.38" width="7.77" height="3.90" fill="#3a4a78"/>
<rect x="428.90" y="467.38" width="3.90" height="3.90" fill="#8cc552"/>
<rect x="432.77" y="467.38" width="3.90" height="3.90" fill="#cfe46e"/>
<rect x="436.65" y="467.38" width="3.90" height="3.90" fill="#3a4a78"/>
<rect x="440.52" y="467.38" width="3.90" height="3.90" fill="#cfe46e"/>
<rect x="552.90" y="467.38" width="7.77" height="3.90" fill="#3a4a78"/>
<rect x="560.65" y="467.38" width="7.77" height="3.90" fill="#2b2540"/>
<rect x="382.40" y="471.25" width="3.90" height="3.90" fill="#2b2540"/>
<rect x="386.27" y="471.25" width="11.64" height="3.90" fill="#8cc552"/>
<rect x="425.02" y="471.25" width="3.90" height="3.90" fill="#8cc552"/>
<rect x="428.90" y="471.25" width="3.90" height="3.90" fill="#cfe46e"/>
<rect x="432.77" y="471.25" width="3.90" height="3.90" fill="#8cc552"/>
<rect x="440.52" y="471.25" width="3.90" height="3.90" fill="#8cc552"/>
<rect x="552.90" y="471.25" width="11.64" height="3.90" fill="#8cc552"/>
<rect x="564.52" y="471.25" width="3.90" height="3.90" fill="#2b2540"/>
<rect x="382.40" y="475.12" width="3.90" height="3.90" fill="#3a4a78"/>
<rect x="386.27" y="475.12" width="3.90" height="3.90" fill="#8cc552"/>
<rect x="390.15" y="475.12" width="7.77" height="3.90" fill="#cfe46e"/>
<rect x="397.90" y="475.12" width="3.90" height="3.90" fill="#8cc552"/>
<rect x="428.90" y="475.12" width="7.77" height="3.90" fill="#8cc552"/>
<rect x="549.02" y="475.12" width="3.90" height="3.90" fill="#8cc552"/>
<rect x="552.90" y="475.12" width="7.77" height="3.90" fill="#cfe46e"/>
<rect x="560.65" y="475.12" width="3.90" height="3.90" fill="#8cc552"/>
<rect x="564.52" y="475.12" width="3.90" height="3.90" fill="#3a4a78"/>
<rect x="382.40" y="479.00" width="3.90" height="3.90" fill="#3a4a78"/>
<rect x="386.27" y="479.00" width="3.90" height="3.90" fill="#2b2540"/>
<rect x="390.15" y="479.00" width="3.90" height="3.90" fill="#3a4a78"/>
<rect x="556.77" y="479.00" width="3.90" height="3.90" fill="#3a4a78"/>
<rect x="560.65" y="479.00" width="3.90" height="3.90" fill="#2b2540"/>
<rect x="564.52" y="479.00" width="3.90" height="3.90" fill="#3a4a78"/>
<rect x="382.40" y="482.88" width="3.90" height="3.90" fill="#2b2540"/>
<rect x="386.27" y="482.88" width="3.90" height="3.90" fill="#8cc552"/>
<rect x="390.15" y="482.88" width="3.90" height="3.90" fill="#cfe46e"/>
<rect x="394.02" y="482.88" width="3.90" height="3.90" fill="#8cc552"/>
<rect x="552.90" y="482.88" width="3.90" height="3.90" fill="#8cc552"/>
<rect x="556.77" y="482.88" width="3.90" height="3.90" fill="#cfe46e"/>
<rect x="560.65" y="482.88" width="3.90" height="3.90" fill="#8cc552"/>
<rect x="564.52" y="482.88" width="3.90" height="3.90" fill="#2b2540"/>
<rect x="382.40" y="486.75" width="3.90" height="3.90" fill="#2b2540"/>
<rect x="386.27" y="486.75" width="7.77" height="3.90" fill="#8cc552"/>
<rect x="556.77" y="486.75" width="7.77" height="3.90" fill="#8cc552"/>
<rect x="564.52" y="486.75" width="3.90" height="3.90" fill="#2b2540"/>
<rect x="382.40" y="490.62" width="7.77" height="3.90" fill="#3a4a78"/>
<rect x="390.15" y="490.62" width="3.90" height="3.90" fill="#cfe46e"/>
<rect x="394.02" y="490.62" width="3.90" height="3.90" fill="#8cc552"/>
<rect x="552.90" y="490.62" width="3.90" height="3.90" fill="#8cc552"/>
<rect x="556.77" y="490.62" width="3.90" height="3.90" fill="#cfe46e"/>
<rect x="560.65" y="490.62" width="7.77" height="3.90" fill="#3a4a78"/>
<rect x="382.40" y="494.50" width="3.90" height="3.90" fill="#2b2540"/>
<rect x="386.27" y="494.50" width="3.90" height="3.90" fill="#3a4a78"/>
<rect x="390.15" y="494.50" width="3.90" height="3.90" fill="#2b2540"/>
<rect x="448.27" y="494.50" width="3.90" height="3.90" fill="#8cc552"/>
<rect x="471.52" y="494.50" width="3.90" height="3.90" fill="#8cc552"/>
<rect x="494.77" y="494.50" width="3.90" height="3.90" fill="#8cc552"/>
<rect x="552.90" y="494.50" width="3.90" height="3.90" fill="#8cc552"/>
<rect x="556.77" y="494.50" width="3.90" height="3.90" fill="#cfe46e"/>
<rect x="560.65" y="494.50" width="3.90" height="3.90" fill="#3a4a78"/>
<rect x="564.52" y="494.50" width="3.90" height="3.90" fill="#2b2540"/>
<rect x="382.40" y="498.38" width="3.90" height="3.90" fill="#2b2540"/>
<rect x="386.27" y="498.38" width="7.77" height="3.90" fill="#cfe46e"/>
<rect x="394.02" y="498.38" width="3.90" height="3.90" fill="#8cc552"/>
<rect x="409.52" y="498.38" width="7.77" height="3.90" fill="#8cc552"/>
<rect x="425.02" y="498.38" width="3.90" height="3.90" fill="#8cc552"/>
<rect x="440.52" y="498.38" width="11.64" height="3.90" fill="#8cc552"/>
<rect x="459.90" y="498.38" width="3.90" height="3.90" fill="#8cc552"/>
<rect x="467.65" y="498.38" width="3.90" height="3.90" fill="#cfe46e"/>
<rect x="471.52" y="498.38" width="3.90" height="3.90" fill="#8cc552"/>
<rect x="494.77" y="498.38" width="3.90" height="3.90" fill="#8cc552"/>
<rect x="506.40" y="498.38" width="3.90" height="3.90" fill="#8cc552"/>
<rect x="521.90" y="498.38" width="3.90" height="3.90" fill="#8cc552"/>
<rect x="533.52" y="498.38" width="7.77" height="3.90" fill="#8cc552"/>
<rect x="552.90" y="498.38" width="3.90" height="3.90" fill="#8cc552"/>
<rect x="556.77" y="498.38" width="7.77" height="3.90" fill="#cfe46e"/>
<rect x="564.52" y="498.38" width="3.90" height="3.90" fill="#2b2540"/>
<rect x="382.40" y="502.25" width="3.90" height="3.90" fill="#2b2540"/>
<rect x="386.27" y="502.25" width="3.90" height="3.90" fill="#8cc552"/>
<rect x="390.15" y="502.25" width="3.90" height="3.90" fill="#cfe46e"/>
<rect x="397.90" y="502.25" width="7.77" height="3.90" fill="#8cc552"/>
<rect x="409.52" y="502.25" width="7.77" height="3.90" fill="#cfe46e"/>
<rect x="417.27" y="502.25" width="3.90" height="3.90" fill="#8cc552"/>
<rect x="425.02" y="502.25" width="3.90" height="3.90" fill="#cfe46e"/>
<rect x="428.90" y="502.25" width="3.90" height="3.90" fill="#8cc552"/>
<rect x="436.65" y="502.25" width="3.90" height="3.90" fill="#cfe46e"/>
<rect x="440.52" y="502.25" width="7.77" height="3.90" fill="#8cc552"/>
<rect x="448.27" y="502.25" width="3.90" height="3.90" fill="#cfe46e"/>
<rect x="456.02" y="502.25" width="3.90" height="3.90" fill="#8cc552"/>
<rect x="459.90" y="502.25" width="3.90" height="3.90" fill="#cfe46e"/>
<rect x="467.65" y="502.25" width="3.90" height="3.90" fill="#cfe46e"/>
<rect x="471.52" y="502.25" width="3.90" height="3.90" fill="#8cc552"/>
<rect x="479.27" y="502.25" width="3.90" height="3.90" fill="#8cc552"/>
<rect x="490.90" y="502.25" width="7.77" height="3.90" fill="#8cc552"/>
<rect x="498.65" y="502.25" width="3.90" height="3.90" fill="#cfe46e"/>
<rect x="506.40" y="502.25" width="3.90" height="3.90" fill="#8cc552"/>
<rect x="510.27" y="502.25" width="3.90" height="3.90" fill="#cfe46e"/>
<rect x="518.02" y="502.25" width="3.90" height="3.90" fill="#8cc552"/>
<rect x="521.90" y="502.25" width="3.90" height="3.90" fill="#cfe46e"/>
<rect x="529.65" y="502.25" width="3.90" height="3.90" fill="#8cc552"/>
<rect x="533.52" y="502.25" width="7.77" height="3.90" fill="#cfe46e"/>
<rect x="545.15" y="502.25" width="7.77" height="3.90" fill="#8cc552"/>
<rect x="556.77" y="502.25" width="7.77" height="3.90" fill="#8cc552"/>
<rect x="564.52" y="502.25" width="3.90" height="3.90" fill="#2b2540"/>
<rect x="382.40" y="506.12" width="7.77" height="3.90" fill="#3a4a78"/>
<rect x="390.15" y="506.12" width="3.90" height="3.90" fill="#2b2540"/>
<rect x="394.02" y="506.12" width="3.90" height="3.90" fill="#3a4a78"/>
<rect x="397.90" y="506.12" width="7.77" height="3.90" fill="#cfe46e"/>
<rect x="405.65" y="506.12" width="3.90" height="3.90" fill="#3a4a78"/>
<rect x="409.52" y="506.12" width="3.90" height="3.90" fill="#8cc552"/>
<rect x="417.27" y="506.12" width="3.90" height="3.90" fill="#8cc552"/>
<rect x="421.15" y="506.12" width="3.90" height="3.90" fill="#3a4a78"/>
<rect x="425.02" y="506.12" width="7.77" height="3.90" fill="#cfe46e"/>
<rect x="432.77" y="506.12" width="3.90" height="3.90" fill="#3a4a78"/>
<rect x="436.65" y="506.12" width="3.90" height="3.90" fill="#8cc552"/>
<rect x="452.15" y="506.12" width="3.90" height="3.90" fill="#3a4a78"/>
<rect x="456.02" y="506.12" width="3.90" height="3.90" fill="#8cc552"/>
<rect x="463.77" y="506.12" width="3.90" height="3.90" fill="#3a4a78"/>
<rect x="475.40" y="506.12" width="3.90" height="3.90" fill="#3a4a78"/>
<rect x="479.27" y="506.12" width="3.90" height="3.90" fill="#8cc552"/>
<rect x="483.15" y="506.12" width="3.90" height="3.90" fill="#cfe46e"/>
<rect x="487.02" y="506.12" width="3.90" height="3.90" fill="#3a4a78"/>
<rect x="494.77" y="506.12" width="3.90" height="3.90" fill="#cfe46e"/>
<rect x="502.52" y="506.12" width="3.90" height="3.90" fill="#3a4a78"/>
<rect x="510.27" y="506.12" width="3.90" height="3.90" fill="#8cc552"/>
<rect x="514.15" y="506.12" width="3.90" height="3.90" fill="#3a4a78"/>
<rect x="518.02" y="506.12" width="7.77" height="3.90" fill="#cfe46e"/>
<rect x="525.77" y="506.12" width="3.90" height="3.90" fill="#3a4a78"/>
<rect x="529.65" y="506.12" width="3.90" height="3.90" fill="#8cc552"/>
<rect x="537.40" y="506.12" width="3.90" height="3.90" fill="#8cc552"/>
<rect x="541.27" y="506.12" width="3.90" height="3.90" fill="#3a4a78"/>
<rect x="545.15" y="506.12" width="7.77" height="3.90" fill="#cfe46e"/>
<rect x="552.90" y="506.12" width="3.90" height="3.90" fill="#3a4a78"/>
<rect x="556.77" y="506.12" width="3.90" height="3.90" fill="#2b2540"/>
<rect x="560.65" y="506.12" width="3.90" height="3.90" fill="#3a4a78"/>
<rect x="564.52" y="506.12" width="3.90" height="3.90" fill="#2b2540"/>
<rect x="382.40" y="510.00" width="7.77" height="3.90" fill="#2b2540"/>
<rect x="390.15" y="510.00" width="7.77" height="3.90" fill="#8cc552"/>
<rect x="401.77" y="510.00" width="3.90" height="3.90" fill="#8cc552"/>
<rect x="405.65" y="510.00" width="3.90" height="3.90" fill="#3a4a78"/>
<rect x="421.15" y="510.00" width="3.90" height="3.90" fill="#3a4a78"/>
<rect x="428.90" y="510.00" width="3.90" height="3.90" fill="#8cc552"/>
<rect x="432.77" y="510.00" width="3.90" height="3.90" fill="#3a4a78"/>
<rect x="452.15" y="510.00" width="3.90" height="3.90" fill="#2b2540"/>
<rect x="463.77" y="510.00" width="3.90" height="3.90" fill="#3a4a78"/>
<rect x="467.65" y="510.00" width="7.77" height="3.90" fill="#2b2540"/>
<rect x="475.40" y="510.00" width="3.90" height="3.90" fill="#3a4a78"/>
<rect x="487.02" y="510.00" width="3.90" height="3.90" fill="#2b2540"/>
<rect x="502.52" y="510.00" width="3.90" height="3.90" fill="#2b2540"/>
<rect x="514.15" y="510.00" width="3.90" height="3.90" fill="#3a4a78"/>
<rect x="518.02" y="510.00" width="3.90" height="3.90" fill="#8cc552"/>
<rect x="525.77" y="510.00" width="3.90" height="3.90" fill="#3a4a78"/>
<rect x="541.27" y="510.00" width="3.90" height="3.90" fill="#3a4a78"/>
<rect x="545.15" y="510.00" width="3.90" height="3.90" fill="#8cc552"/>
<rect x="552.90" y="510.00" width="7.77" height="3.90" fill="#8cc552"/>
<rect x="560.65" y="510.00" width="7.77" height="3.90" fill="#2b2540"/>
<rect x="382.40" y="513.88" width="3.90" height="3.90" fill="#2b2540"/>
<rect x="386.27" y="513.88" width="3.90" height="3.90" fill="#3a4a78"/>
<rect x="390.15" y="513.88" width="7.77" height="3.90" fill="#cfe46e"/>
<rect x="397.90" y="513.88" width="3.90" height="3.90" fill="#3a4a78"/>
<rect x="405.65" y="513.88" width="3.90" height="3.90" fill="#2b2540"/>
<rect x="409.52" y="513.88" width="7.77" height="3.90" fill="#3a4a78"/>
<rect x="417.27" y="513.88" width="7.77" height="3.90" fill="#2b2540"/>
<rect x="432.77" y="513.88" width="7.77" height="3.90" fill="#2b2540"/>
<rect x="440.52" y="513.88" width="7.77" height="3.90" fill="#3a4a78"/>
<rect x="448.27" y="513.88" width="7.77" height="3.90" fill="#2b2540"/>
<rect x="463.77" y="513.88" width="7.77" height="3.90" fill="#2b2540"/>
<rect x="471.52" y="513.88" width="3.90" height="3.90" fill="#3a4a78"/>
<rect x="475.40" y="513.88" width="3.90" height="3.90" fill="#2b2540"/>
<rect x="487.02" y="513.88" width="15.52" height="3.90" fill="#2b2540"/>
<rect x="502.52" y="513.88" width="7.77" height="3.90" fill="#3a4a78"/>
<rect x="510.27" y="513.88" width="7.77" height="3.90" fill="#2b2540"/>
<rect x="525.77" y="513.88" width="7.77" height="3.90" fill="#2b2540"/>
<rect x="533.52" y="513.88" width="7.77" height="3.90" fill="#3a4a78"/>
<rect x="541.27" y="513.88" width="3.90" height="3.90" fill="#2b2540"/>
<rect x="549.02" y="513.88" width="3.90" height="3.90" fill="#3a4a78"/>
<rect x="552.90" y="513.88" width="7.77" height="3.90" fill="#cfe46e"/>
<rect x="560.65" y="513.88" width="3.90" height="3.90" fill="#3a4a78"/>
<rect x="564.52" y="513.88" width="3.90" height="3.90" fill="#2b2540"/>
<rect x="382.40" y="517.75" width="7.77" height="3.90" fill="#2b2540"/>
<rect x="390.15" y="517.75" width="3.90" height="3.90" fill="#3a4a78"/>
<rect x="397.90" y="517.75" width="3.90" height="3.90" fill="#3a4a78"/>
<rect x="401.77" y="517.75" width="11.64" height="3.90" fill="#2b2540"/>
<rect x="413.40" y="517.75" width="7.77" height="3.90" fill="#3a4a78"/>
<rect x="421.15" y="517.75" width="3.90" height="3.90" fill="#2b2540"/>
<rect x="432.77" y="517.75" width="3.90" height="3.90" fill="#2b2540"/>
<rect x="436.65" y="517.75" width="19.39" height="3.90" fill="#3a4a78"/>
<rect x="456.02" y="517.75" width="15.52" height="3.90" fill="#2b2540"/>
<rect x="471.52" y="517.75" width="7.77" height="3.90" fill="#3a4a78"/>
<rect x="479.27" y="517.75" width="3.90" height="3.90" fill="#2b2540"/>
<rect x="483.15" y="517.75" width="31.02" height="3.90" fill="#3a4a78"/>
<rect x="514.15" y="517.75" width="3.90" height="3.90" fill="#2b2540"/>
<rect x="525.77" y="517.75" width="3.90" height="3.90" fill="#2b2540"/>
<rect x="529.65" y="517.75" width="7.77" height="3.90" fill="#3a4a78"/>
<rect x="537.40" y="517.75" width="11.64" height="3.90" fill="#2b2540"/>
<rect x="549.02" y="517.75" width="3.90" height="3.90" fill="#3a4a78"/>
<rect x="556.77" y="517.75" width="3.90" height="3.90" fill="#3a4a78"/>
<rect x="560.65" y="517.75" width="7.77" height="3.90" fill="#2b2540"/>
<rect x="382.40" y="521.62" width="19.39" height="3.90" fill="#2b2540"/>
<rect x="401.77" y="521.62" width="7.77" height="3.90" fill="#7ea6d6"/>
<rect x="409.52" y="521.62" width="3.90" height="3.90" fill="#2b2540"/>
<rect x="413.40" y="521.62" width="7.77" height="3.90" fill="#7ea6d6"/>
<rect x="421.15" y="521.62" width="3.90" height="3.90" fill="#3a4a78"/>
<rect x="425.02" y="521.62" width="3.90" height="3.90" fill="#2b2540"/>
<rect x="428.90" y="521.62" width="7.77" height="3.90" fill="#3a4a78"/>
<rect x="436.65" y="521.62" width="7.77" height="3.90" fill="#7ea6d6"/>
<rect x="444.40" y="521.62" width="3.90" height="3.90" fill="#3a4a78"/>
<rect x="448.27" y="521.62" width="15.52" height="3.90" fill="#7ea6d6"/>
<rect x="463.77" y="521.62" width="3.90" height="3.90" fill="#3a4a78"/>
<rect x="467.65" y="521.62" width="7.77" height="3.90" fill="#7ea6d6"/>
<rect x="475.40" y="521.62" width="7.77" height="3.90" fill="#2b2540"/>
<rect x="483.15" y="521.62" width="19.39" height="3.90" fill="#7ea6d6"/>
<rect x="502.52" y="521.62" width="3.90" height="3.90" fill="#3a4a78"/>
<rect x="506.40" y="521.62" width="7.77" height="3.90" fill="#7ea6d6"/>
<rect x="514.15" y="521.62" width="7.77" height="3.90" fill="#3a4a78"/>
<rect x="521.90" y="521.62" width="3.90" height="3.90" fill="#2b2540"/>
<rect x="525.77" y="521.62" width="3.90" height="3.90" fill="#3a4a78"/>
<rect x="529.65" y="521.62" width="7.77" height="3.90" fill="#7ea6d6"/>
<rect x="537.40" y="521.62" width="3.90" height="3.90" fill="#2b2540"/>
<rect x="541.27" y="521.62" width="7.77" height="3.90" fill="#7ea6d6"/>
<rect x="549.02" y="521.62" width="19.39" height="3.90" fill="#2b2540"/></g>
<g filter="url(#bl)"><rect x="173.18" y="277.20" width="7.77" height="3.90" fill="#5b406c"/>
<rect x="397.93" y="277.20" width="7.77" height="3.90" fill="#5b406c"/>
<rect x="169.30" y="281.07" width="3.90" height="3.90" fill="#5b406c"/>
<rect x="173.18" y="281.07" width="7.77" height="3.90" fill="#d0845a"/>
<rect x="180.93" y="281.07" width="3.90" height="3.90" fill="#5b406c"/>
<rect x="184.80" y="281.07" width="209.27" height="3.90" fill="#33283f"/>
<rect x="394.05" y="281.07" width="3.90" height="3.90" fill="#5b406c"/>
<rect x="397.93" y="281.07" width="7.77" height="3.90" fill="#d0845a"/>
<rect x="405.68" y="281.07" width="3.90" height="3.90" fill="#5b406c"/>
<rect x="169.30" y="284.95" width="3.90" height="3.90" fill="#5b406c"/>
<rect x="173.18" y="284.95" width="7.77" height="3.90" fill="#d0845a"/>
<rect x="180.93" y="284.95" width="3.90" height="3.90" fill="#5b406c"/>
<rect x="184.80" y="284.95" width="7.77" height="3.90" fill="#a85a5e"/>
<rect x="192.55" y="284.95" width="3.90" height="3.90" fill="#33283f"/>
<rect x="196.43" y="284.95" width="11.64" height="3.90" fill="#a85a5e"/>
<rect x="208.05" y="284.95" width="3.90" height="3.90" fill="#33283f"/>
<rect x="211.93" y="284.95" width="11.64" height="3.90" fill="#a85a5e"/>
<rect x="223.55" y="284.95" width="3.90" height="3.90" fill="#33283f"/>
<rect x="227.43" y="284.95" width="11.64" height="3.90" fill="#a85a5e"/>
<rect x="239.05" y="284.95" width="3.90" height="3.90" fill="#33283f"/>
<rect x="242.93" y="284.95" width="11.64" height="3.90" fill="#a85a5e"/>
<rect x="254.55" y="284.95" width="3.90" height="3.90" fill="#33283f"/>
<rect x="258.43" y="284.95" width="11.64" height="3.90" fill="#a85a5e"/>
<rect x="270.05" y="284.95" width="3.90" height="3.90" fill="#33283f"/>
<rect x="273.93" y="284.95" width="11.64" height="3.90" fill="#a85a5e"/>
<rect x="285.55" y="284.95" width="3.90" height="3.90" fill="#33283f"/>
<rect x="289.43" y="284.95" width="11.64" height="3.90" fill="#a85a5e"/>
<rect x="301.05" y="284.95" width="3.90" height="3.90" fill="#33283f"/>
<rect x="304.93" y="284.95" width="11.64" height="3.90" fill="#a85a5e"/>
<rect x="316.55" y="284.95" width="3.90" height="3.90" fill="#33283f"/>
<rect x="320.43" y="284.95" width="11.64" height="3.90" fill="#a85a5e"/>
<rect x="332.05" y="284.95" width="3.90" height="3.90" fill="#33283f"/>
<rect x="335.93" y="284.95" width="11.64" height="3.90" fill="#a85a5e"/>
<rect x="347.55" y="284.95" width="3.90" height="3.90" fill="#33283f"/>
<rect x="351.43" y="284.95" width="11.64" height="3.90" fill="#a85a5e"/>
<rect x="363.05" y="284.95" width="3.90" height="3.90" fill="#33283f"/>
<rect x="366.93" y="284.95" width="11.64" height="3.90" fill="#a85a5e"/>
<rect x="378.55" y="284.95" width="3.90" height="3.90" fill="#33283f"/>
<rect x="382.43" y="284.95" width="11.64" height="3.90" fill="#a85a5e"/>
<rect x="394.05" y="284.95" width="3.90" height="3.90" fill="#5b406c"/>
<rect x="397.93" y="284.95" width="7.77" height="3.90" fill="#d0845a"/>
<rect x="405.68" y="284.95" width="3.90" height="3.90" fill="#5b406c"/>
<rect x="169.30" y="288.82" width="3.90" height="3.90" fill="#5b406c"/>
<rect x="173.18" y="288.82" width="7.77" height="3.90" fill="#a85a5e"/>
<rect x="180.93" y="288.82" width="11.64" height="3.90" fill="#5b406c"/>
<rect x="192.55" y="288.82" width="3.90" height="3.90" fill="#33283f"/>
<rect x="196.43" y="288.82" width="11.64" height="3.90" fill="#5b406c"/>
<rect x="208.05" y="288.82" width="3.90" height="3.90" fill="#33283f"/>
<rect x="211.93" y="288.82" width="11.64" height="3.90" fill="#5b406c"/>
<rect x="223.55" y="288.82" width="3.90" height="3.90" fill="#33283f"/>
<rect x="227.43" y="288.82" width="11.64" height="3.90" fill="#5b406c"/>
<rect x="239.05" y="288.82" width="3.90" height="3.90" fill="#33283f"/>
<rect x="242.93" y="288.82" width="11.64" height="3.90" fill="#5b406c"/>
<rect x="254.55" y="288.82" width="3.90" height="3.90" fill="#33283f"/>
<rect x="258.43" y="288.82" width="11.64" height="3.90" fill="#5b406c"/>
<rect x="270.05" y="288.82" width="3.90" height="3.90" fill="#33283f"/>
<rect x="273.93" y="288.82" width="11.64" height="3.90" fill="#5b406c"/>
<rect x="285.55" y="288.82" width="3.90" height="3.90" fill="#33283f"/>
<rect x="289.43" y="288.82" width="11.64" height="3.90" fill="#5b406c"/>
<rect x="301.05" y="288.82" width="3.90" height="3.90" fill="#33283f"/>
<rect x="304.93" y="288.82" width="11.64" height="3.90" fill="#5b406c"/>
<rect x="316.55" y="288.82" width="3.90" height="3.90" fill="#33283f"/>
<rect x="320.43" y="288.82" width="11.64" height="3.90" fill="#5b406c"/>
<rect x="332.05" y="288.82" width="3.90" height="3.90" fill="#33283f"/>
<rect x="335.93" y="288.82" width="11.64" height="3.90" fill="#5b406c"/>
<rect x="347.55" y="288.82" width="3.90" height="3.90" fill="#33283f"/>
<rect x="351.43" y="288.82" width="11.64" height="3.90" fill="#5b406c"/>
<rect x="363.05" y="288.82" width="3.90" height="3.90" fill="#33283f"/>
<rect x="366.93" y="288.82" width="11.64" height="3.90" fill="#5b406c"/>
<rect x="378.55" y="288.82" width="3.90" height="3.90" fill="#33283f"/>
<rect x="382.43" y="288.82" width="15.52" height="3.90" fill="#5b406c"/>
<rect x="397.93" y="288.82" width="7.77" height="3.90" fill="#a85a5e"/>
<rect x="405.68" y="288.82" width="3.90" height="3.90" fill="#5b406c"/>
<rect x="169.30" y="292.70" width="15.52" height="3.90" fill="#5b406c"/>
<rect x="184.80" y="292.70" width="7.77" height="3.90" fill="#8d4f5f"/>
<rect x="192.55" y="292.70" width="3.90" height="3.90" fill="#5b406c"/>
<rect x="196.43" y="292.70" width="11.64" height="3.90" fill="#8d4f5f"/>
<rect x="208.05" y="292.70" width="3.90" height="3.90" fill="#5b406c"/>
<rect x="211.93" y="292.70" width="11.64" height="3.90" fill="#8d4f5f"/>
<rect x="223.55" y="292.70" width="3.90" height="3.90" fill="#5b406c"/>
<rect x="227.43" y="292.70" width="11.64" height="3.90" fill="#8d4f5f"/>
<rect x="239.05" y="292.70" width="3.90" height="3.90" fill="#5b406c"/>
<rect x="242.93" y="292.70" width="11.64" height="3.90" fill="#8d4f5f"/>
<rect x="254.55" y="292.70" width="3.90" height="3.90" fill="#5b406c"/>
<rect x="258.43" y="292.70" width="11.64" height="3.90" fill="#8d4f5f"/>
<rect x="270.05" y="292.70" width="3.90" height="3.90" fill="#5b406c"/>
<rect x="273.93" y="292.70" width="11.64" height="3.90" fill="#8d4f5f"/>
<rect x="285.55" y="292.70" width="3.90" height="3.90" fill="#5b406c"/>
<rect x="289.43" y="292.70" width="11.64" height="3.90" fill="#8d4f5f"/>
<rect x="301.05" y="292.70" width="3.90" height="3.90" fill="#5b406c"/>
<rect x="304.93" y="292.70" width="11.64" height="3.90" fill="#8d4f5f"/>
<rect x="316.55" y="292.70" width="3.90" height="3.90" fill="#5b406c"/>
<rect x="320.43" y="292.70" width="11.64" height="3.90" fill="#8d4f5f"/>
<rect x="332.05" y="292.70" width="3.90" height="3.90" fill="#5b406c"/>
<rect x="335.93" y="292.70" width="11.64" height="3.90" fill="#8d4f5f"/>
<rect x="347.55" y="292.70" width="3.90" height="3.90" fill="#5b406c"/>
<rect x="351.43" y="292.70" width="11.64" height="3.90" fill="#8d4f5f"/>
<rect x="363.05" y="292.70" width="3.90" height="3.90" fill="#5b406c"/>
<rect x="366.93" y="292.70" width="11.64" height="3.90" fill="#8d4f5f"/>
<rect x="378.55" y="292.70" width="3.90" height="3.90" fill="#5b406c"/>
<rect x="382.43" y="292.70" width="11.64" height="3.90" fill="#8d4f5f"/>
<rect x="394.05" y="292.70" width="15.52" height="3.90" fill="#5b406c"/>
<rect x="173.18" y="296.57" width="7.77" height="3.90" fill="#5b406c"/>
<rect x="180.93" y="296.57" width="11.64" height="3.90" fill="#8d4f5f"/>
<rect x="192.55" y="296.57" width="3.90" height="3.90" fill="#5b406c"/>
<rect x="196.43" y="296.57" width="11.64" height="3.90" fill="#8d4f5f"/>
<rect x="208.05" y="296.57" width="3.90" height="3.90" fill="#5b406c"/>
<rect x="211.93" y="296.57" width="11.64" height="3.90" fill="#8d4f5f"/>
<rect x="223.55" y="296.57" width="3.90" height="3.90" fill="#5b406c"/>
<rect x="227.43" y="296.57" width="11.64" height="3.90" fill="#8d4f5f"/>
<rect x="239.05" y="296.57" width="3.90" height="3.90" fill="#5b406c"/>
<rect x="242.93" y="296.57" width="11.64" height="3.90" fill="#8d4f5f"/>
<rect x="254.55" y="296.57" width="3.90" height="3.90" fill="#5b406c"/>
<rect x="258.43" y="296.57" width="11.64" height="3.90" fill="#8d4f5f"/>
<rect x="270.05" y="296.57" width="3.90" height="3.90" fill="#5b406c"/>
<rect x="273.93" y="296.57" width="11.64" height="3.90" fill="#8d4f5f"/>
<rect x="285.55" y="296.57" width="3.90" height="3.90" fill="#5b406c"/>
<rect x="289.43" y="296.57" width="11.64" height="3.90" fill="#8d4f5f"/>
<rect x="301.05" y="296.57" width="3.90" height="3.90" fill="#5b406c"/>
<rect x="304.93" y="296.57" width="11.64" height="3.90" fill="#8d4f5f"/>
<rect x="316.55" y="296.57" width="3.90" height="3.90" fill="#5b406c"/>
<rect x="320.43" y="296.57" width="11.64" height="3.90" fill="#8d4f5f"/>
<rect x="332.05" y="296.57" width="3.90" height="3.90" fill="#5b406c"/>
<rect x="335.93" y="296.57" width="11.64" height="3.90" fill="#8d4f5f"/>
<rect x="347.55" y="296.57" width="3.90" height="3.90" fill="#5b406c"/>
<rect x="351.43" y="296.57" width="11.64" height="3.90" fill="#8d4f5f"/>
<rect x="363.05" y="296.57" width="3.90" height="3.90" fill="#5b406c"/>
<rect x="366.93" y="296.57" width="11.64" height="3.90" fill="#8d4f5f"/>
<rect x="378.55" y="296.57" width="3.90" height="3.90" fill="#5b406c"/>
<rect x="382.43" y="296.57" width="15.52" height="3.90" fill="#8d4f5f"/>
<rect x="397.93" y="296.57" width="7.77" height="3.90" fill="#5b406c"/>
<rect x="180.93" y="300.45" width="11.64" height="3.90" fill="#8d4f5f"/>
<rect x="192.55" y="300.45" width="3.90" height="3.90" fill="#5b406c"/>
<rect x="196.43" y="300.45" width="11.64" height="3.90" fill="#8d4f5f"/>
<rect x="208.05" y="300.45" width="3.90" height="3.90" fill="#5b406c"/>
<rect x="211.93" y="300.45" width="11.64" height="3.90" fill="#8d4f5f"/>
<rect x="223.55" y="300.45" width="3.90" height="3.90" fill="#5b406c"/>
<rect x="227.43" y="300.45" width="11.64" height="3.90" fill="#8d4f5f"/>
<rect x="239.05" y="300.45" width="3.90" height="3.90" fill="#5b406c"/>
<rect x="242.93" y="300.45" width="11.64" height="3.90" fill="#8d4f5f"/>
<rect x="254.55" y="300.45" width="3.90" height="3.90" fill="#5b406c"/>
<rect x="258.43" y="300.45" width="11.64" height="3.90" fill="#8d4f5f"/>
<rect x="270.05" y="300.45" width="3.90" height="3.90" fill="#5b406c"/>
<rect x="273.93" y="300.45" width="11.64" height="3.90" fill="#8d4f5f"/>
<rect x="285.55" y="300.45" width="3.90" height="3.90" fill="#5b406c"/>
<rect x="289.43" y="300.45" width="11.64" height="3.90" fill="#8d4f5f"/>
<rect x="301.05" y="300.45" width="3.90" height="3.90" fill="#5b406c"/>
<rect x="304.93" y="300.45" width="11.64" height="3.90" fill="#8d4f5f"/>
<rect x="316.55" y="300.45" width="3.90" height="3.90" fill="#5b406c"/>
<rect x="320.43" y="300.45" width="11.64" height="3.90" fill="#8d4f5f"/>
<rect x="332.05" y="300.45" width="3.90" height="3.90" fill="#5b406c"/>
<rect x="335.93" y="300.45" width="11.64" height="3.90" fill="#8d4f5f"/>
<rect x="347.55" y="300.45" width="3.90" height="3.90" fill="#5b406c"/>
<rect x="351.43" y="300.45" width="11.64" height="3.90" fill="#8d4f5f"/>
<rect x="363.05" y="300.45" width="3.90" height="3.90" fill="#5b406c"/>
<rect x="366.93" y="300.45" width="11.64" height="3.90" fill="#8d4f5f"/>
<rect x="378.55" y="300.45" width="3.90" height="3.90" fill="#5b406c"/>
<rect x="382.43" y="300.45" width="15.52" height="3.90" fill="#8d4f5f"/>
<rect x="180.93" y="304.32" width="3.90" height="3.90" fill="#5b406c"/>
<rect x="184.80" y="304.32" width="7.77" height="3.90" fill="#8d4f5f"/>
<rect x="192.55" y="304.32" width="3.90" height="3.90" fill="#5b406c"/>
<rect x="196.43" y="304.32" width="11.64" height="3.90" fill="#8d4f5f"/>
<rect x="208.05" y="304.32" width="3.90" height="3.90" fill="#5b406c"/>
<rect x="211.93" y="304.32" width="11.64" height="3.90" fill="#8d4f5f"/>
<rect x="223.55" y="304.32" width="3.90" height="3.90" fill="#5b406c"/>
<rect x="227.43" y="304.32" width="11.64" height="3.90" fill="#8d4f5f"/>
<rect x="239.05" y="304.32" width="3.90" height="3.90" fill="#5b406c"/>
<rect x="242.93" y="304.32" width="11.64" height="3.90" fill="#8d4f5f"/>
<rect x="254.55" y="304.32" width="3.90" height="3.90" fill="#5b406c"/>
<rect x="258.43" y="304.32" width="11.64" height="3.90" fill="#8d4f5f"/>
<rect x="270.05" y="304.32" width="3.90" height="3.90" fill="#5b406c"/>
<rect x="273.93" y="304.32" width="11.64" height="3.90" fill="#8d4f5f"/>
<rect x="285.55" y="304.32" width="3.90" height="3.90" fill="#5b406c"/>
<rect x="289.43" y="304.32" width="11.64" height="3.90" fill="#8d4f5f"/>
<rect x="301.05" y="304.32" width="3.90" height="3.90" fill="#5b406c"/>
<rect x="304.93" y="304.32" width="11.64" height="3.90" fill="#8d4f5f"/>
<rect x="316.55" y="304.32" width="3.90" height="3.90" fill="#5b406c"/>
<rect x="320.43" y="304.32" width="11.64" height="3.90" fill="#8d4f5f"/>
<rect x="332.05" y="304.32" width="3.90" height="3.90" fill="#5b406c"/>
<rect x="335.93" y="304.32" width="11.64" height="3.90" fill="#8d4f5f"/>
<rect x="347.55" y="304.32" width="3.90" height="3.90" fill="#5b406c"/>
<rect x="351.43" y="304.32" width="11.64" height="3.90" fill="#8d4f5f"/>
<rect x="363.05" y="304.32" width="3.90" height="3.90" fill="#5b406c"/>
<rect x="366.93" y="304.32" width="11.64" height="3.90" fill="#8d4f5f"/>
<rect x="378.55" y="304.32" width="3.90" height="3.90" fill="#5b406c"/>
<rect x="382.43" y="304.32" width="11.64" height="3.90" fill="#8d4f5f"/>
<rect x="394.05" y="304.32" width="3.90" height="3.90" fill="#5b406c"/>
<rect x="180.93" y="308.20" width="3.90" height="3.90" fill="#5b406c"/>
<rect x="184.80" y="308.20" width="7.77" height="3.90" fill="#8d4f5f"/>
<rect x="192.55" y="308.20" width="3.90" height="3.90" fill="#5b406c"/>
<rect x="196.43" y="308.20" width="11.64" height="3.90" fill="#8d4f5f"/>
<rect x="208.05" y="308.20" width="3.90" height="3.90" fill="#5b406c"/>
<rect x="211.93" y="308.20" width="11.64" height="3.90" fill="#8d4f5f"/>
<rect x="223.55" y="308.20" width="3.90" height="3.90" fill="#5b406c"/>
<rect x="227.43" y="308.20" width="11.64" height="3.90" fill="#8d4f5f"/>
<rect x="239.05" y="308.20" width="3.90" height="3.90" fill="#5b406c"/>
<rect x="242.93" y="308.20" width="11.64" height="3.90" fill="#8d4f5f"/>
<rect x="254.55" y="308.20" width="3.90" height="3.90" fill="#5b406c"/>
<rect x="258.43" y="308.20" width="11.64" height="3.90" fill="#8d4f5f"/>
<rect x="270.05" y="308.20" width="3.90" height="3.90" fill="#5b406c"/>
<rect x="273.93" y="308.20" width="11.64" height="3.90" fill="#8d4f5f"/>
<rect x="285.55" y="308.20" width="3.90" height="3.90" fill="#5b406c"/>
<rect x="289.43" y="308.20" width="11.64" height="3.90" fill="#8d4f5f"/>
<rect x="301.05" y="308.20" width="3.90" height="3.90" fill="#5b406c"/>
<rect x="304.93" y="308.20" width="11.64" height="3.90" fill="#8d4f5f"/>
<rect x="316.55" y="308.20" width="3.90" height="3.90" fill="#5b406c"/>
<rect x="320.43" y="308.20" width="11.64" height="3.90" fill="#8d4f5f"/>
<rect x="332.05" y="308.20" width="3.90" height="3.90" fill="#5b406c"/>
<rect x="335.93" y="308.20" width="11.64" height="3.90" fill="#8d4f5f"/>
<rect x="347.55" y="308.20" width="3.90" height="3.90" fill="#5b406c"/>
<rect x="351.43" y="308.20" width="11.64" height="3.90" fill="#8d4f5f"/>
<rect x="363.05" y="308.20" width="3.90" height="3.90" fill="#5b406c"/>
<rect x="366.93" y="308.20" width="11.64" height="3.90" fill="#8d4f5f"/>
<rect x="378.55" y="308.20" width="3.90" height="3.90" fill="#5b406c"/>
<rect x="382.43" y="308.20" width="11.64" height="3.90" fill="#8d4f5f"/>
<rect x="394.05" y="308.20" width="3.90" height="3.90" fill="#5b406c"/>
<rect x="173.18" y="312.07" width="11.64" height="3.90" fill="#5b406c"/>
<rect x="184.80" y="312.07" width="7.77" height="3.90" fill="#8d4f5f"/>
<rect x="192.55" y="312.07" width="3.90" height="3.90" fill="#5b406c"/>
<rect x="196.43" y="312.07" width="11.64" height="3.90" fill="#8d4f5f"/>
<rect x="208.05" y="312.07" width="3.90" height="3.90" fill="#5b406c"/>
<rect x="211.93" y="312.07" width="11.64" height="3.90" fill="#8d4f5f"/>
<rect x="223.55" y="312.07" width="3.90" height="3.90" fill="#5b406c"/>
<rect x="227.43" y="312.07" width="11.64" height="3.90" fill="#8d4f5f"/>
<rect x="239.05" y="312.07" width="3.90" height="3.90" fill="#5b406c"/>
<rect x="242.93" y="312.07" width="11.64" height="3.90" fill="#8d4f5f"/>
<rect x="254.55" y="312.07" width="3.90" height="3.90" fill="#5b406c"/>
<rect x="258.43" y="312.07" width="11.64" height="3.90" fill="#8d4f5f"/>
<rect x="270.05" y="312.07" width="3.90" height="3.90" fill="#5b406c"/>
<rect x="273.93" y="312.07" width="11.64" height="3.90" fill="#8d4f5f"/>
<rect x="285.55" y="312.07" width="3.90" height="3.90" fill="#5b406c"/>
<rect x="289.43" y="312.07" width="11.64" height="3.90" fill="#8d4f5f"/>
<rect x="301.05" y="312.07" width="3.90" height="3.90" fill="#5b406c"/>
<rect x="304.93" y="312.07" width="11.64" height="3.90" fill="#8d4f5f"/>
<rect x="316.55" y="312.07" width="3.90" height="3.90" fill="#5b406c"/>
<rect x="320.43" y="312.07" width="11.64" height="3.90" fill="#8d4f5f"/>
<rect x="332.05" y="312.07" width="3.90" height="3.90" fill="#5b406c"/>
<rect x="335.93" y="312.07" width="11.64" height="3.90" fill="#8d4f5f"/>
<rect x="347.55" y="312.07" width="3.90" height="3.90" fill="#5b406c"/>
<rect x="351.43" y="312.07" width="11.64" height="3.90" fill="#8d4f5f"/>
<rect x="363.05" y="312.07" width="3.90" height="3.90" fill="#5b406c"/>
<rect x="366.93" y="312.07" width="11.64" height="3.90" fill="#8d4f5f"/>
<rect x="378.55" y="312.07" width="3.90" height="3.90" fill="#5b406c"/>
<rect x="382.43" y="312.07" width="11.64" height="3.90" fill="#8d4f5f"/>
<rect x="394.05" y="312.07" width="11.64" height="3.90" fill="#5b406c"/>
<rect x="169.30" y="315.95" width="3.90" height="3.90" fill="#5b406c"/>
<rect x="173.18" y="315.95" width="7.77" height="3.90" fill="#d0845a"/>
<rect x="180.93" y="315.95" width="7.77" height="3.90" fill="#5b406c"/>
<rect x="188.68" y="315.95" width="3.90" height="3.90" fill="#8d4f5f"/>
<rect x="192.55" y="315.95" width="3.90" height="3.90" fill="#5b406c"/>
<rect x="196.43" y="315.95" width="11.64" height="3.90" fill="#8d4f5f"/>
<rect x="208.05" y="315.95" width="3.90" height="3.90" fill="#5b406c"/>
<rect x="211.93" y="315.95" width="11.64" height="3.90" fill="#8d4f5f"/>
<rect x="223.55" y="315.95" width="3.90" height="3.90" fill="#5b406c"/>
<rect x="227.43" y="315.95" width="11.64" height="3.90" fill="#8d4f5f"/>
<rect x="239.05" y="315.95" width="3.90" height="3.90" fill="#5b406c"/>
<rect x="242.93" y="315.95" width="11.64" height="3.90" fill="#8d4f5f"/>
<rect x="254.55" y="315.95" width="3.90" height="3.90" fill="#5b406c"/>
<rect x="258.43" y="315.95" width="11.64" height="3.90" fill="#8d4f5f"/>
<rect x="270.05" y="315.95" width="3.90" height="3.90" fill="#5b406c"/>
<rect x="273.93" y="315.95" width="11.64" height="3.90" fill="#8d4f5f"/>
<rect x="285.55" y="315.95" width="3.90" height="3.90" fill="#5b406c"/>
<rect x="289.43" y="315.95" width="11.64" height="3.90" fill="#8d4f5f"/>
<rect x="301.05" y="315.95" width="3.90" height="3.90" fill="#5b406c"/>
<rect x="304.93" y="315.95" width="11.64" height="3.90" fill="#8d4f5f"/>
<rect x="316.55" y="315.95" width="3.90" height="3.90" fill="#5b406c"/>
<rect x="320.43" y="315.95" width="11.64" height="3.90" fill="#8d4f5f"/>
<rect x="332.05" y="315.95" width="3.90" height="3.90" fill="#5b406c"/>
<rect x="335.93" y="315.95" width="11.64" height="3.90" fill="#8d4f5f"/>
<rect x="347.55" y="315.95" width="3.90" height="3.90" fill="#5b406c"/>
<rect x="351.43" y="315.95" width="11.64" height="3.90" fill="#8d4f5f"/>
<rect x="363.05" y="315.95" width="3.90" height="3.90" fill="#5b406c"/>
<rect x="366.93" y="315.95" width="11.64" height="3.90" fill="#8d4f5f"/>
<rect x="378.55" y="315.95" width="3.90" height="3.90" fill="#5b406c"/>
<rect x="382.43" y="315.95" width="7.77" height="3.90" fill="#8d4f5f"/>
<rect x="390.18" y="315.95" width="7.77" height="3.90" fill="#5b406c"/>
<rect x="397.93" y="315.95" width="7.77" height="3.90" fill="#d0845a"/>
<rect x="405.68" y="315.95" width="3.90" height="3.90" fill="#5b406c"/>
<rect x="169.30" y="319.82" width="3.90" height="3.90" fill="#5b406c"/>
<rect x="173.18" y="319.82" width="7.77" height="3.90" fill="#d0845a"/>
<rect x="180.93" y="319.82" width="7.77" height="3.90" fill="#5b406c"/>
<rect x="188.68" y="319.82" width="3.90" height="3.90" fill="#8d4f5f"/>
<rect x="192.55" y="319.82" width="3.90" height="3.90" fill="#5b406c"/>
<rect x="196.43" y="319.82" width="11.64" height="3.90" fill="#8d4f5f"/>
<rect x="208.05" y="319.82" width="3.90" height="3.90" fill="#5b406c"/>
<rect x="211.93" y="319.82" width="11.64" height="3.90" fill="#8d4f5f"/>
<rect x="223.55" y="319.82" width="3.90" height="3.90" fill="#5b406c"/>
<rect x="227.43" y="319.82" width="11.64" height="3.90" fill="#8d4f5f"/>
<rect x="239.05" y="319.82" width="3.90" height="3.90" fill="#5b406c"/>
<rect x="242.93" y="319.82" width="11.64" height="3.90" fill="#8d4f5f"/>
<rect x="254.55" y="319.82" width="3.90" height="3.90" fill="#5b406c"/>
<rect x="258.43" y="319.82" width="11.64" height="3.90" fill="#8d4f5f"/>
<rect x="270.05" y="319.82" width="3.90" height="3.90" fill="#5b406c"/>
<rect x="273.93" y="319.82" width="11.64" height="3.90" fill="#8d4f5f"/>
<rect x="285.55" y="319.82" width="3.90" height="3.90" fill="#5b406c"/>
<rect x="289.43" y="319.82" width="11.64" height="3.90" fill="#8d4f5f"/>
<rect x="301.05" y="319.82" width="3.90" height="3.90" fill="#5b406c"/>
<rect x="304.93" y="319.82" width="11.64" height="3.90" fill="#8d4f5f"/>
<rect x="316.55" y="319.82" width="3.90" height="3.90" fill="#5b406c"/>
<rect x="320.43" y="319.82" width="11.64" height="3.90" fill="#8d4f5f"/>
<rect x="332.05" y="319.82" width="3.90" height="3.90" fill="#5b406c"/>
<rect x="335.93" y="319.82" width="11.64" height="3.90" fill="#8d4f5f"/>
<rect x="347.55" y="319.82" width="3.90" height="3.90" fill="#5b406c"/>
<rect x="351.43" y="319.82" width="11.64" height="3.90" fill="#8d4f5f"/>
<rect x="363.05" y="319.82" width="3.90" height="3.90" fill="#5b406c"/>
<rect x="366.93" y="319.82" width="11.64" height="3.90" fill="#8d4f5f"/>
<rect x="378.55" y="319.82" width="3.90" height="3.90" fill="#5b406c"/>
<rect x="382.43" y="319.82" width="7.77" height="3.90" fill="#8d4f5f"/>
<rect x="390.18" y="319.82" width="7.77" height="3.90" fill="#5b406c"/>
<rect x="397.93" y="319.82" width="7.77" height="3.90" fill="#d0845a"/>
<rect x="405.68" y="319.82" width="3.90" height="3.90" fill="#5b406c"/>
<rect x="169.30" y="323.70" width="3.90" height="3.90" fill="#5b406c"/>
<rect x="173.18" y="323.70" width="7.77" height="3.90" fill="#a85a5e"/>
<rect x="180.93" y="323.70" width="11.64" height="3.90" fill="#5b406c"/>
<rect x="192.55" y="323.70" width="3.90" height="3.90" fill="#33283f"/>
<rect x="196.43" y="323.70" width="11.64" height="3.90" fill="#5b406c"/>
<rect x="208.05" y="323.70" width="3.90" height="3.90" fill="#33283f"/>
<rect x="211.93" y="323.70" width="11.64" height="3.90" fill="#5b406c"/>
<rect x="223.55" y="323.70" width="3.90" height="3.90" fill="#33283f"/>
<rect x="227.43" y="323.70" width="11.64" height="3.90" fill="#5b406c"/>
<rect x="239.05" y="323.70" width="3.90" height="3.90" fill="#33283f"/>
<rect x="242.93" y="323.70" width="11.64" height="3.90" fill="#5b406c"/>
<rect x="254.55" y="323.70" width="3.90" height="3.90" fill="#33283f"/>
<rect x="258.43" y="323.70" width="11.64" height="3.90" fill="#5b406c"/>
<rect x="270.05" y="323.70" width="3.90" height="3.90" fill="#33283f"/>
<rect x="273.93" y="323.70" width="11.64" height="3.90" fill="#5b406c"/>
<rect x="285.55" y="323.70" width="3.90" height="3.90" fill="#33283f"/>
<rect x="289.43" y="323.70" width="11.64" height="3.90" fill="#5b406c"/>
<rect x="301.05" y="323.70" width="3.90" height="3.90" fill="#33283f"/>
<rect x="304.93" y="323.70" width="11.64" height="3.90" fill="#5b406c"/>
<rect x="316.55" y="323.70" width="3.90" height="3.90" fill="#33283f"/>
<rect x="320.43" y="323.70" width="11.64" height="3.90" fill="#5b406c"/>
<rect x="332.05" y="323.70" width="3.90" height="3.90" fill="#33283f"/>
<rect x="335.93" y="323.70" width="11.64" height="3.90" fill="#5b406c"/>
<rect x="347.55" y="323.70" width="3.90" height="3.90" fill="#33283f"/>
<rect x="351.43" y="323.70" width="11.64" height="3.90" fill="#5b406c"/>
<rect x="363.05" y="323.70" width="3.90" height="3.90" fill="#33283f"/>
<rect x="366.93" y="323.70" width="11.64" height="3.90" fill="#5b406c"/>
<rect x="378.55" y="323.70" width="3.90" height="3.90" fill="#33283f"/>
<rect x="382.43" y="323.70" width="15.52" height="3.90" fill="#5b406c"/>
<rect x="397.93" y="323.70" width="7.77" height="3.90" fill="#a85a5e"/>
<rect x="405.68" y="323.70" width="3.90" height="3.90" fill="#5b406c"/>
<rect x="169.30" y="327.57" width="15.52" height="3.90" fill="#5b406c"/>
<rect x="184.80" y="327.57" width="7.77" height="3.90" fill="#d0845a"/>
<rect x="192.55" y="327.57" width="3.90" height="3.90" fill="#5b406c"/>
<rect x="196.43" y="327.57" width="11.64" height="3.90" fill="#d0845a"/>
<rect x="208.05" y="327.57" width="3.90" height="3.90" fill="#5b406c"/>
<rect x="211.93" y="327.57" width="11.64" height="3.90" fill="#d0845a"/>
<rect x="223.55" y="327.57" width="3.90" height="3.90" fill="#5b406c"/>
<rect x="227.43" y="327.57" width="11.64" height="3.90" fill="#d0845a"/>
<rect x="239.05" y="327.57" width="3.90" height="3.90" fill="#5b406c"/>
<rect x="242.93" y="327.57" width="11.64" height="3.90" fill="#d0845a"/>
<rect x="254.55" y="327.57" width="3.90" height="3.90" fill="#5b406c"/>
<rect x="258.43" y="327.57" width="11.64" height="3.90" fill="#d0845a"/>
<rect x="270.05" y="327.57" width="3.90" height="3.90" fill="#5b406c"/>
<rect x="273.93" y="327.57" width="11.64" height="3.90" fill="#d0845a"/>
<rect x="285.55" y="327.57" width="3.90" height="3.90" fill="#5b406c"/>
<rect x="289.43" y="327.57" width="11.64" height="3.90" fill="#d0845a"/>
<rect x="301.05" y="327.57" width="3.90" height="3.90" fill="#5b406c"/>
<rect x="304.93" y="327.57" width="11.64" height="3.90" fill="#d0845a"/>
<rect x="316.55" y="327.57" width="3.90" height="3.90" fill="#5b406c"/>
<rect x="320.43" y="327.57" width="11.64" height="3.90" fill="#d0845a"/>
<rect x="332.05" y="327.57" width="3.90" height="3.90" fill="#5b406c"/>
<rect x="335.93" y="327.57" width="11.64" height="3.90" fill="#d0845a"/>
<rect x="347.55" y="327.57" width="3.90" height="3.90" fill="#5b406c"/>
<rect x="351.43" y="327.57" width="11.64" height="3.90" fill="#d0845a"/>
<rect x="363.05" y="327.57" width="3.90" height="3.90" fill="#5b406c"/>
<rect x="366.93" y="327.57" width="11.64" height="3.90" fill="#d0845a"/>
<rect x="378.55" y="327.57" width="3.90" height="3.90" fill="#5b406c"/>
<rect x="382.43" y="327.57" width="11.64" height="3.90" fill="#d0845a"/>
<rect x="394.05" y="327.57" width="15.52" height="3.90" fill="#5b406c"/>
<rect x="173.18" y="331.45" width="7.77" height="3.90" fill="#5b406c"/>
<rect x="180.93" y="331.45" width="3.90" height="3.90" fill="#33283f"/>
<rect x="184.80" y="331.45" width="209.27" height="3.90" fill="#5b406c"/>
<rect x="394.05" y="331.45" width="3.90" height="3.90" fill="#33283f"/>
<rect x="397.93" y="331.45" width="7.77" height="3.90" fill="#5b406c"/>
<rect x="180.93" y="335.32" width="217.02" height="3.90" fill="#33283f"/></g>
<rect x="9.65" y="57" width="1.5" height="514" fill="#ffffff" fill-opacity="0.23"/>
<rect x="71.65" y="57" width="1.5" height="514" fill="#ffffff" fill-opacity="0.23"/>
<rect x="133.65" y="57" width="1.5" height="514" fill="#ffffff" fill-opacity="0.23"/>
<rect x="195.65" y="57" width="1.5" height="514" fill="#ffffff" fill-opacity="0.23"/>
<rect x="257.65" y="57" width="1.5" height="514" fill="#ffffff" fill-opacity="0.23"/>
<rect x="319.65" y="57" width="1.5" height="514" fill="#ffffff" fill-opacity="0.23"/>
<rect x="381.65" y="57" width="1.5" height="514" fill="#ffffff" fill-opacity="0.23"/>
<rect x="443.65" y="57" width="1.5" height="514" fill="#ffffff" fill-opacity="0.23"/>
<rect x="505.65" y="57" width="1.5" height="514" fill="#ffffff" fill-opacity="0.23"/>
<rect x="567.65" y="57" width="1.5" height="514" fill="#ffffff" fill-opacity="0.23"/>
<rect x="0" y="90.75" width="605" height="1.5" fill="#ffffff" fill-opacity="0.23"/>
<rect x="0" y="152.75" width="605" height="1.5" fill="#ffffff" fill-opacity="0.23"/>
<rect x="0" y="214.75" width="605" height="1.5" fill="#ffffff" fill-opacity="0.23"/>
<rect x="0" y="276.75" width="605" height="1.5" fill="#ffffff" fill-opacity="0.23"/>
<rect x="0" y="338.75" width="605" height="1.5" fill="#ffffff" fill-opacity="0.23"/>
<rect x="0" y="400.75" width="605" height="1.5" fill="#ffffff" fill-opacity="0.23"/>
<rect x="0" y="462.75" width="605" height="1.5" fill="#ffffff" fill-opacity="0.23"/>
<rect x="0" y="524.75" width="605" height="1.5" fill="#ffffff" fill-opacity="0.23"/>
<g shape-rendering="auto"><path d="M196.5,339.5 L196.5,525.5 L10.5,525.5 L10.5,91.3 L196.5,91.3 L196.5,280.6 L382.5,280.6 L382.5,91.3 L568.5,91.3 L568.5,525.5 L382.5,525.5 L382.5,339.5 L196.5,339.5" fill="none" stroke="#a2e6a2" stroke-width="1.5"/><g fill="none" stroke="#1a1a1a" stroke-opacity="0.55" stroke-width="2"><circle cx="259.8" cy="268.1" r="9.6"/><circle cx="242.1" cy="278.2" r="8.5"/>
<rect x="243.3" y="275.7" width="30.2" height="20.2" rx="2.2"/>
<path d="M272.5 283.2 L278.2 279.4 L283.6 279.4 Q284.2 279.4 284.2 280 L284.2 290.8 Q284.2 291.4 283.6 291.4 L278.2 291.4 L272.5 287.8 Z"/></g>
<g fill="#f7f7f7"><circle cx="259.8" cy="268.1" r="9.6"/><circle cx="242.1" cy="278.2" r="8.5"/>
<rect x="243.3" y="275.7" width="30.2" height="20.2" rx="2.2"/>
<path d="M272.5 283.2 L278.2 279.4 L283.6 279.4 Q284.2 279.4 284.2 280 L284.2 290.8 Q284.2 291.4 283.6 291.4 L278.2 291.4 L272.5 287.8 Z"/></g><rect x="288.4" y="240" width="1.1" height="66" fill="#b0ee60"/>
<rect x="284.8" y="234.2" width="7.5" height="7.2" fill="#bfe85a"/>
<rect x="294" y="307.6" width="64" height="1.3" fill="#e0421f"/>
<rect x="356.4" y="304.8" width="7.3" height="7.2" fill="#f0501e"/>
<rect x="283.3" y="303" width="11" height="10.5" fill="#ececec" stroke="#9a9a9a" stroke-width="0.6"/>
<rect x="595.6" y="57" width="1.5" height="514" fill="#cfcfcf"/></g>
</svg>

<!-- tilemap overlay -->
<div class="a" style="left:405px;top:533.5px;width:190px;height:34.5px;border-radius:4px;overflow:hidden;border:1px solid rgba(20,20,20,0.5)">
<div class="a" style="left:0;top:0;width:190px;height:12px;background:rgba(62,62,62,0.85);border-top:1px solid rgba(110,110,110,0.35)"></div>
<div class="a" style="left:0;top:12px;width:190px;height:23px;background:rgba(30,30,30,0.88)"></div>
</div>
<div class="l" style="left:481px;top:534.2px;color:#d0d0d0;font-size:11px;letter-spacing:0;text-shadow:0 0 1.5px #000">Tilemap</div>
<div class="l" style="left:410.5px;top:551.2px;color:#d0d0d0">Focus On</div>
<div class="a" style="left:543px;top:551px;width:48px;height:13px;border-radius:3px;background:linear-gradient(#4a4a4a,#3c3c3c);border:1px solid #1c1c1c"></div>
<div class="l" style="left:547.5px;top:551px;color:#c4c4c4;font-size:10px;letter-spacing:0.5px">None</div>
<svg class="a" style="left:581px;top:553px" width="6" height="10" viewBox="0 0 6 10"><path d="M0.8 4 L3 1.2 L5.2 4Z M0.8 6 L3 8.8 L5.2 6Z" fill="#bbb"/></svg>

<!-- top toolbar -->
<div class="btn" style="left:131px;top:2px;width:84px;height:19px"></div>
<div class="a" style="left:158px;top:3px;width:1px;height:17px;background:#2a2a2a"></div>
<div class="a" style="left:187px;top:3px;width:1px;height:17px;background:#2a2a2a"></div>
<svg class="a" style="left:131px;top:2px" width="84" height="19" viewBox="0 0 84 19">
<path d="M7.5 4.3 L20.5 10.8 L7.5 17.3 Z" fill="#c9c9c9"/>
<rect x="38.3" y="5" width="3.1" height="11.8" fill="#c9c9c9"/><rect x="44.2" y="5" width="3.1" height="11.8" fill="#c9c9c9"/>
<path d="M64 5 L74.5 10.9 L64 16.8 Z" fill="#c9c9c9"/><rect x="75.2" y="5" width="3.1" height="11.8" fill="#c9c9c9"/>
</svg>

<div class="btn" style="left:665px;top:4px;width:68px;"><span style="left:20px">Collab</span></div>
<svg class="a" style="left:671px;top:6px" width="13" height="13" viewBox="0 0 13 13"><circle cx="6.4" cy="6.3" r="5.4" fill="#8a8a8a"/><path d="M3.5 6.3 L5.6 8.6 L9.6 3.8" fill="none" stroke="#fafafa" stroke-width="1.9"/></svg>
<div class="dd" style="left:722px;top:11px"></div>
<div class="btn" style="left:743px;top:4px;width:27px;"></div>
<svg class="a" style="left:749px;top:7px" width="16" height="11" viewBox="0 0 16 11"><path d="M3.5 9.8 H12.2 Q14.8 9.8 14.8 7.3 Q14.8 5 12.3 4.9 Q11.6 1.2 8.2 1.2 Q5.3 1.2 4.6 4.2 Q1.2 4.4 1.2 7.1 Q1.2 9.8 3.5 9.8 Z" fill="none" stroke="#cfcfcf" stroke-width="1.1"/></svg>
<div class="btn" style="left:780px;top:4px;width:70px;"><span style="left:4.5px">Account</span></div>
<div class="dd" style="left:839px;top:11px"></div>
<div class="btn" style="left:869px;top:4px;width:70px;"><span style="left:4px">Layers</span></div>
<div class="dd" style="left:928px;top:11px"></div>
<div class="btn" style="left:949px;top:4px;width:70px;"><span style="left:4px">Layout</span></div>
<div class="dd" style="left:1009px;top:11px"></div>

<!-- scene toolbar -->
<div class="a" style="left:0;top:41px;width:605px;height:16px;background:linear-gradient(#3a3a3a,#323232);border-top:1px solid #1e1e1e;border-bottom:1px solid #1e1e1e"></div>
<div class="a" style="left:362px;top:42px;width:1px;height:14px;background:#262626"></div>
<div class="a" style="left:411px;top:42px;width:1px;height:14px;background:#262626"></div>
<div class="l" style="left:367.5px;top:43px;color:#cccccc;font-size:9.6px;letter-spacing:0px">Gizmos</div>
<div class="dd" style="left:405px;top:49.5px;border-top-color:#bbb"></div>
<div class="a" style="left:418px;top:43px;width:181px;height:12px;border-radius:6px;background:#2c2c2c;border:1px solid #262626;box-shadow:inset 0 -1px 0 #3a3a3a"></div>
<svg class="a" style="left:421px;top:44px" width="12" height="10" viewBox="0 0 12 10"><circle cx="4" cy="4" r="2.6" fill="none" stroke="#8a8a8a" stroke-width="1.1"/><path d="M6 6 L8.5 8.5" stroke="#8a8a8a" stroke-width="1.2"/><path d="M8 3 L11 3 L9.5 5Z" fill="#8a8a8a"/></svg>
<div class="l" style="left:432.5px;top:42.3px;color:#7c7c7c">All</div>
<svg class="a" style="left:589px;top:34px" width="15" height="7" viewBox="0 0 15 7"><path d="M0.5 2.3 L5 2.3 L2.75 5.2Z" fill="#c8c8c8"/><rect x="6.5" y="0.5" width="8" height="1.3" fill="#c8c8c8"/><rect x="6.5" y="2.8" width="8" height="1.3" fill="#c8c8c8"/><rect x="6.5" y="5.1" width="8" height="1.3" fill="#c8c8c8"/></svg>

<!-- inspector -->
<div class="a" style="left:609px;top:27px;width:87px;height:15px;background:linear-gradient(#444,#3c3c3c);border-radius:3px 3px 0 0;border:1px solid #202020;border-bottom:none"></div>
<svg class="a" style="left:615px;top:28px" width="12" height="12" viewBox="0 0 12 12"><circle cx="5.8" cy="6" r="4.8" fill="#e6e6e6"/><rect x="5.1" y="5" width="1.9" height="4.2" fill="#3a3a3a"/><circle cx="6" cy="3.3" r="1" fill="#3a3a3a"/></svg>
<div class="l" style="left:629.5px;top:29.2px;color:#d0d0d0;font-size:10.3px;letter-spacing:0.5px">Inspector</div>
<div class="a" style="left:609px;top:41px;width:415px;height:523px;background:#383838"></div>
<div class="a" style="left:609px;top:41px;width:406px;height:43px;background:#3b3b3b"></div>
<div class="a" style="left:1015px;top:41px;width:9px;height:523px;background:#2d2d2d"></div>
<div class="a" style="left:1016px;top:57px;width:8px;height:420px;background:#454545;border-radius:5px;box-shadow:inset 1px 0 0 #333"></div>
<svg class="a" style="left:1016px;top:45px" width="8" height="6" viewBox="0 0 8 6"><path d="M0.5 5.5 L4 0.5 L7.5 5.5Z" fill="#1f1f1f"/></svg>
<svg class="a" style="left:1016px;top:555px" width="8" height="6" viewBox="0 0 8 6"><path d="M0.5 0.5 L4 5.5 L7.5 0.5Z" fill="#1f1f1f"/></svg>
<svg class="a" style="left:998px;top:31px" width="26" height="10" viewBox="0 0 26 10"><path d="M2 4 V2.5 Q2 0.6 4 0.6 Q6 0.6 6 2.5" fill="none" stroke="#9a9a9a" stroke-width="1.2"/><rect x="1" y="4" width="7" height="5.5" fill="#9a9a9a"/><path d="M11 5 L15 5 L13 7.5Z" fill="#c8c8c8"/><rect x="16" y="4" width="8" height="1.2" fill="#c8c8c8"/><rect x="16" y="6.3" width="8" height="1.2" fill="#c8c8c8"/><rect x="16" y="8.6" width="8" height="1.2" fill="#c8c8c8"/></svg>
<svg class="a" style="left:614px;top:48px" width="21" height="20" viewBox="0 0 21 20">
<path d="M1.5 4 L10 1 L19.5 4 L11 7.5 Z" fill="#8bc843"/>
<path d="M1.5 4 L11 7.5 L11 18.5 L2 15 Z" fill="#5cb0e2"/>
<path d="M11 7.5 L19.5 4 L19 14.5 L11 18.5 Z" fill="#e0521f"/>
<path d="M1.5 15.5 L8.5 15.5 L5 19.5Z" fill="#d8d8d8"/></svg>
<div class="cb" style="left:647px;top:50px"></div><svg class="a" style="left:647px;top:49px" width="12" height="12" viewBox="0 0 12 12"><path d="M2.2 6.2 L4.8 9 L10 2.2" fill="none" stroke="#f2f2f2" stroke-width="2" stroke-linecap="round" stroke-linejoin="round"/></svg>
<div class="a" style="left:663px;top:48px;width:286px;height:14px;background:#2f2f2f;border:1px solid #262626;border-bottom-color:#404040"></div>
<div class="l" style="left:666px;top:49.2px;color:#c8c8c8">Grass</div>
<div class="cb" style="left:954px;top:50px"></div>
<div class="l" style="left:968px;top:49.2px;color:#c8c8c8">Static</div>
<svg class="a" style="left:1001px;top:51px" width="9" height="6" viewBox="0 0 9 6"><path d="M0.5 0.5 L8.5 0.5 L4.5 5.5Z" fill="#d8d8d8"/></svg>
<div class="l" style="left:640px;top:67.4px;color:#b8b8b8">Tag</div>
<div class="a" style="left:664px;top:66px;width:157px;height:13px;border-radius:3px;background:linear-gradient(#474747,#3e3e3e);border:1px solid #242424"></div>
<div class="l" style="left:668.5px;top:66.3px;color:#cccccc;font-size:9px;letter-spacing:0.4px">Untagged</div>
<svg class="a" style="left:815px;top:68px" width="6" height="10" viewBox="0 0 6 10"><path d="M0.5 4 L3 1 L5.5 4Z M0.5 6 L3 9 L5.5 6Z" fill="#bbb"/></svg>
<div class="l" style="left:828px;top:67.4px;color:#b8b8b8">Layer</div>
<div class="a" style="left:865px;top:66px;width:144px;height:13px;border-radius:3px;background:linear-gradient(#474747,#3e3e3e);border:1px solid #242424"></div>
<div class="l" style="left:869.5px;top:66.3px;color:#cccccc;font-size:9px;letter-spacing:0.4px">Default</div>
<svg class="a" style="left:999px;top:68px" width="6" height="10" viewBox="0 0 6 10"><path d="M0.5 4 L3 1 L5.5 4Z M0.5 6 L3 9 L5.5 6Z" fill="#bbb"/></svg>
<div class="a" style="left:609px;top:83px;width:406px;height:1px;background:#2e2e2e"></div><div class="a" style="left:609px;top:84px;width:406px;height:1px;background:#474747"></div>
<svg class="a" style="left:612px;top:90px" width="9" height="9" viewBox="0 0 9 9"><path d="M0.5 1 L8.5 1 L4.5 8 Z" fill="#6a6a6a"/></svg>
<svg class="a" style="left:623px;top:87px" width="14" height="12" viewBox="0 0 14 12"><path d="M7 0.5 V7" stroke="#8fd14f" stroke-width="1.6"/><path d="M7 7 L1.5 10.8" stroke="#3d9be0" stroke-width="1.6"/><path d="M7 7 L12.5 10.8" stroke="#e0502a" stroke-width="1.6"/></svg>
<div class="h" style="left:652px;top:88.7px;">Transform</div>
<svg class="a" style="left:986px;top:88px" width="12" height="12" viewBox="0 0 12 12">
<defs><linearGradient id="hg" x1="0" y1="0" x2="0" y2="1"><stop offset="0" stop-color="#6d95d8"/><stop offset="1" stop-color="#2a4f95"/></linearGradient></defs>
<rect x="0.5" y="0.5" width="10.5" height="11" rx="1.5" fill="url(#hg)" stroke="#1d2f55" stroke-width="0.8"/>
<rect x="8.6" y="1.2" width="1.8" height="9.6" fill="#d8e2f2" opacity="0.75"/>
<path d="M3.6 4.3 Q3.6 2.7 5.3 2.7 Q7 2.7 7 4.2 Q7 5.2 5.4 5.8 L5.4 7.2" fill="none" stroke="#f4f4f4" stroke-width="1.1"/><rect x="4.8" y="8.1" width="1.2" height="1.3" fill="#fff"/></svg>
<svg class="a" style="left:1001px;top:88.5px" width="14" height="12" viewBox="0 0 14 12">
<g fill="#dedede"><rect x="4.1" y="0.2" width="1.8" height="2.4" transform="rotate(0 5 5)"/><rect x="4.1" y="0.2" width="1.8" height="2.4" transform="rotate(45 5 5)"/><rect x="4.1" y="0.2" width="1.8" height="2.4" transform="rotate(90 5 5)"/><rect x="4.1" y="0.2" width="1.8" height="2.4" transform="rotate(135 5 5)"/><rect x="4.1" y="0.2" width="1.8" height="2.4" transform="rotate(180 5 5)"/><rect x="4.1" y="0.2" width="1.8" height="2.4" transform="rotate(225 5 5)"/><rect x="4.1" y="0.2" width="1.8" height="2.4" transform="rotate(270 5 5)"/><rect x="4.1" y="0.2" width="1.8" height="2.4" transform="rotate(315 5 5)"/></g><circle cx="5" cy="5" r="2.9" fill="none" stroke="#dedede" stroke-width="1.7"/>
<path d="M9.3 7.4 L12.4 7.4 L10.85 10.2 Z" fill="#cfcfcf"/></svg>
<div class="l" style="left:622px;top:102.9px;">Position</div>
<div class="l" style="left:768px;top:102.9px;color:#a8a8a8">X</div><div class="f" style="left:779px;top:102px;width:68px;height:13px"><span>0</span></div><div class="l" style="left:850px;top:102.9px;color:#a8a8a8">Y</div><div class="f" style="left:861px;top:102px;width:69px;height:13px"><span>0</span></div><div class="l" style="left:932px;top:102.9px;color:#a8a8a8">Z</div><div class="f" style="left:943px;top:102px;width:69px;height:13px"><span>0</span></div>
<div class="l" style="left:622px;top:118.9px;">Rotation</div>
<div class="l" style="left:768px;top:118.9px;color:#a8a8a8">X</div><div class="f" style="left:779px;top:118px;width:68px;height:13px"><span>0</span></div><div class="l" style="left:850px;top:118.9px;color:#a8a8a8">Y</div><div class="f" style="left:861px;top:118px;width:69px;height:13px"><span>0</span></div><div class="l" style="left:932px;top:118.9px;color:#a8a8a8">Z</div><div class="f" style="left:943px;top:118px;width:69px;height:13px"><span>0</span></div>
<div class="l" style="left:622px;top:134.9px;">Scale</div>
<div class="l" style="left:768px;top:134.9px;color:#a8a8a8">X</div><div class="f" style="left:779px;top:134px;width:68px;height:13px"><span>1</span></div><div class="l" style="left:850px;top:134.9px;color:#a8a8a8">Y</div><div class="f" style="left:861px;top:134px;width:69px;height:13px"><span>1</span></div><div class="l" style="left:932px;top:134.9px;color:#a8a8a8">Z</div><div class="f" style="left:943px;top:134px;width:69px;height:13px"><span>1</span></div>
<div class="a" style="left:609px;top:150px;width:406px;height:1px;background:#2e2e2e"></div><div class="a" style="left:609px;top:151px;width:406px;height:1px;background:#474747"></div>
<svg class="a" style="left:612px;top:156px" width="9" height="9" viewBox="0 0 9 9"><path d="M1 0.5 L8 4.5 L1 8.5 Z" fill="#6a6a6a"/></svg>
<svg class="a" style="left:623px;top:153px" width="14" height="14" viewBox="0 0 14 14"><g fill="#7b3cf0"><rect x="0.5" y="0.5" width="3.6" height="3.6"/><rect x="0.5" y="5.0" width="3.6" height="3.6"/><rect x="0.5" y="9.5" width="3.6" height="3.6"/><rect x="5.0" y="0.5" width="3.6" height="3.6"/><rect x="5.0" y="5.0" width="3.6" height="3.6"/><rect x="5.0" y="9.5" width="3.6" height="3.6"/><rect x="9.5" y="0.5" width="3.6" height="3.6"/><rect x="9.5" y="5.0" width="3.6" height="3.6"/><rect x="9.5" y="9.5" width="3.6" height="3.6"/></g></svg>
<div class="cb" style="left:639px;top:155px"></div><svg class="a" style="left:639px;top:154px" width="12" height="12" viewBox="0 0 12 12"><path d="M2.2 6.2 L4.8 9 L10 2.2" fill="none" stroke="#f2f2f2" stroke-width="2" stroke-linecap="round" stroke-linejoin="round"/></svg>
<div class="h" style="left:653px;top:154.7px;">Tilemap</div>
<svg class="a" style="left:1001px;top:154.5px" width="14" height="12" viewBox="0 0 14 12">
<g fill="#dedede"><rect x="4.1" y="0.2" width="1.8" height="2.4" transform="rotate(0 5 5)"/><rect x="4.1" y="0.2" width="1.8" height="2.4" transform="rotate(45 5 5)"/><rect x="4.1" y="0.2" width="1.8" height="2.4" transform="rotate(90 5 5)"/><rect x="4.1" y="0.2" width="1.8" height="2.4" transform="rotate(135 5 5)"/><rect x="4.1" y="0.2" width="1.8" height="2.4" transform="rotate(180 5 5)"/><rect x="4.1" y="0.2" width="1.8" height="2.4" transform="rotate(225 5 5)"/><rect x="4.1" y="0.2" width="1.8" height="2.4" transform="rotate(270 5 5)"/><rect x="4.1" y="0.2" width="1.8" height="2.4" transform="rotate(315 5 5)"/></g><circle cx="5" cy="5" r="2.9" fill="none" stroke="#dedede" stroke-width="1.7"/>
<path d="M9.3 7.4 L12.4 7.4 L10.85 10.2 Z" fill="#cfcfcf"/></svg>
<div class="a" style="left:609px;top:167px;width:406px;height:1px;background:#2e2e2e"></div><div class="a" style="left:609px;top:168px;width:406px;height:1px;background:#474747"></div>
<svg class="a" style="left:612px;top:173px" width="9" height="9" viewBox="0 0 9 9"><path d="M1 0.5 L8 4.5 L1 8.5 Z" fill="#6a6a6a"/></svg>
<svg class="a" style="left:623px;top:170px" width="14" height="14" viewBox="0 0 14 14"><g fill="#7b3cf0"><rect x="0.5" y="0.5" width="3.6" height="3.6"/><rect x="0.5" y="5.0" width="3.6" height="3.6"/><rect x="0.5" y="9.5" width="3.6" height="3.6"/><rect x="5.0" y="0.5" width="3.6" height="3.6"/><rect x="5.0" y="5.0" width="3.6" height="3.6"/><rect x="5.0" y="9.5" width="3.6" height="3.6"/><rect x="9.5" y="0.5" width="3.6" height="3.6"/><rect x="9.5" y="5.0" width="3.6" height="3.6"/><rect x="9.5" y="9.5" width="3.6" height="3.6"/></g><ellipse cx="7.5" cy="9" rx="3.6" ry="2.4" fill="#f0f0f0"/><circle cx="7.5" cy="9" r="1.2" fill="#5a3aa0"/></svg>
<div class="cb" style="left:639px;top:172px"></div><svg class="a" style="left:639px;top:171px" width="12" height="12" viewBox="0 0 12 12"><path d="M2.2 6.2 L4.8 9 L10 2.2" fill="none" stroke="#f2f2f2" stroke-width="2" stroke-linecap="round" stroke-linejoin="round"/></svg>
<div class="h" style="left:653px;top:171.7px;">Tilemap Renderer</div>
<svg class="a" style="left:1001px;top:171.5px" width="14" height="12" viewBox="0 0 14 12">
<g fill="#dedede"><rect x="4.1" y="0.2" width="1.8" height="2.4" transform="rotate(0 5 5)"/><rect x="4.1" y="0.2" width="1.8" height="2.4" transform="rotate(45 5 5)"/><rect x="4.1" y="0.2" width="1.8" height="2.4" transform="rotate(90 5 5)"/><rect x="4.1" y="0.2" width="1.8" height="2.4" transform="rotate(135 5 5)"/><rect x="4.1" y="0.2" width="1.8" height="2.4" transform="rotate(180 5 5)"/><rect x="4.1" y="0.2" width="1.8" height="2.4" transform="rotate(225 5 5)"/><rect x="4.1" y="0.2" width="1.8" height="2.4" transform="rotate(270 5 5)"/><rect x="4.1" y="0.2" width="1.8" height="2.4" transform="rotate(315 5 5)"/></g><circle cx="5" cy="5" r="2.9" fill="none" stroke="#dedede" stroke-width="1.7"/>
<path d="M9.3 7.4 L12.4 7.4 L10.85 10.2 Z" fill="#cfcfcf"/></svg>
<div class="a" style="left:609px;top:184px;width:406px;height:1px;background:#2e2e2e"></div><div class="a" style="left:609px;top:185px;width:406px;height:1px;background:#474747"></div>
<svg class="a" style="left:612px;top:190px" width="9" height="9" viewBox="0 0 9 9"><path d="M0.5 1 L8.5 1 L4.5 8 Z" fill="#6a6a6a"/></svg>
<svg class="a" style="left:622px;top:187px" width="15" height="14" viewBox="0 0 15 14"><path d="M0.5 13.5 V6 L4 3 L7.5 6 L11 3 L14.5 6 V13.5Z" fill="#5a5a5a"/><path d="M0.5 5 L4 1.5 L7.5 5 L11 1.5 L14.5 5" fill="none" stroke="#8fd14f" stroke-width="1.3"/></svg>
<div class="cb" style="left:639px;top:189px"></div><svg class="a" style="left:639px;top:188px" width="12" height="12" viewBox="0 0 12 12"><path d="M2.2 6.2 L4.8 9 L10 2.2" fill="none" stroke="#f2f2f2" stroke-width="2" stroke-linecap="round" stroke-linejoin="round"/></svg>
<div class="h" style="left:653px;top:188.7px;">Edge Collider 2D</div>
<svg class="a" style="left:986px;top:187px" width="12" height="12" viewBox="0 0 12 12">
<defs><linearGradient id="hg" x1="0" y1="0" x2="0" y2="1"><stop offset="0" stop-color="#6d95d8"/><stop offset="1" stop-color="#2a4f95"/></linearGradient></defs>
<rect x="0.5" y="0.5" width="10.5" height="11" rx="1.5" fill="url(#hg)" stroke="#1d2f55" stroke-width="0.8"/>
<rect x="8.6" y="1.2" width="1.8" height="9.6" fill="#d8e2f2" opacity="0.75"/>
<path d="M3.6 4.3 Q3.6 2.7 5.3 2.7 Q7 2.7 7 4.2 Q7 5.2 5.4 5.8 L5.4 7.2" fill="none" stroke="#f4f4f4" stroke-width="1.1"/><rect x="4.8" y="8.1" width="1.2" height="1.3" fill="#fff"/></svg>
<svg class="a" style="left:1001px;top:188.5px" width="14" height="12" viewBox="0 0 14 12">
<g fill="#dedede"><rect x="4.1" y="0.2" width="1.8" height="2.4" transform="rotate(0 5 5)"/><rect x="4.1" y="0.2" width="1.8" height="2.4" transform="rotate(45 5 5)"/><rect x="4.1" y="0.2" width="1.8" height="2.4" transform="rotate(90 5 5)"/><rect x="4.1" y="0.2" width="1.8" height="2.4" transform="rotate(135 5 5)"/><rect x="4.1" y="0.2" width="1.8" height="2.4" transform="rotate(180 5 5)"/><rect x="4.1" y="0.2" width="1.8" height="2.4" transform="rotate(225 5 5)"/><rect x="4.1" y="0.2" width="1.8" height="2.4" transform="rotate(270 5 5)"/><rect x="4.1" y="0.2" width="1.8" height="2.4" transform="rotate(315 5 5)"/></g><circle cx="5" cy="5" r="2.9" fill="none" stroke="#dedede" stroke-width="1.7"/>
<path d="M9.3 7.4 L12.4 7.4 L10.85 10.2 Z" fill="#cfcfcf"/></svg>
<div class="a" style="left:768.5px;top:204px;width:28px;height:20px;border-radius:3px;background:linear-gradient(#4e4e4e,#404040);border:1px solid #1e1e1e;box-shadow:inset 0 1px 0 #5a5a5a"></div>
<svg class="a" style="left:776px;top:208px" width="15" height="13" viewBox="0 0 15 13"><path d="M3 7.7 L6 4.3 M8.7 4.3 L11.7 6" stroke="#d8d8d8" stroke-width="1.1" fill="none"/><g fill="#2a2a2a" stroke="#e8e8e8" stroke-width="1.1"><rect x="1.3" y="8" width="3.2" height="3.6"/><rect x="5.4" y="1.3" width="3.4" height="3"/><rect x="10.5" y="6.3" width="2.9" height="3.4"/></g></svg>
<div class="l" style="left:803px;top:208.9px;color:#c0c0c0">Edit Collider</div>
<div class="l" style="left:622px;top:228.9px;">Material</div>
<div class="f" style="left:768px;top:228px;width:228px;height:13px"><span>None (Physics Material 2D)</span></div>
<svg class="a" style="left:1000px;top:229px" width="11" height="11" viewBox="0 0 11 11"><circle cx="5.5" cy="5.5" r="3.2" fill="none" stroke="#cfcfcf" stroke-width="1.5"/><circle cx="5.5" cy="5.5" r="1" fill="#cfcfcf"/></svg>
<div class="l" style="left:622px;top:244.9px;">Is Trigger</div>
<div class="cb" style="left:768px;top:246px"></div>
<div class="l" style="left:622px;top:260.9px;">Used By Effector</div>
<div class="cb" style="left:768px;top:262px"></div>
<div class="l" style="left:622px;top:276.9px;">Offset</div>
<div class="l" style="left:768px;top:276.9px;color:#a8a8a8">X</div><div class="f" style="left:779px;top:276px;width:68px;height:13px"><span>0</span></div><div class="l" style="left:850px;top:276.9px;color:#a8a8a8">Y</div><div class="f" style="left:861px;top:276px;width:69px;height:13px"><span>0</span></div>
<div class="l" style="left:622px;top:292.9px;">Edge Radius</div>
<div class="f" style="left:768px;top:292px;width:244px;height:13px"><span>0</span></div>
<svg class="a" style="left:612px;top:310px" width="9" height="9" viewBox="0 0 9 9"><path d="M0.5 1 L8.5 1 L4.5 8 Z" fill="#6a6a6a"/></svg>
<div class="l" style="left:622px;top:308.9px;">Points</div>
<div class="l" style="left:635px;top:324.9px;">Size</div>
<div class="f" style="left:768px;top:324px;width:244px;height:13px"><span>13</span></div>
<div class="l" style="left:635px;top:340.9px;">Element 0</div>
<div class="l" style="left:768px;top:340.9px;color:#a8a8a8">X</div><div class="f" style="left:779px;top:340px;width:68px;height:13px"><span>-1</span></div><div class="l" style="left:850px;top:340.9px;color:#a8a8a8">Y</div><div class="f" style="left:861px;top:340px;width:69px;height:13px"><span>-1</span></div>
<div class="l" style="left:635px;top:356.9px;">Element 1</div>
<div class="l" style="left:768px;top:356.9px;color:#a8a8a8">X</div><div class="f" style="left:779px;top:356px;width:68px;height:13px"><span>-1</span></div><div class="l" style="left:850px;top:356.9px;color:#a8a8a8">Y</div><div class="f" style="left:861px;top:356px;width:69px;height:13px"><span>-4</span></div>
<div class="l" style="left:635px;top:372.9px;">Element 2</div>
<div class="l" style="left:768px;top:372.9px;color:#a8a8a8">X</div><div class="f" style="left:779px;top:372px;width:68px;height:13px"><span>-4</span></div><div class="l" style="left:850px;top:372.9px;color:#a8a8a8">Y</div><div class="f" style="left:861px;top:372px;width:69px;height:13px"><span>-4</span></div>
<div class="l" style="left:635px;top:388.9px;">Element 3</div>
<div class="l" style="left:768px;top:388.9px;color:#a8a8a8">X</div><div class="f" style="left:779px;top:388px;width:68px;height:13px"><span>-4</span></div><div class="l" style="left:850px;top:388.9px;color:#a8a8a8">Y</div><div class="f" style="left:861px;top:388px;width:69px;height:13px"><span>3</span></div>
<div class="l" style="left:635px;top:404.9px;">Element 4</div>
<div class="l" style="left:768px;top:404.9px;color:#a8a8a8">X</div><div class="f" style="left:779px;top:404px;width:68px;height:13px"><span>-1</span></div><div class="l" style="left:850px;top:404.9px;color:#a8a8a8">Y</div><div class="f" style="left:861px;top:404px;width:69px;height:13px"><span>3</span></div>
<div class="l" style="left:635px;top:420.9px;">Element 5</div>
<div class="l" style="left:768px;top:420.9px;color:#a8a8a8">X</div><div class="f" style="left:779px;top:420px;width:68px;height:13px"><span>-1</span></div><div class="l" style="left:850px;top:420.9px;color:#a8a8a8">Y</div><div class="f" style="left:861px;top:420px;width:69px;height:13px"><span>-0.05</span></div>
<div class="l" style="left:635px;top:436.9px;">Element 6</div>
<div class="l" style="left:768px;top:436.9px;color:#a8a8a8">X</div><div class="f" style="left:779px;top:436px;width:68px;height:13px"><span>2</span></div><div class="l" style="left:850px;top:436.9px;color:#a8a8a8">Y</div><div class="f" style="left:861px;top:436px;width:69px;height:13px"><span>-0.05</span></div>
<div class="l" style="left:635px;top:452.9px;">Element 7</div>
<div class="l" style="left:768px;top:452.9px;color:#a8a8a8">X</div><div class="f" style="left:779px;top:452px;width:68px;height:13px"><span>2</span></div><div class="l" style="left:850px;top:452.9px;color:#a8a8a8">Y</div><div class="f" style="left:861px;top:452px;width:69px;height:13px"><span>3</span></div>
<div class="l" style="left:635px;top:468.9px;">Element 8</div>
<div class="l" style="left:768px;top:468.9px;color:#a8a8a8">X</div><div class="f" style="left:779px;top:468px;width:68px;height:13px"><span>5</span></div><div class="l" style="left:850px;top:468.9px;color:#a8a8a8">Y</div><div class="f" style="left:861px;top:468px;width:69px;height:13px"><span>3</span></div>
<div class="l" style="left:635px;top:484.9px;">Element 9</div>
<div class="l" style="left:768px;top:484.9px;color:#a8a8a8">X</div><div class="f" style="left:779px;top:484px;width:68px;height:13px"><span>5</span></div><div class="l" style="left:850px;top:484.9px;color:#a8a8a8">Y</div><div class="f" style="left:861px;top:484px;width:69px;height:13px"><span>-4</span></div>
<div class="l" style="left:635px;top:500.9px;">Element 10</div>
<div class="l" style="left:768px;top:500.9px;color:#a8a8a8">X</div><div class="f" style="left:779px;top:500px;width:68px;height:13px"><span>2</span></div><div class="l" style="left:850px;top:500.9px;color:#a8a8a8">Y</div><div class="f" style="left:861px;top:500px;width:69px;height:13px"><span>-4</span></div>
<div class="l" style="left:635px;top:516.9px;">Element 11</div>
<div class="l" style="left:768px;top:516.9px;color:#a8a8a8">X</div><div class="f" style="left:779px;top:516px;width:68px;height:13px"><span>2</span></div><div class="l" style="left:850px;top:516.9px;color:#a8a8a8">Y</div><div class="f" style="left:861px;top:516px;width:69px;height:13px"><span>-1</span></div>
<div class="l" style="left:635px;top:532.9px;">Element 12</div>
<div class="l" style="left:768px;top:532.9px;color:#a8a8a8">X</div><div class="f" style="left:779px;top:532px;width:68px;height:13px"><span>-1</span></div><div class="l" style="left:850px;top:532.9px;color:#a8a8a8">Y</div><div class="f" style="left:861px;top:532px;width:69px;height:13px"><span>-1</span></div>
<svg class="a" style="left:612px;top:550px" width="9" height="9" viewBox="0 0 9 9"><path d="M1 0.5 L8 4.5 L1 8.5 Z" fill="#6a6a6a"/></svg>
<div class="l" style="left:622px;top:548.9px;">Info</div>
<div class="a" style="left:609px;top:567px;width:87px;height:6px;background:#3a3a3a;border-radius:3px 3px 0 0;border:1px solid #1e1e1e"></div>
</div></body></html>
